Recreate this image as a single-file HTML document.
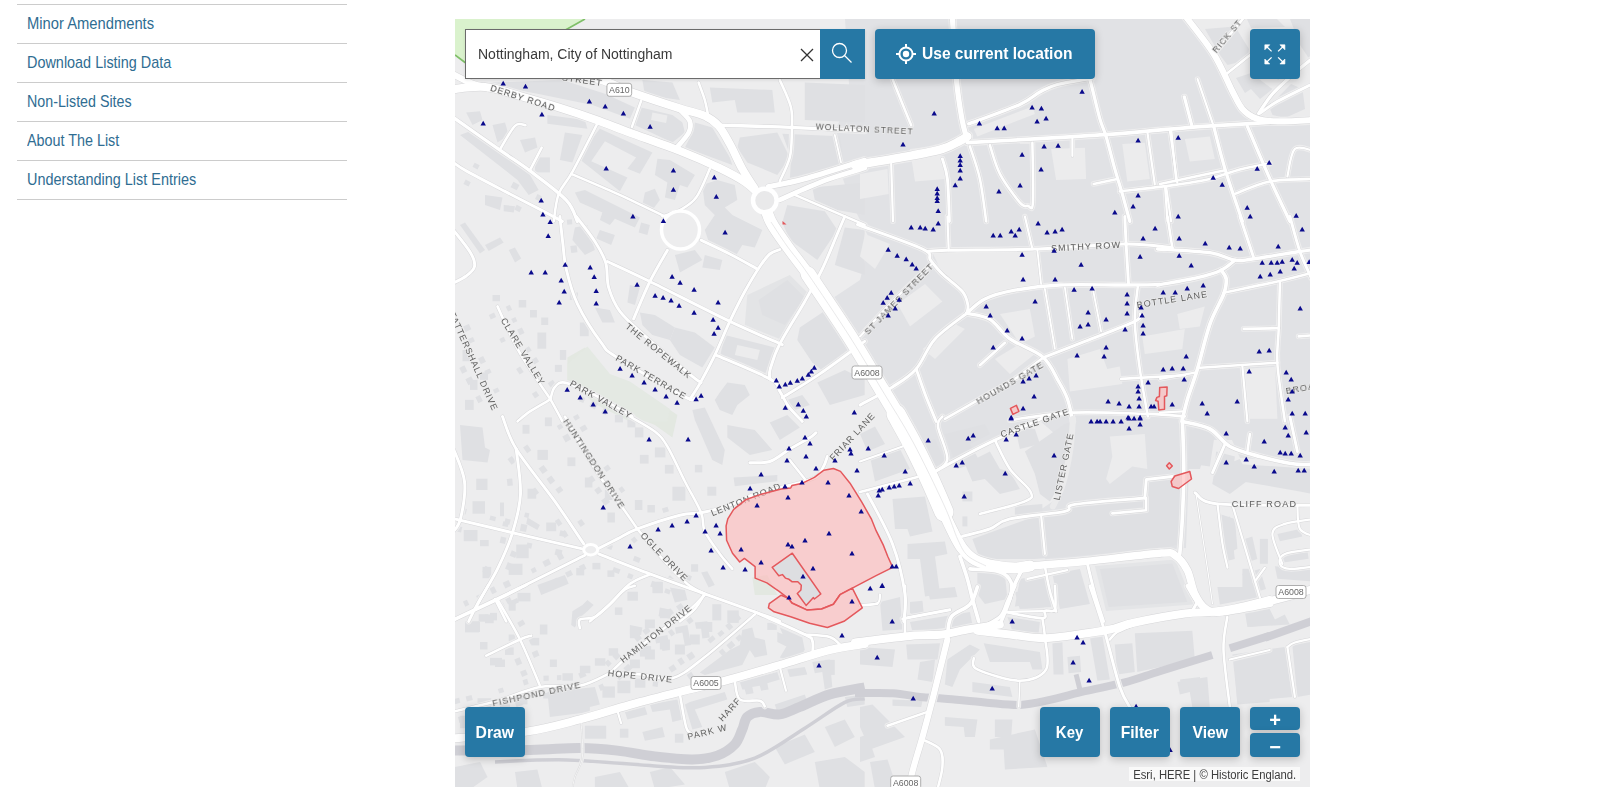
<!DOCTYPE html>
<html lang="en"><head><meta charset="utf-8"><title>Search the List - Map</title>
<style>
html,body{margin:0;padding:0;background:#fff;}
body{width:1621px;height:801px;overflow:hidden;position:relative;font-family:"Liberation Sans",sans-serif;}
.nav{position:absolute;left:17px;top:4px;width:330px;margin:0;padding:0;list-style:none;border-bottom:1px solid #ccc;}
.nav li{height:38px;border-top:1px solid #ccc;line-height:38px;padding-left:10px;font-size:16.4px;color:#2f6d92;white-space:nowrap;}
.nav li span{position:relative;top:-1px;display:inline-block;transform-origin:0 50%;transform:scaleX(.9);}
.btn b{display:inline-block;font-weight:bold;}
#map{position:absolute;left:455px;top:19px;width:855px;height:768px;overflow:hidden;background:#ededee;}
#map svg{position:absolute;left:0;top:0;}
.btn{position:absolute;background:#2678a5;color:#fff;border-radius:4px;box-shadow:0 2px 8px rgba(0,0,0,.22);font-weight:bold;font-size:17px;text-align:center;box-sizing:border-box;}
.search{position:absolute;left:10px;top:10px;width:400px;height:50px;box-sizing:border-box;background:#fff;border:1px solid #6b6b6b;box-shadow:0 1px 3px rgba(0,0,0,.10);}
.search .txt{position:absolute;left:12px;top:0;line-height:48px;font-size:14px;color:#3a3a3a;}
.search .go{position:absolute;right:-1px;top:-1px;width:45px;height:50px;background:#2678a5;}
.attr{position:absolute;left:674px;top:748px;width:171px;height:14px;background:rgba(255,255,255,.65);font-size:12px;line-height:16px;color:#3c3c3c;text-align:center;white-space:nowrap;}
</style></head><body>
<ul class="nav">
<li><span>Minor Amendments</span></li>
<li><span style="transform:scaleX(0.88)">Download Listing Data</span></li>
<li><span style="transform:scaleX(0.87)">Non-Listed Sites</span></li>
<li><span style="transform:scaleX(0.875)">About The List</span></li>
<li><span style="transform:scaleX(0.88)">Understanding List Entries</span></li>
</ul>
<div id="map">
<svg id="basemap" width="855" height="768" viewBox="455 19 855 768">
<!--MAP-->
<rect x="455" y="19" width="855" height="768" fill="#ededee"/>
<path d="M567.4 357.4 L584.9 347.5 L594.9 357.4 L604.9 372.4 L629.9 382.4 L677.4 414.9 L672.4 437.4 L654.9 424.9 L629.9 414.9 L594.9 399.9 L567.4 379.9Z" fill="#e3e8e1"/>
<path d="M752.3 577.4 L767.3 574.9 L777.3 594.9 L754.8 594.9Z" fill="#e3e8e1"/>
<path d="M455 19 L585 19 Q540 45 500 62 Q480 70 465 62.5 L455 55 Z" fill="#daf2cd"/><path d="M585 19 Q540 45 500 62 Q480 70 465 62.5 L455 55" fill="none" stroke="#7fbf68" stroke-width="1.7"/>
<path d="M567.4 363.9 L587.4 346.4 L609.9 373.9 L629.9 381.4 L669.9 408.9 L667.4 421.4 L629.9 421.4 L594.9 403.9 L567.4 378.9Z" fill="#e4e9e3"/>
<g fill="#dfe0e3">
<path d="M845 19 L1310 19 L1310 462 L1240 458 L1232 440 L1190 440 L1186 548 L1045 560 L1040 510 L1055 500 L1062 440 L1040 421 L935 471 L913 442 L882 390 L850 337 L830 300 L860 280 L870 240 L850 200 L830 140 L850 100Z" fill="#e1e2e5"/>
<path d="M492.5 82.5 L562.4 80 L604.9 93.7 L634.9 107.5 L629.9 118.7 L592.4 105 L537.4 93.7 L517.5 90 L492.5 91.2Z"/>
<path d="M636.1 106.2 L672.4 115 L682.4 122.5 L684.9 132.5 L672.4 142.5 L634.9 125Z"/>
<path d="M652.4 112.5 L667.4 115.5 L666.1 123 L651.1 120Z" fill="#ececed"/>
<path d="M694.9 122.5 L712.3 127.5 L729.8 157.4 L732.3 164.9 L684.9 147.5 L689.9 137.5Z"/>
<path d="M709.8 87.5 L772.3 90 L774.8 112.5 L737.3 112.5 L734.8 100 L712.3 102.5Z"/>
<path d="M642.4 80 L672.4 82.5 L679.9 100 L644.9 95Z"/>
<path d="M739.8 137.5 L777.3 132.5 L789.8 157.4 L777.3 174.9 L747.3 162.4 L737.3 147.5Z"/>
<path d="M782.3 133.7 L839.8 136.2 L844.8 169.9 L789.8 179.9 L791 157.4Z"/>
<path d="M804.8 82.5 L864.7 85 L864.7 122.5 L804.8 120Z"/>
<path d="M787.3 204.9 L824.8 211.2 L837.3 229.9 L817.3 259.9 L789.8 239.9 L782.3 222.4Z"/>
<path d="M812.3 187.4 L864.7 182.4 L864.7 214.9 L837.3 209.9 L814.8 199.9Z"/>
<path d="M844.8 227.4 L864.7 229.9 L864.7 274.9 L834.8 264.9Z"/>
<path d="M577.4 157.4 L599.9 128.7 L652.4 152.5 L639.9 173.7 L627.4 168.7 L636.1 157.4 L604.9 141.2 L591.2 161.2 L627.4 177.4 L619.9 191.2Z"/>
<path d="M657.4 158.7 L669.9 159.9 L694.9 174.9 L687.4 187.4 L679.9 184.9 L674.9 199.9 L664.9 197.4 L667.4 182.4 L654.9 174.9Z"/>
<path d="M702.3 184.9 L717.3 179.9 L734.8 184.9 L737.3 199.9 L724.8 207.4 L732.3 214.9 L762.3 229.9 L754.8 247.4 L742.3 244.9 L734.8 257.4 L709.8 244.9 L704.8 229.9 L714.8 214.9 L704.8 204.9Z"/>
<path d="M547.4 115 L584.9 120 L587.4 128.7 L547.4 123.7Z"/>
<path d="M564.9 132.5 L582.4 135 L572.4 162.4 L559.9 159.9Z"/>
<path d="M466.2 112.5 L480 111.2 L482.5 120 L472.5 125Z"/>
<path d="M492.5 125 L505 122.5 L508.7 135 L497.5 142.5Z"/>
<path d="M520 140 L535 137.5 L537.4 147.5 L525 152.5Z"/>
<path d="M535 157.4 L549.9 157.4 L549.9 172.4 L535 172.4Z"/>
<path d="M460 135 L470 131.2 L530 174.9 L538.7 189.9 L528.7 194.9 L517.5 179.9Z"/>
<path d="M485 194.9 L502.5 197.4 L500 209.9 L485 204.9Z"/>
<path d="M503.7 204.9 L515 206.2 L513.7 212.4 L503.7 211.2Z"/>
<path d="M574.9 192.4 L584.9 189.9 L639.9 217.4 L634.9 227.4 L614.9 218.7 L609.9 224.9 L599.9 219.9 L602.4 212.4 L579.9 202.4Z"/>
<path d="M644.9 192.4 L654.9 188.7 L659.9 199.9 L652.4 209.9 L642.4 204.9Z"/>
<path d="M574.9 227.4 L587.4 224.9 L594.9 249.9 L584.9 254.9 L572.4 239.9Z"/>
<path d="M599.9 229.9 L614.9 234.9 L611.2 244.9 L596.2 238.6Z"/>
<path d="M641.1 222.4 L649.9 224.9 L647.4 234.9 L638.6 232.4Z"/>
<path d="M674.9 254.9 L694.9 249.9 L702.3 259.9 L679.9 272.4Z"/>
<path d="M704.8 254.9 L722.3 259.9 L719.8 269.9 L702.3 267.4Z"/>
<path d="M485 244.9 L500 237.4 L503.7 242.4 L488.7 251.1Z"/>
<path d="M508.7 249.9 L515 247.4 L521.2 258.6 L515 262.4Z"/>
<path d="M460 224.9 L465 222.4 L485 249.9 L480 253.6Z"/>
<path d="M747.3 295 L789.8 275 L809.8 295 L782.3 340 L744.8 325Z" fill="#e3e4e6"/>
<path d="M758.6 300 L787.3 280 L804.8 297.5 L784.8 325 L762.3 315Z"/>
<path d="M799.8 327.5 L829.8 307.5 L844.8 325 L852.3 347.5 L824.8 372.4 L812.3 362.4 L797.3 340Z"/>
<path d="M724.8 335 L774.8 347.5 L764.8 374.9 L719.8 357.4Z"/>
<path d="M737.3 345 L759.8 350 L757.3 359.9 L734.8 355Z" fill="#ececed"/>
<path d="M674.9 327.5 L694.9 332.5 L714.8 347.5 L702.3 367.4 L679.9 355 L669.9 340Z"/>
<path d="M639.9 312.5 L654.9 315 L674.9 327.5 L669.9 340 L652.4 335 L642.4 325Z"/>
<path d="M629.9 285 L639.9 287.5 L634.9 305 L627.4 302.5Z"/>
<path d="M719.8 392.4 L727.3 382.4 L744.8 384.9 L749.8 394.9 L737.3 404.9 L732.3 414.9 L719.8 409.9 L714.8 399.9Z"/>
<path d="M727.3 424.9 L754.8 429.9 L772.3 449.9 L749.8 454.9 L727.3 437.4Z"/>
<path d="M769.8 422.4 L787.3 414.9 L799.8 427.4 L779.8 439.9Z"/>
<path d="M817.3 382.4 L844.8 369.9 L864.7 379.9 L864.7 394.9 L829.8 404.9Z"/>
<path d="M787.3 399.9 L802.3 394.9 L809.8 404.9 L794.8 409.9Z"/>
<path d="M692.4 409.9 L704.8 407.4 L724.8 449.9 L722.3 464.9 L712.3 459.9 L694.9 419.9Z"/>
<path d="M460 424.9 L482.5 427.4 L485 447.4 L490 449.9 L487.5 462.4 L462.5 459.9Z"/>
<path d="M518.7 300 L526.2 300 L526.2 307.5 L518.7 307.5Z"/>
<path d="M537.4 332.5 L546.2 332.5 L546.2 348.7 L537.4 348.7Z"/>
<path d="M544.9 417.4 L551.9 417.4 L551.9 426.2 L544.9 426.2Z"/>
<path d="M522.5 424.9 L529.5 424.9 L529.5 433.7 L522.5 433.7Z"/>
<path d="M537.4 449.9 L547.9 449.9 L547.9 459.9 L537.4 459.9Z"/>
<path d="M614.9 414.9 L622.9 414.9 L622.9 422.4 L614.9 422.4Z"/>
<path d="M627.4 419.9 L635.4 419.9 L635.4 427.4 L627.4 427.4Z"/>
<path d="M634.9 427.4 L643.4 427.4 L643.4 437.4 L634.9 437.4Z"/>
<path d="M654.9 447.4 L665.4 447.4 L665.4 457.4 L654.9 457.4Z"/>
<path d="M569.9 292.5 L577.9 292.5 L577.9 300 L569.9 300Z"/>
<path d="M579.9 322.5 L588.7 322.5 L588.7 336.2 L579.9 336.2Z"/>
<path d="M480 372.4 L488 372.4 L488 379.9 L480 379.9Z"/>
<path d="M567.4 457.4 L575.4 457.4 L575.4 466.1 L567.4 466.1Z"/>
<path d="M492.5 295 L500 295 L500 301.2 L492.5 301.2Z"/>
<path d="M530 310 L536.9 310 L536.9 317.5 L530 317.5Z"/>
<path d="M541.2 317.5 L548.2 317.5 L548.2 325 L541.2 325Z"/>
<path d="M470 379.9 L477.5 379.9 L477.5 389.9 L470 389.9Z"/>
<path d="M465 399.9 L473.7 399.9 L473.7 409.9 L465 409.9Z"/>
<path d="M554.9 364.9 L561.9 364.9 L561.9 371.9 L554.9 371.9Z"/>
<path d="M559.9 350 L566.2 350 L566.2 359.9 L559.9 359.9Z"/>
<path d="M462.5 350 L470 350 L470 361.2 L462.5 361.2Z"/>
<path d="M639.9 454.9 L648.6 454.9 L648.6 463.6 L639.9 463.6Z"/>
<path d="M664.9 464.9 L673.6 464.9 L673.6 473.6 L664.9 473.6Z"/>
<path d="M694.9 464.9 L702.3 464.9 L702.3 472.4 L694.9 472.4Z"/>
<path d="M594.9 307.5 L609.9 310 L614.9 322.5 L602.4 322.5Z"/>
<path d="M537.4 584.9 L564.9 574.9 L568.7 583.7 L541.2 594.9Z"/>
<path d="M476.2 478.7 L487.5 478.7 L487.5 490 L476.2 490Z"/>
<path d="M527.5 488.7 L536.2 488.7 L536.2 498.7 L527.5 498.7Z"/>
<path d="M472.5 501.2 L485 501.2 L485 513.7 L472.5 513.7Z"/>
<path d="M500 502.5 L504 502.5 L504 516.2 L500 516.2Z"/>
<path d="M546.2 522.5 L556.2 522.5 L556.2 531.2 L546.2 531.2Z"/>
<path d="M463.7 530 L477.5 530 L477.5 541.2 L463.7 541.2Z"/>
<path d="M480 540 L488.7 540 L488.7 546.2 L480 546.2Z"/>
<path d="M516.2 544.5 L528.7 544.5 L528.7 558.2 L516.2 558.2Z"/>
<path d="M482.5 566.9 L491.2 566.9 L491.2 578.2 L482.5 578.2Z"/>
<path d="M508.7 563.7 L522.5 563.7 L522.5 574.9 L508.7 574.9Z"/>
<path d="M576.2 567.9 L584.2 567.9 L584.2 575.4 L576.2 575.4Z"/>
<path d="M607.4 570.4 L614.4 570.4 L614.4 576.9 L607.4 576.9Z"/>
<path d="M592.4 562.9 L600.4 562.9 L600.4 569.4 L592.4 569.4Z"/>
<path d="M517.5 592.9 L530.5 592.9 L530.5 601.4 L517.5 601.4Z"/>
<path d="M508.7 601.7 L515.7 601.7 L515.7 610.7 L508.7 610.7Z"/>
<path d="M478.7 614.2 L488.2 614.2 L488.2 621.7 L478.7 621.7Z"/>
<path d="M490 612.9 L497 612.9 L497 620.4 L490 620.4Z"/>
<path d="M465 621.2 L479 621.2 L479 632.4 L465 632.4Z"/>
<path d="M531.2 637.9 L539.2 637.9 L539.2 645.4 L531.2 645.4Z"/>
<path d="M490 657.9 L502 657.9 L502 665.4 L490 665.4Z"/>
<path d="M505 647.4 L513.7 647.4 L513.7 654.9 L505 654.9Z"/>
<path d="M627.4 591.7 L637.9 591.7 L637.9 600.7 L627.4 600.7Z"/>
<path d="M652.4 581.7 L662.9 581.7 L662.9 593.2 L652.4 593.2Z"/>
<path d="M614.9 607.4 L622.4 607.4 L622.4 614.9 L614.9 614.9Z"/>
<path d="M672.4 486.7 L685.4 486.7 L685.4 500.7 L672.4 500.7Z"/>
<path d="M707.3 486.7 L716.3 486.7 L716.3 495.7 L707.3 495.7Z"/>
<path d="M691.1 564.2 L698.1 564.2 L698.1 571.7 L691.1 571.7Z"/>
<path d="M639.9 646.1 L651.1 646.1 L651.1 656.6 L639.9 656.6Z"/>
<path d="M712.3 604.2 L721.3 604.2 L721.3 620.4 L712.3 620.4Z"/>
<path d="M727.3 610.4 L738.8 610.4 L738.8 622.9 L727.3 622.9Z"/>
<path d="M767.3 622.9 L776.8 622.9 L776.8 629.9 L767.3 629.9Z"/>
<path d="M824.8 659.9 L834.8 659.9 L834.8 674.9 L824.8 674.9Z"/>
<path d="M584.9 477.5 L592.4 477.5 L592.4 487.5 L584.9 487.5Z"/>
<path d="M604.9 490 L612.4 490 L612.4 500 L604.9 500Z"/>
<path d="M634.9 500 L642.4 500 L642.4 510 L634.9 510Z"/>
<path d="M647.4 505 L654.9 505 L654.9 512.5 L647.4 512.5Z"/>
<path d="M607.4 512.5 L614.9 512.5 L614.9 522.5 L607.4 522.5Z"/>
<path d="M527.5 517.5 L539.9 525 L537.4 530 L526.2 523.7Z"/>
<path d="M572.4 611.2 L582.4 604.9 L587.4 599.9 L593.7 604.9 L587.4 611.2 L579.9 617.4 L574.9 627.4 L571.2 624.9Z"/>
<path d="M669.9 587.4 L684.9 589.9 L687.4 599.9 L674.9 602.4Z"/>
<path d="M659.9 607.4 L672.4 609.9 L669.9 618.7 L658.6 616.2Z"/>
<path d="M629.9 624.9 L642.4 627.4 L641.1 634.9 L629.9 633.7Z"/>
<path d="M701.1 572.4 L707.3 571.2 L714.8 584.9 L708.6 587.4Z"/>
<path d="M733.6 477.5 L777.3 475 L777.3 481.2 L734.8 486.2Z"/>
<path d="M654.9 637.4 L667.4 634.9 L669.9 649.9 L662.4 651.1 L661.1 642.4 L656.1 643.6Z"/>
<path d="M674.9 627.4 L687.4 624.9 L691.1 644.9 L684.9 646.1 L682.4 632.4 L676.1 633.7Z"/>
<path d="M694.9 622.4 L707.3 621.2 L709.8 637.4 L702.3 638.6 L701.1 628.7 L696.1 628.7Z"/>
<path d="M742.3 629.9 L752.3 627.4 L754.8 637.4 L764.8 639.9 L767.3 654.9 L754.8 657.4 L749.8 649.9 L742.3 664.9 L704.8 674.9 L699.8 672.4 L729.8 649.9 L739.8 644.9Z"/>
<path d="M779.8 627.4 L802.3 637.4 L804.8 649.9 L789.8 659.9 L779.8 657.4 L787.3 644.9Z"/>
<path d="M547.4 691.9 L594.9 686.9 L599.9 704.4 L589.9 706.9 L589.9 711.9 L549.9 716.9Z"/>
<path d="M602.4 686.4 L614.9 686.4 L614.9 697.7 L602.4 697.7Z"/>
<path d="M617.4 680.7 L630.4 680.7 L630.4 693.2 L617.4 693.2Z"/>
<path d="M634.9 678.7 L645.4 678.7 L645.4 687.7 L634.9 687.7Z"/>
<path d="M584.9 725.7 L606.2 725.7 L606.2 738.7 L584.9 738.7Z"/>
<path d="M619.9 728.7 L628.4 728.7 L628.4 737.7 L619.9 737.7Z"/>
<path d="M674.9 733.7 L683.4 733.7 L683.4 742.7 L674.9 742.7Z"/>
<path d="M562.4 673.2 L572.9 673.2 L572.9 680.7 L562.4 680.7Z"/>
<path d="M579.9 665.7 L590.4 665.7 L590.4 673.2 L579.9 673.2Z"/>
<path d="M594.9 658.2 L605.4 658.2 L605.4 665.7 L594.9 665.7Z"/>
<path d="M608.7 648.2 L618.1 648.2 L618.1 655.7 L608.7 655.7Z"/>
<path d="M460 715.7 L470.5 715.7 L470.5 728.2 L460 728.2Z"/>
<path d="M477.5 698.2 L491.2 698.2 L491.2 708.2 L477.5 708.2Z"/>
<path d="M500 704.4 L510 704.4 L510 711.9 L500 711.9Z"/>
<path d="M517.5 696.9 L527.5 696.9 L527.5 704.4 L517.5 704.4Z"/>
<path d="M539.9 624.5 L547.4 624.5 L547.4 634.5 L539.9 634.5Z"/>
<path d="M549.9 659.5 L556.9 659.5 L556.9 667 L549.9 667Z"/>
<path d="M480 642 L487.5 642 L487.5 649.5 L480 649.5Z"/>
<path d="M495 659.5 L505 659.5 L505 667 L495 667Z"/>
<path d="M508.7 634.5 L515.2 634.5 L515.2 641 L508.7 641Z"/>
<path d="M470 622 L480 622 L480 632 L470 632Z"/>
<path d="M485 614.5 L493.7 614.5 L493.7 623.2 L485 623.2Z"/>
<path d="M624.9 711.9 L644.9 706.9 L647.4 714.4 L627.4 719.4Z"/>
<path d="M649.9 704.4 L677.4 699.4 L682.4 719.4 L672.4 721.9 L669.9 709.4 L652.4 711.9Z"/>
<path d="M689.9 701.9 L724.8 691.9 L727.3 699.4 L694.9 709.4 L702.3 726.9 L692.4 729.4 L684.9 704.4Z"/>
<path d="M642.4 731.9 L662.4 726.9 L664.9 736.9 L644.9 740.7Z"/>
<path d="M739.8 681.9 L777.3 671.9 L779.8 679.4 L767.3 683.2 L768.6 689.4 L761.1 690.7 L759.8 685.7 L752.3 686.9 L753.6 693.2 L746.1 694.4 L744.8 689.4 L742.3 689.4Z"/>
<path d="M787.3 669.4 L804.8 667 L807.3 674.4 L789.8 676.9Z"/>
<path d="M812.3 662 L829.8 659.5 L832.3 686.9 L824.8 689.4 L822.3 671.9 L814.8 673.2Z"/>
<path d="M774.8 704.4 L804.8 694.4 L807.3 701.9 L777.3 711.9Z"/>
<path d="M777.3 632 L802.3 642 L804.8 657 L789.8 659.5 L787.3 647 L777.3 642Z"/>
<path d="M455 766.9 L480 761.9 L487.5 776.9 L470 789.4 L455 789.4Z"/>
<path d="M515 771.9 L537.4 769.4 L542.4 789.4 L517.5 789.4Z"/>
<path d="M594.9 776.9 L619.9 771.9 L629.9 789.4 L594.9 789.4Z"/>
<path d="M649.9 771.9 L669.9 766.9 L684.9 784.4 L654.9 789.4Z"/>
<path d="M724.8 771.9 L754.8 761.9 L769.8 776.9 L764.8 789.4 L729.8 789.4Z"/>
<path d="M774.8 746.9 L804.8 734.4 L814.8 751.9 L784.8 764.4Z"/>
<path d="M824.8 726.9 L844.8 719.4 L854.8 736.9 L834.8 746.9Z"/>
<path d="M814.8 761.9 L844.8 756.9 L864.7 771.9 L864.7 789.4 L819.8 789.4Z"/>
<path d="M844.8 696.9 L864.7 694.4 L864.7 704.4 L847.3 706.9Z"/>
<path d="M629.9 629.5 L639.9 629.5 L639.9 638.2 L629.9 638.2Z"/>
<path d="M644.9 619.5 L654.9 619.5 L654.9 628.2 L644.9 628.2Z"/>
<path d="M659.9 609.5 L669.9 609.5 L669.9 618.2 L659.9 618.2Z"/>
<path d="M674.9 644.5 L684.9 644.5 L684.9 654.5 L674.9 654.5Z"/>
<path d="M689.9 634.5 L699.8 634.5 L699.8 644.5 L689.9 644.5Z"/>
<path d="M702.3 622 L712.3 622 L712.3 632 L702.3 632Z"/>
<path d="M644.9 649.5 L654.9 649.5 L654.9 659.5 L644.9 659.5Z"/>
<path d="M659.9 639.5 L669.9 639.5 L669.9 649.5 L659.9 649.5Z"/>
<path d="M629.9 659.5 L639.9 659.5 L639.9 668.2 L629.9 668.2Z"/>
<path d="M892.5 499 L925 496.5 L932.5 531.4 L910 536.4 L907.5 528.9 L895 528.9Z"/>
<path d="M907.5 543.9 L944.9 541.4 L947.4 553.9 L935 556.4 L940 593.9 L925 596.4 L920 558.9 L907.5 558.9Z"/>
<path d="M860 434 L875 426.5 L885 444 L867.5 451.5Z"/>
<path d="M870 456.5 L900 449 L910 469 L875 481.5Z"/>
<path d="M910 603.9 L922.5 602.6 L923.7 612.6 L911.2 613.9Z"/>
<path d="M944.9 434 L984.9 424 L989.9 434 L969.9 444 L979.9 461.5 L957.4 469Z"/>
<path d="M925 441.5 L935 439 L944.9 461.5 L935 466.5Z"/>
<path d="M964.9 464 L989.9 451.5 L999.9 469 L1009.9 471.5 L1019.9 489 L999.9 494 L984.9 479 L972.4 481.5Z"/>
<path d="M1014.9 426.5 L1034.9 429 L1039.9 444 L1019.9 449Z"/>
<path d="M1024.9 451.5 L1064.9 424 L1072.4 421.5 L1067.4 451.5 L1059.9 484 L1049.9 501.4 L1039.9 494 L1034.9 474Z"/>
<path d="M962.4 491.5 L972.4 491.5 L972.4 501.4 L962.4 501.4Z"/>
<path d="M1014.9 506.4 L1042.4 503.9 L1042.4 513.9 L1014.9 516.4Z"/>
<path d="M962.4 516.4 L967.4 516.4 L967.4 526.4 L962.4 526.4Z"/>
<path d="M972.4 538.9 L1034.9 516.4 L1064.9 512.7 L1074.9 505.2 L1144.8 499 L1147.3 480.2 L1172.3 477.7 L1179.8 481.5 L1179.8 543.9 L1159.8 548.9 L1034.9 558.9 L979.9 558.9Z"/>
<path d="M1094.9 565.9 L1175.3 559.4 L1193.5 604.4 L1106.1 610.9Z" fill="#e4e5e7"/>
<path d="M1099.9 568.9 L1172.3 563.4 L1187.3 601.9 L1108.6 606.9Z"/>
<path d="M977.4 571.4 L1004.9 573.9 L1007.4 598.9 L984.9 603.9 L977.4 593.9Z"/>
<path d="M1019.9 578.9 L1044.9 573.9 L1052.4 603.9 L1014.9 606.4Z"/>
<path d="M1052.4 573.9 L1079.9 568.9 L1089.9 603.9 L1059.9 608.9Z"/>
<path d="M1194.8 424 L1214.8 434 L1209.8 466.5 L1192.3 464Z"/>
<path d="M1214.8 469 L1239.8 459 L1249.8 479 L1229.8 494 L1212.3 484Z"/>
<path d="M1219.8 518.9 L1229.8 516.4 L1234.8 558.9 L1224.8 561.4Z"/>
<path d="M1244.8 538.9 L1252.3 536.4 L1257.3 558.9 L1249.8 561.4Z"/>
<path d="M1242.3 573.9 L1259.8 568.9 L1266 588.9 L1249.8 593.9Z"/>
<path d="M880 602 L900 597 L902.5 629.5 L882.5 630.7Z"/>
<path d="M910 602 L922.5 600.7 L922.5 612 L910 613.2Z"/>
<path d="M910 622 L969.9 612 L972.4 624.5 L912.5 632Z"/>
<path d="M927.5 589.5 L954.9 587 L957.4 597 L930 599.5Z"/>
<path d="M860 647 L895 649.5 L892.5 667 L860 664.5Z"/>
<path d="M906.2 644.5 L940 643.2 L937.5 659.5 L907.5 659.5Z"/>
<path d="M920 662 L935 659.5 L932.5 681.9 L917.5 679.4Z"/>
<path d="M947.4 659.5 L969.9 644.5 L979.9 649.5 L959.9 669.4 L952.4 686.9 L944.9 684.4Z"/>
<path d="M983.7 643.2 L1039.9 652 L1042.4 669.4 L1032.4 669.4 L1029.9 662 L989.9 662Z"/>
<path d="M972.4 681.9 L1009.9 686.9 L1012.4 696.9 L972.4 691.9Z"/>
<path d="M1052.4 643.2 L1062.4 642 L1063.6 674.4 L1053.6 674.4Z"/>
<path d="M1089.9 637 L1102.3 635.7 L1109.8 679.4 L1097.4 680.7Z"/>
<path d="M1067.4 657 L1079.9 655.7 L1081.1 671.9 L1068.6 673.2Z"/>
<path d="M1114.8 644.5 L1132.3 643.2 L1134.8 671.9 L1117.3 674.4Z"/>
<path d="M1134.8 633.2 L1192.3 630.7 L1194.8 659.5 L1137.3 671.9Z"/>
<path d="M892.5 699.4 L922.5 700.7 L921.2 706.9 L892.5 705.7Z"/>
<path d="M860 706.9 L872.5 704.4 L905 736.9 L870 749.4 L860 726.9Z"/>
<path d="M944.9 716.9 L977.4 719.4 L974.9 736.9 L964.9 736.9 L963.7 726.9 L944.9 725.7Z"/>
<path d="M994.9 719.4 L1012.4 719.4 L1011.2 736.9 L994.9 736.9Z"/>
<path d="M989.9 739.4 L1034.9 729.4 L1047.4 766.9 L1004.9 769.4 L1003.7 749.4 L989.9 749.4Z"/>
<path d="M1177.3 681.9 L1207.3 676.9 L1209.8 706.9 L1192.3 706.9 L1189.8 691.9 L1179.8 694.4Z"/>
<path d="M1234.8 669.4 L1269.7 662 L1269.7 701.9 L1237.3 704.4Z"/>
<path d="M1247.3 609.5 L1269.7 607 L1269.7 624.5 L1249.8 627Z"/>
<path d="M1014.9 592 L1049.9 589.5 L1051.1 607 L1019.9 609.5Z"/>
<path d="M982.4 592 L999.9 589.5 L1003.7 599.5 L984.9 602Z"/>
<path d="M1007.4 617 L1039.9 622 L1038.6 633.2 L1012.4 630.7Z"/>
<path d="M870 761.9 L887.5 759.4 L897.5 789.4 L875 789.4Z"/>
<path d="M860 736.9 L867.5 734.4 L875 756.9 L860 761.9Z"/>
<path d="M1190 429 L1209.9 434 L1200 468.9 L1187.5 468.9Z"/>
<path d="M1216.2 451.5 L1234.9 456.5 L1232.4 476.4 L1213.7 472.7Z"/>
<path d="M1237.4 463.9 L1312.3 468.9 L1312.3 493.9 L1299.8 491.4 L1242.4 481.4Z"/>
<path d="M1219.9 513.9 L1234.9 518.9 L1237.4 548.8 L1227.4 553.8 L1222.4 531.4Z"/>
<path d="M1244.9 538.9 L1252.4 538.9 L1252.4 553.8 L1244.9 553.8Z"/>
<path d="M1259.9 538.9 L1267.9 538.9 L1267.9 563.8 L1259.9 563.8Z"/>
<path d="M1242.4 568.8 L1252.9 568.8 L1252.9 591.3 L1242.4 591.3Z"/>
<path d="M1277.4 533.9 L1299.8 528.9 L1302.3 536.4 L1279.9 541.3Z"/>
<path d="M1282.3 553.8 L1307.3 550.1 L1308.6 558.8 L1283.6 562.6Z"/>
<path d="M1274.9 566.3 L1312.3 568.8 L1312.3 581.3 L1277.4 578.8Z"/>
<path d="M1232.4 654.4 L1284.8 646.9 L1292.3 696.9 L1237.4 701.9Z"/>
<path d="M1180 679.4 L1200 676.9 L1202.4 696.9 L1192.5 698.1 L1191.2 686.9 L1181.2 688.1Z"/>
<path d="M1244.9 612 L1269.9 609.5 L1274.9 619.5 L1284.8 614.5 L1289.8 624.5 L1247.4 627Z"/>
<path d="M1292.3 644.4 L1312.3 639.4 L1312.3 694.4 L1297.3 696.9Z"/>
<path d="M1217.4 587 L1259.9 587 L1259.9 597 L1219.9 604.5Z"/>
<path d="M932.5 252.7 L1037.4 251 L1040.4 284.5 L1014.9 289.5 L984.9 298.5 L967.9 311.9 L962.9 292 L942.9 274.5Z" fill="#ececed"/>
<path d="M865 234 L890 244 L875 269 L860 256.5Z" fill="#ececed"/>
<path d="M897.5 303.9 L925 284 L942.4 301.4 L910 326.4Z" fill="#ececed"/>
<path d="M922.5 348.9 L954.9 323.9 L964.9 328.9 L935 358.9Z" fill="#ececed"/>
<path d="M1067.4 358.9 L1099.9 348.9 L1107.3 368.9 L1119.8 366.4 L1122.3 383.9 L1069.9 391.4Z" fill="#ececed"/>
<path d="M994.9 358.9 L1019.9 343.9 L1034.9 353.9 L1009.9 373.9Z" fill="#ececed"/>
<path d="M999.9 313.9 L1029.9 308.9 L1034.9 336.4 L1019.9 343.9Z" fill="#ececed"/>
<path d="M1177.3 313.9 L1204.8 306.4 L1199.8 326.4 L1179.8 328.9Z" fill="#ececed"/>
<path d="M1142.3 336.4 L1184.8 328.9 L1182.3 348.9 L1144.8 353.9Z" fill="#ececed"/>
<path d="M1191.2 17.8 L1312.3 17.8 L1312.3 118.9 L1259.9 117.6 L1246.1 110.1 L1234.9 91.4 L1216.2 54Z" fill="#ececed"/>
<path d="M1205 29 L1235 26.5 L1249 49 L1247.5 60 L1227.5 65 L1220 55Z"/>
<path d="M1236 78 L1251 73 L1272.5 89 L1260 99 L1251 89 L1245 93Z"/>
<path d="M1269 106.5 L1291 84 L1302.5 89 L1305 109 L1285 118 L1272.5 115Z"/>
<path d="M1247 19 L1277 19 L1285 27 L1251 28Z"/>
<path d="M1290 19 L1310 19 L1310 60 L1300 45Z"/>
<path d="M1262 60 L1285 45 L1300 62 L1278 80Z"/>
<path d="M1109.8 436.5 L1144.8 434 L1147.3 469 L1132.3 466.5 L1109.8 484 L1106.1 479 L1112.3 456.5Z" fill="#ececed"/>
<path d="M1244.9 368.8 L1274.9 366.8 L1277.4 418.8 L1247.9 418.8Z" fill="#ececed"/>
<path d="M1051.1 148.9 L1084.9 147.7 L1086.1 178.9 L1056.1 180.1Z" fill="#ececed"/>
<path d="M1019.9 136.4 L1034.9 136.4 L1034.9 143.9 L1019.9 143.9Z" fill="#ececed"/>
<path d="M973.7 128.9 L1032.4 106.4 L1034.9 113.9 L977.4 136.4Z" fill="#ececed"/>
<path d="M1122.3 143.9 L1144.8 142.7 L1149.8 178.9 L1127.3 181.4Z" fill="#ececed"/>
<path d="M910 148.9 L940 145.2 L944.9 178.9 L915 181.4Z" fill="#ececed"/>
<path d="M860 173.9 L887.5 168.9 L888.7 193.9 L860 198.9Z" fill="#ececed"/>
<path d="M1184.8 138.9 L1209.8 136.4 L1214.8 158.9 L1189.8 161.4Z" fill="#ececed"/>
<path d="M494.1 312.5 L496.1 316.9 L490.8 319.4 L488.8 315Z"/>
<path d="M509.8 304.8 L512.1 309.7 L508 311.6 L505.7 306.7Z"/>
<path d="M515.4 317 L517.3 321.2 L513.2 323.1 L511.2 319Z"/>
<path d="M503.7 336.8 L505.7 341.1 L501.3 343.1 L499.3 338.9Z"/>
<path d="M521.9 327.5 L524.5 332.9 L519.7 335.2 L517.1 329.8Z"/>
<path d="M528.9 346.2 L531.7 350.6 L527.8 353.1 L525 348.7Z"/>
<path d="M520.1 366.4 L523.7 372 L519.6 374.6 L516.1 369Z"/>
<path d="M536.2 356.9 L539.1 361.4 L534.4 364.5 L531.5 359.9Z"/>
<path d="M536.1 391 L539.2 395.6 L535 398.4 L531.9 393.8Z"/>
<path d="M552.8 379.8 L555.8 384.2 L550.7 387.6 L547.7 383.3Z"/>
<path d="M468.9 323.9 L471.3 329.2 L465.6 331.9 L463.1 326.6Z"/>
<path d="M472.9 337 L474.9 341.3 L469.9 343.6 L467.9 339.3Z"/>
<path d="M464.4 365.3 L467.3 371.2 L462.2 373.7 L459.3 367.9Z"/>
<path d="M483.1 356.1 L486 361.7 L480.9 364.3 L478 358.6Z"/>
<path d="M471.2 376.3 L474.2 382.3 L468.4 385.2 L465.4 379.2Z"/>
<path d="M489.6 368.4 L491.6 372.5 L486.3 375.1 L484.2 371Z"/>
<path d="M479.9 395 L482.9 400.9 L478.4 403.2 L475.4 397.2Z"/>
<path d="M497.7 387.4 L499.7 391.3 L494.8 393.8 L492.8 389.8Z"/>
<path d="M561 423.5 L563.4 427.6 L559.1 430 L556.7 425.9Z"/>
<path d="M577.7 414 L579.9 418.1 L575.3 420.7 L573 416.7Z"/>
<path d="M567.8 433.5 L571.1 439.2 L565.6 442.4 L562.3 436.6Z"/>
<path d="M585 424.4 L587.7 429 L582.2 432.2 L579.5 427.5Z"/>
<path d="M592 475.3 L595.5 480.2 L591.5 483.1 L588 478.2Z"/>
<path d="M607.9 464.4 L611 468.8 L606.4 472.1 L603.3 467.7Z"/>
<path d="M598.9 486.5 L602.3 491.3 L597.6 494.6 L594.2 489.9Z"/>
<path d="M606.3 496.8 L610.1 502.1 L605 505.8 L601.1 500.5Z"/>
<path d="M622 486.2 L625.2 490.6 L621.5 493.3 L618.3 488.8Z"/>
<path d="M512.2 478.4 L512.9 485.5 L507.5 486.1 L506.8 479Z"/>
<path d="M529.4 513.3 L528.4 518 L524.1 517.1 L525.1 512.4Z"/>
<path d="M508.8 522.3 L507.8 527 L502.3 525.9 L503.3 521.2Z"/>
<path d="M527.4 525 L526 531.9 L519.8 530.7 L521.2 523.7Z"/>
<path d="M517.4 552.7 L515.2 558.1 L509.6 555.8 L511.8 550.3Z"/>
<path d="M513.7 564.5 L510.9 571.1 L505.1 568.7 L507.9 562.1Z"/>
<path d="M489.7 568.2 L486.5 573.8 L482.3 571.4 L485.5 565.8Z"/>
<path d="M511.8 456 L516 461.6 L511.6 464.8 L507.5 459.2Z"/>
<path d="M527.3 444.5 L531.4 450.2 L527.2 453.3 L523.1 447.6Z"/>
<path d="M543.6 464.9 L547.7 470.4 L542.6 474.1 L538.6 468.6Z"/>
<path d="M535.2 487.4 L539.1 492.7 L535.4 495.5 L531.5 490.1Z"/>
<path d="M551.3 475.6 L555.2 480.8 L550.4 484.4 L546.5 479.1Z"/>
<path d="M560.3 485.9 L563.4 490.2 L558.5 493.8 L555.3 489.5Z"/>
<path d="M558.8 518.5 L562.4 523.8 L558.4 526.4 L554.8 521.1Z"/>
<path d="M564.8 529.9 L568.5 535.4 L564.6 538.1 L560.9 532.6Z"/>
<path d="M581.5 518.9 L585 524 L580.7 526.9 L577.2 521.8Z"/>
<path d="M565.2 537.1 L559.2 535.7 L560.4 530.3 L566.5 531.7Z"/>
<path d="M561.1 556.3 L554.5 554.8 L555.9 548.7 L562.5 550.3Z"/>
<path d="M531.2 548.8 L526.2 547.6 L527.4 542.4 L532.4 543.6Z"/>
<path d="M509.4 524.8 L504.2 523.6 L505.5 518.3 L510.7 519.6Z"/>
<path d="M505 544 L499.6 542.7 L501 536.4 L506.4 537.7Z"/>
<path d="M495.1 521.2 L489.4 519.8 L490.5 515.5 L496.1 516.9Z"/>
<path d="M475.5 536.9 L470.7 535.8 L472 530.5 L476.7 531.6Z"/>
<path d="M465.6 514.5 L460.4 513.3 L461.7 507.9 L466.9 509.1Z"/>
<path d="M461 532.6 L456.4 531.5 L457.7 526 L462.3 527.1Z"/>
<path d="M586.5 568.7 L581.3 571.3 L578.8 566.3 L584 563.7Z"/>
<path d="M564.3 558.1 L559.3 560.6 L556.7 555.4 L561.7 552.9Z"/>
<path d="M573.1 574.8 L567.4 577.6 L565 572.8 L570.7 570Z"/>
<path d="M551.2 563.9 L545 567 L542.3 561.7 L548.6 558.6Z"/>
<path d="M559.6 582.6 L555 584.9 L552.5 579.9 L557 577.6Z"/>
<path d="M536.9 571.3 L532.7 573.4 L530.6 569.3 L534.8 567.1Z"/>
<path d="M511.3 585.7 L505.4 588.5 L502.6 582.7 L508.5 579.9Z"/>
<path d="M519 602.2 L513.4 604.9 L511.4 600.6 L517 597.9Z"/>
<path d="M496.9 592.1 L492.3 594.3 L489.5 588.4 L494 586.2Z"/>
<path d="M505.6 607.9 L499.2 610.9 L496.5 605.3 L502.9 602.2Z"/>
<path d="M483.6 598.2 L478.3 600.7 L476.1 596.1 L481.4 593.5Z"/>
<path d="M469.3 604.7 L465.3 606.7 L462.9 601.6 L466.9 599.7Z"/>
<path d="M607.6 543.7 L613 545.8 L611.4 550 L606 547.9Z"/>
<path d="M613.9 567.1 L620.5 569.6 L618.8 573.9 L612.2 571.4Z"/>
<path d="M628.7 573.1 L633.5 575 L631.8 579.4 L627 577.5Z"/>
<path d="M634.6 555.8 L640.8 558.2 L639 562.9 L632.8 560.5Z"/>
<path d="M652.2 580.8 L657.8 582.9 L655.8 588.4 L650.2 586.4Z"/>
<path d="M665.7 588.3 L670.9 590.2 L669.3 594.4 L664.1 592.5Z"/>
<path d="M672.2 568.7 L678.4 571 L676.9 575.3 L670.6 573Z"/>
<path d="M686.7 574.3 L692 576.3 L690.2 581.1 L684.9 579.2Z"/>
<path d="M634.4 536.5 L637.7 540.5 L634.1 543.5 L630.8 539.5Z"/>
<path d="M670 575.2 L673.7 578.8 L669.8 582.7 L666.1 579.1Z"/>
<path d="M661.9 508.6 L667.5 506.7 L669 511.3 L663.4 513.1Z"/>
<path d="M458 717 L462.6 715.8 L464.1 721.9 L459.5 723Z"/>
<path d="M452.6 699.4 L459.1 697.7 L460.4 702.8 L453.9 704.5Z"/>
<path d="M469.8 715.4 L476.7 713.7 L477.9 718.7 L471.1 720.4Z"/>
<path d="M465.6 696.4 L471.5 695 L472.8 700.1 L466.9 701.6Z"/>
<path d="M497.8 689 L502.7 687.4 L504.2 691.9 L499.3 693.5Z"/>
<path d="M514.7 701.5 L521.2 699.4 L523 705 L516.5 707.1Z"/>
<path d="M522.5 680.2 L527.1 678.8 L528.7 683.9 L524.1 685.4Z"/>
<path d="M543 693 L550.1 692.8 L550.3 698.4 L543.2 698.6Z"/>
<path d="M543.4 675.7 L548.7 675.5 L548.8 680.7 L543.6 680.9Z"/>
<path d="M556.7 692.5 L562.4 692.4 L562.6 697.9 L556.9 698.1Z"/>
<path d="M556.9 675.2 L561.3 675.1 L561.4 680.1 L557 680.2Z"/>
<path d="M570.3 692.9 L574.8 692.7 L575 697.2 L570.5 697.3Z"/>
<path d="M585.8 690.6 L591.2 688.3 L593.5 693.9 L588.1 696.2Z"/>
<path d="M578.2 673.6 L584.5 671 L586.5 675.9 L580.2 678.5Z"/>
<path d="M598.3 685.4 L602.7 683.5 L605 689.1 L600.6 690.9Z"/>
<path d="M615.6 676.2 L620.6 671.5 L624.5 675.8 L619.5 680.4Z"/>
<path d="M604.5 662.8 L608 659.6 L611.7 663.6 L608.3 666.9Z"/>
<path d="M623.3 668.2 L628.2 663.7 L632.4 668.3 L627.6 672.8Z"/>
<path d="M612.2 656.1 L616.8 651.8 L620.8 656.1 L616.2 660.4Z"/>
<path d="M644.5 650.2 L648.2 647.4 L652 652.3 L648.3 655.2Z"/>
<path d="M633.6 637.2 L638.4 633.5 L642 638.2 L637.2 641.9Z"/>
<path d="M642.2 630.7 L647.4 626.8 L650.7 631.2 L645.6 635.1Z"/>
<path d="M667.9 631.7 L671.6 629 L675.2 633.8 L671.5 636.5Z"/>
<path d="M666.4 611.2 L670.4 608.3 L674 613.1 L670 616Z"/>
<path d="M686 619.9 L690.5 616.7 L693.7 621.1 L689.3 624.3Z"/>
<path d="M676 606.6 L680.9 603 L684.3 607.7 L679.4 611.3Z"/>
<path d="M653.1 680.7 L658.3 681.3 L657.7 686.9 L652.5 686.3Z"/>
<path d="M668.3 667.7 L673.6 664.2 L676.8 669.2 L671.6 672.6Z"/>
<path d="M686.6 674.9 L691.3 671.8 L694.3 676.4 L689.6 679.5Z"/>
<path d="M677.2 659.9 L681.4 657.2 L684.9 662.7 L680.8 665.4Z"/>
<path d="M686.2 655.2 L691.8 651.6 L695.4 657 L689.8 660.7Z"/>
<path d="M718.7 651.7 L722.5 648.5 L726.1 652.8 L722.4 656Z"/>
<path d="M707.3 639.8 L712.6 635.3 L715.6 638.9 L710.3 643.4Z"/>
<path d="M726.4 645.2 L731.6 640.8 L735.4 645.3 L730.2 649.7Z"/>
<path d="M717.3 633.6 L721.6 629.9 L724.5 633.3 L720.1 637Z"/>
<path d="M735.4 637.9 L739.7 634.2 L743 638.1 L738.7 641.8Z"/>
<path d="M725.2 625.7 L729.3 622.3 L733.3 627 L729.3 630.4Z"/>
<path d="M744.5 632.5 L749.6 628.1 L752.6 631.7 L747.5 636Z"/>
<path d="M732.9 619 L738.2 614.5 L741.4 618.4 L736.2 622.8Z"/>
<path d="M509.6 596.7 L512.6 601.9 L508.1 604.5 L505.1 599.2Z"/>
<path d="M522.8 619.6 L525.4 624.1 L519.7 627.3 L517.2 622.7Z"/>
<path d="M533.6 638.1 L535.5 642.6 L530.7 644.6 L528.8 640.1Z"/>
<path d="M519.6 657.3 L522.2 663.4 L516.9 665.7 L514.3 659.6Z"/>
<path d="M537.2 650.1 L539.5 655.5 L534 657.9 L531.7 652.5Z"/>
<path d="M525.5 669.4 L527.8 674.6 L522.2 677 L520 671.8Z"/>
<path d="M580.9 396.3 L585.3 398 L583.3 403.1 L578.9 401.3Z"/>
<path d="M592.4 400.5 L598.1 403.7 L594.8 409.4 L589.2 406.2Z"/>
<path d="M603.9 407.8 L608.5 410.4 L605.7 415.3 L601.2 412.7Z"/>
<path d="M465.7 179.5 L470.8 182.2 L468.5 186.6 L463.4 183.9Z"/>
<path d="M474.7 162.7 L479.7 165.3 L477.5 169.5 L472.5 166.8Z"/>
<path d="M513.4 181.8 L519.5 185 L516.7 190.3 L510.6 187.2Z"/>
<path d="M516.7 204.8 L521.9 207.5 L519.5 212.2 L514.3 209.5Z"/>
<path d="M537.5 194.1 L541.7 196.3 L539.2 201.2 L535 199Z"/>
<path d="M571.8 219.2 L572.3 224.2 L567.3 224.7 L566.8 219.8Z"/>
<path d="M576.6 245.2 L577.5 252.2 L571.3 253 L570.3 246Z"/>
</g>
<g fill="none" stroke="#cfcfd5" stroke-linejoin="round">
<path d="M450 750.6 C463.3 750.5 508.4 750.3 530 749.9 C551.6 749.5 565.3 748.0 579.9 748.1 C594.5 748.2 604.9 749.2 617.4 750.6 C629.9 752.0 642.4 754.9 654.9 756.4 C667.4 757.9 682.0 759.5 692.4 759.4 C702.8 759.3 710.2 758.1 717.3 755.6 C724.4 753.1 730.6 748.8 734.8 744.4 C739.0 740.0 740.2 734.0 742.3 729.4 C744.4 724.8 744.4 719.8 747.3 716.9 C750.2 714.0 754.4 712.3 759.8 711.9 C765.2 711.5 773.1 715.2 779.8 714.4 C786.5 713.6 791.5 710.2 799.8 706.9 C808.1 703.6 819.0 697.6 829.8 694.4 C840.6 691.1 858.9 688.6 864.7 687.4" stroke-width="10"/>
<path d="M495 761.9 C507.1 761.6 540.8 759.2 567.4 759.9 C594.0 760.6 632.0 764.6 654.9 765.9 C677.8 767.1 688.1 768.7 704.8 767.4 C721.4 766.1 738.1 764.6 754.8 758.1 C771.5 751.6 789.8 737.5 804.8 728.2 C819.8 718.9 834.8 707.3 844.8 702.4 C854.8 697.5 861.4 699.5 864.7 698.9" stroke-width="3.5"/>
<path d="M855 693.2 C861.2 693.2 881.7 692.6 892.5 693.2 C903.3 693.8 911.3 696.0 920 696.9 C928.7 697.8 934.1 697.8 944.9 698.7 C955.7 699.6 972.4 701.4 984.9 702.4 C997.4 703.4 1009.1 705.3 1019.9 704.9 C1030.7 704.5 1039.1 702.2 1049.9 699.9 C1060.7 697.6 1072.4 694.1 1084.9 691.2 C1097.4 688.3 1112.3 685.7 1124.8 682.4 C1137.3 679.1 1145.2 675.8 1159.8 671.2 C1174.4 666.6 1203.5 657.7 1212.3 655" stroke-width="8"/>
<path d="M1229.8 648.2 L1269.7 635.7" stroke-width="8"/>
<path d="M1076.1 674.4 L1079.9 689.4" stroke-width="5"/>
<path d="M1264.9 637.7 L1322.4 617.5" stroke-width="8"/>
</g>
<g fill="none" stroke="#ededee" stroke-linecap="round" stroke-linejoin="round">
<path d="M450 89.5 C455.8 89.1 473.3 85.9 485 87 C496.7 88.1 507.5 92.5 520 96 C532.5 99.5 547.4 103.8 559.9 107.7 C572.4 111.6 583.2 115.2 594.9 119.4 C606.6 123.6 615.7 127.4 629.9 132.7 C644.1 137.9 664.9 145.0 679.9 150.9 C694.9 156.8 709.0 163.0 719.8 168.2 C730.6 173.4 738.3 177.6 744.8 181.9 C751.3 186.2 756.3 191.9 758.6 193.9" stroke-width="11.2"/>
<path d="M450 72.7 C453.3 74.4 463.8 80.2 470 82.7 C476.2 85.2 484.6 87.1 487.5 88" stroke-width="9.36"/>
<path d="M492.5 72.7 C502.9 73.0 537.8 73.6 554.9 74.5 C572.0 75.4 581.6 74.8 594.9 78 C608.2 81.2 620.7 88.4 634.9 93.5 C649.1 98.6 668.2 104.7 679.9 108.4 C691.5 112.1 698.3 113.0 704.8 115.9 C711.2 118.8 714.4 121.2 718.6 125.9 C722.8 130.6 725.8 136.7 729.8 143.9 C733.8 151.1 738.1 161.4 742.3 168.9 C746.5 176.4 752.7 185.6 754.8 188.9" stroke-width="11.2"/>
<path d="M719.8 125.2 C729.8 125.5 755.6 126.0 779.8 126.9 C803.9 127.9 850.6 130.2 864.7 130.9" stroke-width="6.53"/>
<path d="M641.1 100.9 L631.9 126.9" stroke-width="5.79"/>
<path d="M681.1 110.9 C682.6 112.7 688.6 117.8 689.9 121.4 C691.1 125.0 690.7 128.4 688.6 132.7 C686.5 136.9 679.3 144.5 677.4 146.9" stroke-width="8.04"/>
<path d="M598.7 120.9 C594.3 129.4 579.1 159.7 572.4 171.9 C565.7 184.1 561.8 185.7 558.7 193.9 C555.6 202.2 554.5 216.8 553.7 221.4" stroke-width="5.79"/>
<path d="M571.2 173.9 C578.9 177.2 601.8 186.8 617.4 193.9 C633.0 201.0 657.0 212.7 664.9 216.4" stroke-width="5.79"/>
<path d="M709.8 168.9 C707.5 173.7 701.1 190.7 696.1 197.6 C691.1 204.5 685.5 207.0 679.9 210.1 C674.3 213.2 665.3 215.3 662.4 216.4" stroke-width="5.79"/>
<path d="M452.5 116.9 C460.4 122.5 487.1 141.2 500 150.2 C512.9 159.2 519.0 162.6 530 170.9 C541.0 179.2 558.3 191.7 566.2 200.1 C574.1 208.5 575.5 217.8 577.4 221.4" stroke-width="6.53"/>
<path d="M500 149.4 C502.5 145.5 510.8 129.9 515 125.9 C519.2 121.9 523.8 125.3 525.5 125.2" stroke-width="5.79"/>
<path d="M530 170.2 L541.7 147.7" stroke-width="5.79"/>
<path d="M452.5 161.9 C454.8 163.4 457.4 166.0 466.2 170.9 C474.9 175.8 492.7 185.0 505 191.4 C517.3 197.8 530.3 204.4 539.9 209.4 C549.5 214.4 558.6 219.4 562.4 221.4" stroke-width="6.16"/>
<path d="M855 165.2 C864.2 163.6 895.4 158.6 910 155.9 C924.6 153.2 934.1 151.4 942.4 148.9 C950.7 146.4 955.7 143.0 959.9 140.9 C964.1 138.8 966.1 137.2 967.4 136.4" stroke-width="11.7"/>
<path d="M967.4 142.7 C978.6 142.1 1012.0 140.2 1034.9 138.9 C1057.8 137.6 1082.3 136.3 1104.8 134.7 C1127.3 133.1 1151.5 130.7 1169.8 129.2 C1188.1 127.7 1198.1 126.8 1214.8 125.7 C1231.5 124.6 1260.5 123.0 1269.7 122.4" stroke-width="6.9"/>
<path d="M952.4 16.5 C953.0 26.7 954.6 60.6 956.2 77.7 C957.8 94.8 960.1 108.7 961.9 118.9 C963.7 129.1 966.1 135.6 966.9 138.9" stroke-width="8.48"/>
<path d="M968.7 123.9 C977.2 120.7 1008.0 109.7 1019.9 104.4 C1031.8 99.1 1033.7 95.3 1039.9 92 C1046.2 88.7 1048.7 86.8 1057.4 84.5 C1066.2 82.2 1086.6 79.1 1092.4 78" stroke-width="6.53"/>
<path d="M1084.9 64 C1085.9 67.3 1088.6 74.8 1091.1 84 C1093.6 93.2 1097.4 110.2 1099.9 118.9 C1102.4 127.6 1103.6 128.1 1106.1 136.4 C1108.6 144.7 1112.1 159.3 1114.8 168.9 C1117.5 178.5 1119.8 185.2 1122.3 193.9 C1124.8 202.7 1128.5 216.8 1129.8 221.4" stroke-width="6.53"/>
<path d="M1184.8 96.5 L1192.3 125.2" stroke-width="5.42"/>
<path d="M1093.6 183.9 L1117.3 178.9" stroke-width="5.79"/>
<path d="M1119.8 191.4 C1128.1 190.4 1154.8 187.7 1169.8 185.6 C1184.8 183.5 1198.1 181.6 1209.8 178.9 C1221.5 176.2 1229.8 172.0 1239.8 169.4 C1249.8 166.8 1264.7 164.4 1269.7 163.4" stroke-width="5.79"/>
<path d="M1147.3 131.4 L1154.8 184.4" stroke-width="5.42"/>
<path d="M1169.8 130.2 L1177.3 182.6" stroke-width="5.42"/>
<path d="M1166.1 186.4 L1171.1 221.4" stroke-width="5.42"/>
<path d="M942.4 158.9 C943.2 162.2 946.2 168.5 947.4 178.9 C948.6 189.3 949.1 214.3 949.4 221.4" stroke-width="6.16"/>
<path d="M969.9 146.4 C971.6 151.8 977.2 166.4 979.9 178.9 C982.6 191.4 985.2 214.3 986.2 221.4" stroke-width="5.79"/>
<path d="M989.9 145.2 C991.6 150.0 994.9 164.3 999.9 173.9 C1004.9 183.5 1015.2 197.3 1019.9 202.6 C1024.6 207.9 1025.7 205.9 1027.9 205.9 C1030.1 205.9 1032.2 213.1 1032.9 202.6 C1033.7 192.1 1032.5 152.7 1032.4 142.7" stroke-width="5.79"/>
<path d="M1072.4 138.9 L1072.4 155.9" stroke-width="5.42"/>
<path d="M891.2 163.9 L893 221.4" stroke-width="5.42"/>
<path d="M892.5 79 C894.2 83.2 899.4 96.2 902.5 103.9 C905.6 111.6 909.8 121.7 911.2 125.2" stroke-width="5.79"/>
<path d="M1183.7 14 C1188.7 20.7 1205.6 41.1 1213.7 54 C1221.8 66.9 1227.7 82.3 1232.5 91.5 C1237.3 100.7 1238.5 104.4 1242.4 108.9 C1246.4 113.4 1250.4 116.3 1256.2 118.4 C1262.0 120.5 1267.6 121.2 1277.4 121.4 C1287.2 121.7 1308.7 120.2 1314.9 119.9" stroke-width="9.36"/>
<path d="M1215 52.7 L1244.9 16.5" stroke-width="5.79"/>
<path d="M1227 73.5 L1252.9 52.7" stroke-width="5.79"/>
<path d="M1258.7 113.4 C1261.0 110.2 1266.4 100.8 1272.4 94 C1278.4 87.2 1287.8 79.0 1294.9 72.7 C1302.0 66.5 1311.6 59.2 1314.9 56.5" stroke-width="6.53"/>
<path d="M1314.9 82.7 C1308.7 85.8 1286.6 96.3 1277.4 101.4 C1268.2 106.5 1262.8 111.4 1259.9 113.4" stroke-width="6.16"/>
<path d="M1197.5 79 L1213.7 126.4" stroke-width="5.42"/>
<path d="M1183.7 96.5 L1191.2 125.2" stroke-width="5.42"/>
<path d="M1213.7 126.4 C1215.6 133.5 1220.2 153.1 1225 168.9 C1229.8 184.7 1239.5 212.7 1242.4 221.4" stroke-width="6.53"/>
<path d="M1247.4 126.4 C1251.2 135.2 1262.8 163.1 1269.9 178.9 C1277.0 194.7 1286.6 214.3 1289.9 221.4" stroke-width="6.53"/>
<path d="M1160 183.9 L1225 170.2" stroke-width="5.79"/>
<path d="M1235 193.9 C1240.8 191.8 1256.6 183.9 1269.9 181.4 C1283.2 178.9 1307.4 179.3 1314.9 178.9" stroke-width="5.79"/>
<path d="M1171.2 128.9 L1176.2 181.4" stroke-width="5.42"/>
<path d="M1165 186.4 L1167.5 221.4" stroke-width="5.42"/>
<path d="M1287.4 176.4 C1288.7 171.8 1290.3 153.1 1294.9 148.9 C1299.5 144.7 1311.6 151.0 1314.9 151.4" stroke-width="5.42"/>
<path d="M576.2 216.5 C579.3 220.7 590.0 233.8 594.9 241.5 C599.8 249.2 603.4 255.0 605.7 262.7 C608.0 270.4 606.3 279.6 608.7 287.7 C611.1 295.8 613.9 303.4 619.9 311.4 C625.9 319.4 633.2 325.4 644.9 335.9 C656.6 346.4 680.5 366.6 689.9 374.4 C699.3 382.2 699.2 381.2 701.1 382.6" stroke-width="6.16"/>
<path d="M559.9 216.5 C560.4 221.1 561.8 235.2 562.9 244 C564.0 252.8 563.8 259.0 566.2 269 C568.6 279.0 571.6 291.6 577.4 303.9 C583.2 316.2 594.5 333.7 601.2 342.7 C607.9 351.7 603.5 348.7 617.4 357.7 C631.3 366.7 672.0 390.2 684.9 396.9 C697.8 403.6 693.2 397.7 694.9 397.9" stroke-width="6.16"/>
<path d="M689.9 399.4 C691.8 396.4 697.0 388.8 701.1 381.4 C705.2 374.0 710.0 365.2 714.8 355.2 C719.6 345.2 724.8 332.0 729.8 321.4 C734.8 310.8 739.8 300.6 744.8 291.5 C749.8 282.4 755.6 272.8 759.8 266.5 C764.0 260.2 766.5 256.8 769.8 254 C773.1 251.2 778.1 250.2 779.8 249.5" stroke-width="6.16"/>
<path d="M607.4 261.5 C614.5 264.8 629.5 271.5 649.9 281.5 C670.3 291.5 707.7 310.9 729.8 321.4 C751.9 331.9 773.5 340.8 782.3 344.7" stroke-width="6.16"/>
<path d="M667.4 250.2 C664.5 255.4 655.5 270.1 649.9 281.5 C644.3 292.9 636.3 312.7 633.6 318.9" stroke-width="6.16"/>
<path d="M701.1 240.2 C705.9 242.5 720.4 249.2 729.8 254 C739.2 258.8 752.7 266.5 757.3 269" stroke-width="6.16"/>
<path d="M716.1 355.2 C725.0 359.1 759.2 372.9 769.8 378.9 C780.4 384.9 776.7 386.8 779.8 391.4 C782.9 396.0 784.8 401.4 788.5 406.4 C792.2 411.4 800.0 418.9 802.3 421.4" stroke-width="6.16"/>
<path d="M769.8 378.9 C769.9 377.2 768.6 374.7 770.3 368.9 C772.0 363.1 774.0 355.1 779.8 343.9 C785.5 332.6 797.7 313.9 804.8 301.4 C811.9 288.9 816.9 280.2 822.3 269 C827.7 257.8 833.5 242.8 837.3 234 C841.0 225.2 843.5 219.4 844.8 216.5" stroke-width="6.16"/>
<path d="M782.3 397.6 C788.5 393.7 806.1 383.3 819.8 373.9 C833.5 364.5 857.2 346.8 864.7 341.4" stroke-width="6.16"/>
<path d="M452.5 229 C455.5 232.9 466.8 246.4 470.5 252.7 C474.2 258.9 475.2 262.6 474.5 266.5 C473.8 270.4 469.9 273.2 466.2 276 C462.5 278.8 454.8 282.2 452.5 283.5" stroke-width="6.16"/>
<path d="M497.5 306.4 C500.8 313.5 510.4 336.0 517.5 348.9 C524.6 361.8 534.4 375.5 539.9 383.9 C545.4 392.3 546.6 393.1 550.4 399.4 C554.1 405.6 560.4 417.7 562.4 421.4" stroke-width="5.79"/>
<path d="M550.4 399.4 C551.1 397.4 552.0 390.4 554.4 387.6 C556.8 384.8 558.6 381.6 564.9 382.6 C571.2 383.7 581.1 388.3 592.4 393.9 C603.6 399.5 625.7 412.6 632.4 416.4" stroke-width="5.79"/>
<path d="M550.4 399.4 C547.0 401.4 535.5 407.7 530 411.4 C524.5 415.1 519.6 419.7 517.5 421.4" stroke-width="5.79"/>
<path d="M857.5 224.5 C868.3 228.6 910.3 243.1 922.5 249 C934.7 254.9 927.2 256.0 930.5 260.2 C933.8 264.4 937.1 268.8 942.4 274 C947.7 279.2 958.1 286.3 962.4 291.5 C966.6 296.7 967.2 301.6 967.9 305.2 C968.6 308.8 966.9 312.0 966.7 313.4" stroke-width="6.16"/>
<path d="M927.5 251.5 C930.8 251.3 929.5 250.6 947.4 250.2 C965.3 249.8 1005.3 250.0 1034.9 249 C1064.5 248.0 1101.9 244.2 1124.8 244 C1147.7 243.8 1164.4 247.1 1172.3 247.7" stroke-width="6.16"/>
<path d="M966.7 313.4 C969.7 311.0 976.9 302.9 984.9 299 C992.9 295.1 1002.4 292.5 1014.9 290.2 C1027.4 287.9 1041.6 285.9 1059.9 285 C1078.2 284.1 1108.2 285.1 1124.8 285 C1141.4 284.9 1154.0 284.6 1159.8 284.5" stroke-width="6.53"/>
<path d="M860 336.4 C865.4 330.6 880.6 313.4 892.5 301.4 C904.4 289.4 924.8 270.6 931.2 264.5" stroke-width="5.42"/>
<path d="M966.7 313.4 C961.4 317.6 943.4 329.6 935 338.9 C926.6 348.1 923.3 360.9 916.2 368.9 C909.1 376.9 901.9 380.9 892.5 386.9 C883.1 392.9 865.4 402.1 860 405.1" stroke-width="6.16"/>
<path d="M916.2 368.9 C917.7 373.1 921.7 385.1 925 393.9 C928.3 402.6 934.3 416.8 936.2 421.4" stroke-width="6.16"/>
<path d="M944.9 418.9 C950.7 415.6 968.2 405.6 979.9 398.9 C991.6 392.2 1004.4 385.8 1014.9 378.9 C1025.4 372.0 1038.4 361.2 1043.1 357.7" stroke-width="5.79"/>
<path d="M966.7 313.4 C970.6 314.4 982.7 315.1 989.9 319.4 C997.1 323.6 1001.0 332.6 1009.9 338.9 C1018.8 345.2 1035.0 350.1 1043.1 357.2 C1051.2 364.3 1054.5 374.4 1058.6 381.4 C1062.6 388.3 1065.0 392.2 1067.4 398.9 C1069.8 405.6 1072.0 417.6 1072.9 421.4" stroke-width="6.53"/>
<path d="M1043.1 357.7 C1050.1 355.0 1069.6 347.4 1084.9 341.4 C1100.2 335.3 1125.6 326.0 1134.8 321.4 C1144.0 316.8 1139.4 315.1 1140.3 313.9" stroke-width="6.16"/>
<path d="M979.9 365.2 L1004.9 342.7" stroke-width="5.79"/>
<path d="M1124.8 216.5 C1125.0 221.1 1125.5 232.7 1126.1 244 C1126.7 255.3 1128.2 277.8 1128.6 284.5" stroke-width="6.16"/>
<path d="M1137.8 286.5 C1137.3 292.3 1134.5 307.7 1134.8 321.4 C1135.1 335.1 1137.6 353.1 1139.8 368.9 C1142.0 384.7 1146.5 408.5 1147.8 416.4" stroke-width="5.79"/>
<path d="M1121.1 378.9 L1184.8 375.2" stroke-width="5.79"/>
<path d="M1044.9 289 L1054.9 348.9" stroke-width="5.05"/>
<path d="M1064.9 287.7 L1072.4 338.9" stroke-width="5.05"/>
<path d="M1092.4 286.5 L1101.1 331.4" stroke-width="5.05"/>
<path d="M1037.4 250.2 L1041.1 284" stroke-width="5.05"/>
<path d="M947.4 216.5 L948.7 250.2" stroke-width="5.42"/>
<path d="M1024.9 216.5 L1032.4 249" stroke-width="5.42"/>
<path d="M1009.9 420.1 C1020.3 418.9 1049.5 413.6 1072.4 412.6 C1095.3 411.6 1128.6 413.3 1147.3 413.9 C1166.0 414.5 1178.5 416.0 1184.8 416.4" stroke-width="5.79"/>
<path d="M1157.5 249 C1166.2 249.6 1197.1 250.8 1210 252.7 C1222.9 254.6 1227.9 259.1 1235 260.2 C1242.1 261.2 1241.6 260.4 1252.4 259 C1263.2 257.6 1289.5 253.1 1299.9 251.5 C1310.3 249.9 1312.4 249.8 1314.9 249.5" stroke-width="6.53"/>
<path d="M1157.5 285.2 C1164.2 283.9 1186.9 280.2 1197.5 277.7 C1208.1 275.2 1215.0 273.1 1221.2 270.2 C1227.5 267.3 1232.7 261.9 1235 260.2" stroke-width="6.53"/>
<path d="M1221.2 270.2 C1222.0 271.7 1225.8 275.0 1226.2 279 C1226.6 283.0 1226.4 286.5 1223.7 294 C1221.0 301.5 1214.4 311.4 1210 323.9 C1205.6 336.4 1201.2 356.4 1197.5 368.9 C1193.8 381.4 1190.1 390.1 1187.5 398.9 C1184.9 407.6 1182.9 417.6 1182 421.4" stroke-width="6.9"/>
<path d="M1223.7 292.7 C1232.7 290.8 1262.2 284.9 1277.4 281.5 C1292.6 278.1 1308.7 273.6 1314.9 272" stroke-width="5.79"/>
<path d="M1240 216.5 L1253.7 257.7" stroke-width="6.16"/>
<path d="M1167.5 216.5 L1172.5 249" stroke-width="5.79"/>
<path d="M1289.9 216.5 C1291.6 222.3 1296.4 241.3 1299.9 251.5 C1303.5 261.7 1309.3 273.3 1311.2 277.7" stroke-width="6.16"/>
<path d="M1279.9 282.7 C1279.7 290.4 1279.1 315.4 1278.7 328.9 C1278.3 342.4 1276.4 348.5 1277.4 363.9 C1278.4 379.3 1283.7 411.8 1284.9 421.4" stroke-width="5.79"/>
<path d="M1200 367.7 L1277.4 362.7" stroke-width="5.79"/>
<path d="M1243.7 328.9 L1278.7 328.2" stroke-width="5.79"/>
<path d="M1242.4 366.4 L1247.4 421.4" stroke-width="5.42"/>
<path d="M1160 378.9 L1195 372.7" stroke-width="5.42"/>
<path d="M1298.7 336.4 L1314.9 335.2" stroke-width="5.79"/>
<path d="M1160 412.6 L1182.5 411.4" stroke-width="5.42"/>
<path d="M598.7 548.4 C601.8 546.8 611.0 542.1 617.4 538.9 C623.8 535.6 627.0 532.8 637.4 528.9 C647.8 525.0 669.3 517.9 679.9 515.2 C690.5 512.5 692.8 514.4 701.1 512.7 C709.4 511.0 720.8 508.3 729.8 505.2 C738.8 502.1 745.6 497.1 754.8 494 C764.0 490.9 774.8 489.2 784.8 486.5 C794.8 483.8 808.3 481.0 814.8 477.7 C821.2 474.4 821.4 470.0 823.5 466.5 C825.6 463.0 826.7 458.2 827.3 456.5" stroke-width="6.16"/>
<path d="M582.4 548.9 C570.8 546.2 534.1 537.8 512.5 532.7 C490.9 527.6 462.5 520.8 452.5 518.4" stroke-width="6.16"/>
<path d="M584.9 555.2 C573.7 560.8 539.6 578.1 517.5 588.9 C495.4 599.7 463.3 614.9 452.5 620.1" stroke-width="6.16"/>
<path d="M598.7 553.9 C607.2 557.2 632.2 567.2 649.9 573.9 C667.6 580.6 685.2 586.8 704.8 593.9 C724.4 601.0 754.8 611.8 767.3 616.4 C779.8 621.0 777.7 620.6 779.8 621.4" stroke-width="6.16"/>
<path d="M502.5 416.5 C504.8 421.9 507.5 434.9 516.2 449 C524.9 463.1 543.6 485.6 554.9 501.4 C566.1 517.2 578.9 536.8 583.7 543.9" stroke-width="6.16"/>
<path d="M516.2 449 C516.9 456.5 521.1 480.1 520.5 494 C519.9 507.9 516.3 520.2 512.5 532.7 C508.7 545.2 503.3 557.0 497.5 568.9 C491.7 580.8 482.3 595.1 477.5 603.9 C472.7 612.6 470.2 618.5 468.7 621.4" stroke-width="6.16"/>
<path d="M452.5 446.5 C454.5 452.3 463.2 469.4 464.5 481.5 C465.8 493.6 462.5 510.4 460.5 518.9 C458.5 527.4 453.8 530.4 452.5 532.7" stroke-width="6.16"/>
<path d="M564.9 416.5 C569.9 425.2 585.7 454.4 594.9 469 C604.1 483.6 612.8 493.9 619.9 503.9 C627.0 513.9 634.5 524.7 637.4 528.9" stroke-width="5.79"/>
<path d="M637.4 528.9 C641.6 533.9 654.1 549.7 662.4 558.9 C670.7 568.1 680.3 578.1 687.4 583.9 C694.5 589.7 701.9 592.2 704.8 593.9" stroke-width="5.79"/>
<path d="M629.9 416.5 C634.1 419.0 648.6 426.5 654.9 431.5 C661.1 436.5 662.4 438.2 667.4 446.5 C672.4 454.8 679.3 470.5 684.9 481.5 C690.5 492.5 697.8 504.4 701.1 512.7 C704.4 521.0 701.7 524.5 704.8 531.4 C707.9 538.3 715.2 547.6 719.8 553.9 C724.4 560.1 730.2 566.4 732.3 568.9" stroke-width="5.79"/>
<path d="M749.8 462.7 C753.1 462.5 763.1 463.8 769.8 461.5 C776.5 459.2 783.1 453.0 789.8 449 C796.5 445.0 805.4 440.4 809.8 437.7 C814.2 435.0 815.0 433.5 816 432.7" stroke-width="6.16"/>
<path d="M789.8 460.2 L804.8 479" stroke-width="5.79"/>
<path d="M495 598.9 L506.2 621.4" stroke-width="5.79"/>
<path d="M649.9 574.4 C646.6 576.0 636.6 579.0 629.9 583.9 C623.2 588.8 616.6 597.6 609.9 603.9 C603.2 610.1 593.2 618.5 589.9 621.4" stroke-width="5.79"/>
<path d="M704.8 593.9 C703.1 596.4 699.0 604.3 694.9 608.9 C690.8 613.5 682.4 619.3 679.9 621.4" stroke-width="5.79"/>
<path d="M1022.4 566.4 C1032.8 565.6 1062.0 563.6 1084.9 561.4 C1107.8 559.2 1144.8 554.2 1159.8 553.2 C1174.8 552.2 1170.2 552.4 1174.8 555.2 C1179.4 558.0 1184.0 563.8 1187.3 570.2 C1190.6 576.7 1191.7 587.5 1194.8 593.9 C1197.9 600.3 1201.4 605.9 1206 608.9 C1210.6 611.9 1211.7 612.8 1222.3 611.9 C1232.9 611.0 1261.8 604.8 1269.7 603.4" stroke-width="10.7"/>
<path d="M959.9 556.4 C961.1 560.1 965.3 571.8 967.4 578.9 C969.5 586.0 970.5 591.8 972.4 598.9 C974.3 606.0 977.7 617.6 978.7 621.4" stroke-width="6.9"/>
<path d="M969.9 568.9 C974.9 569.4 993.0 569.6 999.9 571.9 C1006.8 574.2 1009.5 578.1 1011.2 582.6 C1012.9 587.1 1011.6 592.4 1009.9 598.9 C1008.2 605.4 1002.7 617.6 1001.2 621.4" stroke-width="6.9"/>
<path d="M1023.6 566.9 C1022.1 569.7 1017.2 578.6 1014.9 583.9 C1012.6 589.2 1010.7 596.4 1009.9 598.9" stroke-width="6.9"/>
<path d="M935 471.5 C940.4 468.6 957.4 459.2 967.4 454 C977.4 448.8 983.6 445.6 994.9 440.2 C1006.1 434.8 1026.6 425.4 1034.9 421.5 C1043.2 417.6 1043.2 417.3 1044.9 416.5" stroke-width="6.16"/>
<path d="M994.9 440.2 C997.4 445.0 1004.0 460.4 1009.9 469 C1015.8 477.6 1027.9 486.1 1030.4 491.5 C1032.9 496.9 1033.3 497.7 1024.9 501.4 C1016.5 505.1 987.4 511.8 979.9 513.9" stroke-width="5.79"/>
<path d="M962.4 536.4 C967.0 535.1 982.0 531.8 989.9 528.9 C997.8 526.0 997.4 521.8 1009.9 518.9 C1022.4 516.0 1054.1 513.8 1064.9 511.4 C1075.7 509.0 1061.6 506.6 1074.9 504.4 C1088.2 502.2 1133.2 499.1 1144.8 498" stroke-width="6.16"/>
<path d="M1144.8 498 L1146.3 479.5 L1172.3 476.5" stroke-width="6.16"/>
<path d="M1112.3 513.4 L1146.1 510.2 L1146.1 498" stroke-width="5.79"/>
<path d="M1041.1 515.2 L1044.9 553.9" stroke-width="5.42"/>
<path d="M1182.3 416.5 C1182.5 425.2 1183.8 451.9 1183.8 469 C1183.8 486.1 1183.0 504.8 1182.3 518.9 C1181.6 533.0 1180.2 548.1 1179.8 553.9" stroke-width="6.9"/>
<path d="M860 461.5 L902.5 446.5" stroke-width="5.42"/>
<path d="M860 492 L917.5 477" stroke-width="5.79"/>
<path d="M867.5 494 C871.7 502.3 886.2 527.2 892.5 543.9 C898.8 560.5 903.1 581.0 905 593.9 C906.9 606.8 903.9 616.8 903.7 621.4" stroke-width="6.16"/>
<path d="M935 471.5 C937.1 469.4 946.9 466.5 947.4 459 C947.9 451.5 938.8 433.6 938 426.5 C937.2 419.4 941.7 418.2 942.4 416.5" stroke-width="5.79"/>
<path d="M902.5 618.9 L949.9 610.1" stroke-width="5.79"/>
<path d="M860 605.1 L877.5 603.9" stroke-width="5.42"/>
<path d="M1044.9 566.4 C1045.7 570.6 1048.0 583.9 1049.9 591.4 C1051.8 598.9 1055.1 608.1 1056.1 611.4" stroke-width="5.79"/>
<path d="M1027.4 578.9 L1067.4 570.2" stroke-width="5.42"/>
<path d="M1087.4 563.9 C1088.7 568.9 1092.2 584.3 1094.9 593.9 C1097.6 603.5 1102.1 616.8 1103.6 621.4" stroke-width="6.16"/>
<path d="M1056.1 610.9 L1007.4 611.9" stroke-width="5.42"/>
<path d="M1182.5 421.5 C1187.1 422.8 1202.1 424.8 1210 429 C1217.9 433.2 1221.7 441.9 1230 446.5 C1238.3 451.1 1249.1 453.6 1259.9 456.5 C1270.7 459.4 1285.7 462.8 1294.9 464 C1304.1 465.2 1311.6 464.0 1314.9 464" stroke-width="6.9"/>
<path d="M1225 444 L1212.5 472.7" stroke-width="6.16"/>
<path d="M1249.9 434 L1247.4 451.5" stroke-width="5.79"/>
<path d="M1289.9 416.5 L1297.4 451.5" stroke-width="6.16"/>
<path d="M1195 492.7 C1198.8 494.6 1197.5 501.8 1217.5 503.9 C1237.5 506.0 1298.7 505.0 1314.9 505.2" stroke-width="6.16"/>
<path d="M1217.5 503.9 C1218.3 510.6 1220.8 533.3 1222.5 543.9 C1224.2 554.5 1226.7 563.7 1227.5 567.7" stroke-width="5.42"/>
<path d="M1232.5 505.2 L1259.9 597.6" stroke-width="5.42"/>
<path d="M1254.9 581.4 L1264.9 567.7" stroke-width="5.42"/>
<path d="M1196.2 495.2 C1198.1 507.5 1204.8 550.8 1207.5 568.9 C1210.2 587.0 1211.7 598.1 1212.5 603.9" stroke-width="4.31"/>
<path d="M1314.9 518.9 C1309.9 519.7 1292.0 521.4 1284.9 523.9 C1277.8 526.4 1272.8 527.2 1272.4 533.9 C1272.0 540.6 1280.7 558.9 1282.4 563.9" stroke-width="5.42"/>
<path d="M1314.9 548.9 C1309.9 549.7 1290.7 551.4 1284.9 553.9 C1279.1 556.4 1279.1 561.4 1279.9 563.9 C1280.7 566.4 1284.1 568.5 1289.9 568.9 C1295.7 569.3 1310.7 566.8 1314.9 566.4" stroke-width="5.42"/>
<path d="M1297.4 505.2 C1297.8 509.1 1297.0 523.7 1299.9 528.9 C1302.8 534.1 1312.4 535.1 1314.9 536.4" stroke-width="5.42"/>
<path d="M450 738.7 C462.5 737.6 503.4 735.1 525 731.9 C546.6 728.7 562.4 723.9 579.9 719.4 C597.4 714.9 613.2 709.5 629.9 704.9 C646.6 700.3 663.2 696.1 679.9 691.9 C696.5 687.6 713.1 683.9 729.8 679.4 C746.4 674.9 763.1 669.9 779.8 665 C796.5 660.1 815.6 653.5 829.8 650 C843.9 646.5 858.9 645.0 864.7 644" stroke-width="11.2"/>
<path d="M452.5 711.9 C460.0 710.0 482.9 704.9 497.5 700.7 C512.1 696.5 526.2 689.4 539.9 686.9 C553.6 684.4 568.2 688.0 579.9 685.7 C591.6 683.4 604.9 675.3 609.9 673.2" stroke-width="5.79"/>
<path d="M609.9 673.2 C613.2 670.1 621.1 661.8 629.9 654.5 C638.6 647.2 652.4 637.0 662.4 629.5 C672.4 622.0 682.8 615.3 689.9 609.5 C697.0 603.7 702.3 597.0 704.8 594.5" stroke-width="5.79"/>
<path d="M609.9 673.2 C614.9 673.4 629.5 673.6 639.9 674.4 C650.3 675.2 661.6 681.1 672.4 678.2 C683.2 675.3 691.1 667.6 704.8 657 C718.5 646.4 746.5 621.6 754.8 614.5" stroke-width="5.79"/>
<path d="M754.8 612 C763.1 615.8 795.2 629.7 804.8 634.5 C814.4 639.3 811.0 638.0 812.3 640.7 C813.6 643.4 812.7 649.0 812.8 650.7" stroke-width="6.16"/>
<path d="M804.8 634.5 C809.0 634.9 823.8 635.1 829.8 637 C835.8 638.9 839.1 644.2 841 645.7" stroke-width="5.79"/>
<path d="M497.5 599.5 C501.2 606.2 512.9 625.1 520 639.5 C527.1 653.9 536.6 678.0 539.9 685.7" stroke-width="5.79"/>
<path d="M486.2 655.7 C491.8 653.0 512.5 642.8 520 639.5 C527.5 636.2 529.3 636.3 531.2 635.7" stroke-width="5.79"/>
<path d="M452.5 620.7 C460.0 617.2 485.2 605.5 497.5 599.5 C509.8 593.5 521.4 587.4 526.2 585" stroke-width="6.16"/>
<path d="M475 609.5 L488.7 584.5" stroke-width="5.79"/>
<path d="M579.9 628.2 C579.9 626.8 577.4 621.4 579.9 619.5 C582.4 617.6 589.9 619.5 594.9 617 C599.9 614.5 604.9 609.1 609.9 604.5 C614.9 599.9 620.7 592.6 624.9 589.5 C629.1 586.4 633.2 586.4 634.9 585.8" stroke-width="5.79"/>
<path d="M617.4 710.7 L621.1 723.2" stroke-width="5.42"/>
<path d="M679.9 694.4 C680.9 699.8 684.2 720.4 686.1 726.9 C688.0 733.4 690.3 732.2 691.1 733.2" stroke-width="5.79"/>
<path d="M734.8 680.7 C735.6 683.8 735.6 696.1 739.8 699.4 C744.0 702.7 755.6 699.5 759.8 700.7 C764.0 701.9 764.0 705.5 764.8 706.4" stroke-width="5.79"/>
<path d="M779.8 667 L786 690.7" stroke-width="5.42"/>
<path d="M581.2 723.2 C581.4 728.8 583.5 748.0 582.4 756.9 C581.3 765.8 576.6 771.5 574.9 776.9 C573.2 782.3 572.8 787.3 572.4 789.4" stroke-width="3.94"/>
<path d="M855 642.5 C864.2 641.4 895.4 637.3 910 636 C924.6 634.7 933.2 635.5 942.4 634.5 C951.5 633.5 955.3 631.7 964.9 630 C974.5 628.3 994.1 625.4 999.9 624.5" stroke-width="11.2"/>
<path d="M977.4 630.7 C982.8 631.3 998.6 633.2 1009.9 634.5 C1021.1 635.8 1032.4 638.4 1044.9 638.2 C1057.4 638.0 1074.1 635.0 1084.9 633.5 C1095.7 632.0 1101.5 631.3 1109.8 629.5 C1118.1 627.7 1122.3 625.2 1134.8 622.5 C1147.3 619.8 1172.3 615.2 1184.8 613.5 C1197.3 611.8 1201.5 612.8 1209.8 612 C1218.1 611.2 1224.8 610.5 1234.8 608.5 C1244.8 606.5 1263.9 601.4 1269.7 600" stroke-width="11.2"/>
<path d="M947.4 639.5 C946.2 644.5 942.5 659.4 940 669.4 C937.5 679.4 935.4 688.1 932.5 699.4 C929.6 710.6 925.6 725.6 922.5 736.9 C919.4 748.1 916.2 757.7 913.7 766.9 C911.2 776.1 908.5 787.7 907.5 791.9" stroke-width="9.36"/>
<path d="M977.4 629.5 C981.1 627.4 994.9 621.6 999.9 617 C1004.9 612.4 1004.9 607.2 1007.4 602 C1009.9 596.8 1013.6 588.5 1014.9 585.8" stroke-width="6.9"/>
<path d="M947.4 638.2 C948.0 634.7 947.5 622.6 951.2 617 C955.0 611.4 965.5 609.5 969.9 604.5 C974.3 599.5 976.1 589.9 977.4 587" stroke-width="6.9"/>
<path d="M905 585.8 L905 635" stroke-width="5.79"/>
<path d="M907.5 617.5 L949.9 609.5" stroke-width="5.79"/>
<path d="M860 605.7 C862.9 605.3 874.2 605.1 877.5 603.2 C880.8 601.3 879.6 596.0 880 594.5" stroke-width="5.42"/>
<path d="M1004.9 612 C1011.1 613.0 1035.7 618.4 1042.4 618.2 C1049.1 618.0 1042.8 612.2 1044.9 610.7 C1047.0 609.2 1053.2 613.6 1054.9 609.5 C1056.6 605.4 1054.9 589.8 1054.9 585.8" stroke-width="5.79"/>
<path d="M1042.4 618.2 C1042.8 621.3 1044.3 628.5 1044.9 637 C1045.5 645.5 1050.3 662.1 1046.1 669.4 C1041.9 676.7 1031.3 680.7 1019.9 680.7 C1008.5 680.7 985.1 673.1 977.4 669.4 C969.7 665.6 974.3 660.1 973.7 658.2" stroke-width="5.79"/>
<path d="M1019.9 680.7 L1018.7 706.9" stroke-width="4.68"/>
<path d="M1089.9 585.8 C1092.4 593.5 1099.8 615.1 1104.8 632 C1109.8 648.9 1115.4 674.0 1119.8 686.9 C1124.2 699.8 1129.2 705.6 1131.1 709.4" stroke-width="6.16"/>
<path d="M1109.8 639.5 C1111.0 638.2 1113.1 634.5 1117.3 632 C1121.5 629.5 1131.9 625.8 1134.8 624.5" stroke-width="5.79"/>
<path d="M1187.3 585.8 C1189.0 588.5 1193.5 597.6 1197.3 602 C1201.0 606.4 1207.7 610.3 1209.8 612" stroke-width="6.9"/>
<path d="M1197.3 602 L1191 613.2" stroke-width="6.16"/>
<path d="M1227.3 617 C1226.7 622.4 1223.1 634.5 1223.5 649.5 C1223.9 664.5 1228.8 697.3 1229.8 706.9" stroke-width="5.79"/>
<path d="M1229.8 659.5 L1269.7 650" stroke-width="5.42"/>
<path d="M887.5 725.7 L927.5 711.9" stroke-width="5.79"/>
<path d="M922.5 739.4 C925.4 741.1 936.7 744.8 940 749.4 C943.3 754.0 942.8 760.2 942.4 766.9 C942.0 773.6 938.3 785.6 937.5 789.4" stroke-width="5.79"/>
<path d="M1259.9 603.5 C1264.9 602.2 1279.5 598.9 1289.9 596 C1300.3 593.1 1317.0 587.7 1322.4 586" stroke-width="11.2"/>
<path d="M1287.4 647 C1288.7 646.2 1290.3 644.0 1294.9 642.5 C1299.5 641.0 1311.6 638.9 1314.9 638.2" stroke-width="5.42"/>
<path d="M1287.4 647 L1294.9 696.9" stroke-width="5.42"/>
<path d="M764 203 C765.2 206.2 767.2 214.8 771 222 C774.8 229.2 780.8 237.3 787 246 C793.2 254.7 802.5 266.3 808 274 C813.5 281.7 818.0 289.0 820 292" stroke-width="14.7"/>
<path d="M808 274 C815.0 284.5 837.7 317.7 850 337 C862.3 356.3 872.8 374.8 882 390 C891.2 405.2 901.2 421.7 905 428" stroke-width="18.2"/>
<path d="M896 414 C898.8 419.2 907.3 434.0 913 445 C918.7 456.0 924.8 468.8 930 480 C935.2 491.2 941.7 506.7 944 512" stroke-width="22.2"/>
<path d="M938 500 C940.3 505.0 948.0 522.0 952 530 C956.0 538.0 958.2 543.0 962 548 C965.8 553.0 969.5 557.0 975 560 C980.5 563.0 988.3 564.7 995 566 C1001.7 567.3 1009.2 568.0 1015 568 C1020.8 568.0 1027.5 566.3 1030 566" stroke-width="14.2"/>
<path d="M768.6 186.7 C774.6 185.4 788.8 183.1 804.8 178.7 C820.8 174.3 854.7 163.4 864.7 160.4" stroke-width="8.48"/>
<path d="M779.8 199.9 C784.0 198.0 796.5 192.2 804.8 188.7 C813.1 185.2 819.8 182.2 829.8 178.7 C839.8 175.2 858.9 169.7 864.7 167.9" stroke-width="8.04"/>
<path d="M794.8 194.9 L864.7 224.9" stroke-width="5.79"/>
<path d="M779.8 80 C781.7 84.6 789.0 98.8 791 107.5 C793.0 116.2 792.0 124.2 791.8 132.5 C791.6 140.8 791.8 149.3 789.8 157.4 C787.8 165.5 781.5 177.2 779.8 181.2" stroke-width="5.79"/>
<path d="M698.6 82.5 C699.6 85.4 703.3 94.8 704.8 100 C706.3 105.2 707.3 111.4 707.8 113.7" stroke-width="5.79"/>
<path d="M834.8 135 L841 162.4" stroke-width="5.05"/>
</g>
<g fill="none" stroke="#d6d6d8" stroke-linecap="round" stroke-linejoin="round">
<path d="M450 89.5 C455.8 89.1 473.3 85.9 485 87 C496.7 88.1 507.5 92.5 520 96 C532.5 99.5 547.4 103.8 559.9 107.7 C572.4 111.6 583.2 115.2 594.9 119.4 C606.6 123.6 615.7 127.4 629.9 132.7 C644.1 137.9 664.9 145.0 679.9 150.9 C694.9 156.8 709.0 163.0 719.8 168.2 C730.6 173.4 738.3 177.6 744.8 181.9 C751.3 186.2 756.3 191.9 758.6 193.9" stroke-width="8.9"/>
<path d="M450 72.7 C453.3 74.4 463.8 80.2 470 82.7 C476.2 85.2 484.6 87.1 487.5 88" stroke-width="7.06"/>
<path d="M492.5 72.7 C502.9 73.0 537.8 73.6 554.9 74.5 C572.0 75.4 581.6 74.8 594.9 78 C608.2 81.2 620.7 88.4 634.9 93.5 C649.1 98.6 668.2 104.7 679.9 108.4 C691.5 112.1 698.3 113.0 704.8 115.9 C711.2 118.8 714.4 121.2 718.6 125.9 C722.8 130.6 725.8 136.7 729.8 143.9 C733.8 151.1 738.1 161.4 742.3 168.9 C746.5 176.4 752.7 185.6 754.8 188.9" stroke-width="8.9"/>
<path d="M719.8 125.2 C729.8 125.5 755.6 126.0 779.8 126.9 C803.9 127.9 850.6 130.2 864.7 130.9" stroke-width="4.23"/>
<path d="M641.1 100.9 L631.9 126.9" stroke-width="3.49"/>
<path d="M681.1 110.9 C682.6 112.7 688.6 117.8 689.9 121.4 C691.1 125.0 690.7 128.4 688.6 132.7 C686.5 136.9 679.3 144.5 677.4 146.9" stroke-width="5.74"/>
<path d="M598.7 120.9 C594.3 129.4 579.1 159.7 572.4 171.9 C565.7 184.1 561.8 185.7 558.7 193.9 C555.6 202.2 554.5 216.8 553.7 221.4" stroke-width="3.49"/>
<path d="M571.2 173.9 C578.9 177.2 601.8 186.8 617.4 193.9 C633.0 201.0 657.0 212.7 664.9 216.4" stroke-width="3.49"/>
<path d="M709.8 168.9 C707.5 173.7 701.1 190.7 696.1 197.6 C691.1 204.5 685.5 207.0 679.9 210.1 C674.3 213.2 665.3 215.3 662.4 216.4" stroke-width="3.49"/>
<path d="M452.5 116.9 C460.4 122.5 487.1 141.2 500 150.2 C512.9 159.2 519.0 162.6 530 170.9 C541.0 179.2 558.3 191.7 566.2 200.1 C574.1 208.5 575.5 217.8 577.4 221.4" stroke-width="4.23"/>
<path d="M500 149.4 C502.5 145.5 510.8 129.9 515 125.9 C519.2 121.9 523.8 125.3 525.5 125.2" stroke-width="3.49"/>
<path d="M530 170.2 L541.7 147.7" stroke-width="3.49"/>
<path d="M452.5 161.9 C454.8 163.4 457.4 166.0 466.2 170.9 C474.9 175.8 492.7 185.0 505 191.4 C517.3 197.8 530.3 204.4 539.9 209.4 C549.5 214.4 558.6 219.4 562.4 221.4" stroke-width="3.86"/>
<path d="M855 165.2 C864.2 163.6 895.4 158.6 910 155.9 C924.6 153.2 934.1 151.4 942.4 148.9 C950.7 146.4 955.7 143.0 959.9 140.9 C964.1 138.8 966.1 137.2 967.4 136.4" stroke-width="9.4"/>
<path d="M967.4 142.7 C978.6 142.1 1012.0 140.2 1034.9 138.9 C1057.8 137.6 1082.3 136.3 1104.8 134.7 C1127.3 133.1 1151.5 130.7 1169.8 129.2 C1188.1 127.7 1198.1 126.8 1214.8 125.7 C1231.5 124.6 1260.5 123.0 1269.7 122.4" stroke-width="4.6"/>
<path d="M952.4 16.5 C953.0 26.7 954.6 60.6 956.2 77.7 C957.8 94.8 960.1 108.7 961.9 118.9 C963.7 129.1 966.1 135.6 966.9 138.9" stroke-width="6.18"/>
<path d="M968.7 123.9 C977.2 120.7 1008.0 109.7 1019.9 104.4 C1031.8 99.1 1033.7 95.3 1039.9 92 C1046.2 88.7 1048.7 86.8 1057.4 84.5 C1066.2 82.2 1086.6 79.1 1092.4 78" stroke-width="4.23"/>
<path d="M1084.9 64 C1085.9 67.3 1088.6 74.8 1091.1 84 C1093.6 93.2 1097.4 110.2 1099.9 118.9 C1102.4 127.6 1103.6 128.1 1106.1 136.4 C1108.6 144.7 1112.1 159.3 1114.8 168.9 C1117.5 178.5 1119.8 185.2 1122.3 193.9 C1124.8 202.7 1128.5 216.8 1129.8 221.4" stroke-width="4.23"/>
<path d="M1184.8 96.5 L1192.3 125.2" stroke-width="3.12"/>
<path d="M1093.6 183.9 L1117.3 178.9" stroke-width="3.49"/>
<path d="M1119.8 191.4 C1128.1 190.4 1154.8 187.7 1169.8 185.6 C1184.8 183.5 1198.1 181.6 1209.8 178.9 C1221.5 176.2 1229.8 172.0 1239.8 169.4 C1249.8 166.8 1264.7 164.4 1269.7 163.4" stroke-width="3.49"/>
<path d="M1147.3 131.4 L1154.8 184.4" stroke-width="3.12"/>
<path d="M1169.8 130.2 L1177.3 182.6" stroke-width="3.12"/>
<path d="M1166.1 186.4 L1171.1 221.4" stroke-width="3.12"/>
<path d="M942.4 158.9 C943.2 162.2 946.2 168.5 947.4 178.9 C948.6 189.3 949.1 214.3 949.4 221.4" stroke-width="3.86"/>
<path d="M969.9 146.4 C971.6 151.8 977.2 166.4 979.9 178.9 C982.6 191.4 985.2 214.3 986.2 221.4" stroke-width="3.49"/>
<path d="M989.9 145.2 C991.6 150.0 994.9 164.3 999.9 173.9 C1004.9 183.5 1015.2 197.3 1019.9 202.6 C1024.6 207.9 1025.7 205.9 1027.9 205.9 C1030.1 205.9 1032.2 213.1 1032.9 202.6 C1033.7 192.1 1032.5 152.7 1032.4 142.7" stroke-width="3.49"/>
<path d="M1072.4 138.9 L1072.4 155.9" stroke-width="3.12"/>
<path d="M891.2 163.9 L893 221.4" stroke-width="3.12"/>
<path d="M892.5 79 C894.2 83.2 899.4 96.2 902.5 103.9 C905.6 111.6 909.8 121.7 911.2 125.2" stroke-width="3.49"/>
<path d="M1183.7 14 C1188.7 20.7 1205.6 41.1 1213.7 54 C1221.8 66.9 1227.7 82.3 1232.5 91.5 C1237.3 100.7 1238.5 104.4 1242.4 108.9 C1246.4 113.4 1250.4 116.3 1256.2 118.4 C1262.0 120.5 1267.6 121.2 1277.4 121.4 C1287.2 121.7 1308.7 120.2 1314.9 119.9" stroke-width="7.06"/>
<path d="M1215 52.7 L1244.9 16.5" stroke-width="3.49"/>
<path d="M1227 73.5 L1252.9 52.7" stroke-width="3.49"/>
<path d="M1258.7 113.4 C1261.0 110.2 1266.4 100.8 1272.4 94 C1278.4 87.2 1287.8 79.0 1294.9 72.7 C1302.0 66.5 1311.6 59.2 1314.9 56.5" stroke-width="4.23"/>
<path d="M1314.9 82.7 C1308.7 85.8 1286.6 96.3 1277.4 101.4 C1268.2 106.5 1262.8 111.4 1259.9 113.4" stroke-width="3.86"/>
<path d="M1197.5 79 L1213.7 126.4" stroke-width="3.12"/>
<path d="M1183.7 96.5 L1191.2 125.2" stroke-width="3.12"/>
<path d="M1213.7 126.4 C1215.6 133.5 1220.2 153.1 1225 168.9 C1229.8 184.7 1239.5 212.7 1242.4 221.4" stroke-width="4.23"/>
<path d="M1247.4 126.4 C1251.2 135.2 1262.8 163.1 1269.9 178.9 C1277.0 194.7 1286.6 214.3 1289.9 221.4" stroke-width="4.23"/>
<path d="M1160 183.9 L1225 170.2" stroke-width="3.49"/>
<path d="M1235 193.9 C1240.8 191.8 1256.6 183.9 1269.9 181.4 C1283.2 178.9 1307.4 179.3 1314.9 178.9" stroke-width="3.49"/>
<path d="M1171.2 128.9 L1176.2 181.4" stroke-width="3.12"/>
<path d="M1165 186.4 L1167.5 221.4" stroke-width="3.12"/>
<path d="M1287.4 176.4 C1288.7 171.8 1290.3 153.1 1294.9 148.9 C1299.5 144.7 1311.6 151.0 1314.9 151.4" stroke-width="3.12"/>
<path d="M576.2 216.5 C579.3 220.7 590.0 233.8 594.9 241.5 C599.8 249.2 603.4 255.0 605.7 262.7 C608.0 270.4 606.3 279.6 608.7 287.7 C611.1 295.8 613.9 303.4 619.9 311.4 C625.9 319.4 633.2 325.4 644.9 335.9 C656.6 346.4 680.5 366.6 689.9 374.4 C699.3 382.2 699.2 381.2 701.1 382.6" stroke-width="3.86"/>
<path d="M559.9 216.5 C560.4 221.1 561.8 235.2 562.9 244 C564.0 252.8 563.8 259.0 566.2 269 C568.6 279.0 571.6 291.6 577.4 303.9 C583.2 316.2 594.5 333.7 601.2 342.7 C607.9 351.7 603.5 348.7 617.4 357.7 C631.3 366.7 672.0 390.2 684.9 396.9 C697.8 403.6 693.2 397.7 694.9 397.9" stroke-width="3.86"/>
<path d="M689.9 399.4 C691.8 396.4 697.0 388.8 701.1 381.4 C705.2 374.0 710.0 365.2 714.8 355.2 C719.6 345.2 724.8 332.0 729.8 321.4 C734.8 310.8 739.8 300.6 744.8 291.5 C749.8 282.4 755.6 272.8 759.8 266.5 C764.0 260.2 766.5 256.8 769.8 254 C773.1 251.2 778.1 250.2 779.8 249.5" stroke-width="3.86"/>
<path d="M607.4 261.5 C614.5 264.8 629.5 271.5 649.9 281.5 C670.3 291.5 707.7 310.9 729.8 321.4 C751.9 331.9 773.5 340.8 782.3 344.7" stroke-width="3.86"/>
<path d="M667.4 250.2 C664.5 255.4 655.5 270.1 649.9 281.5 C644.3 292.9 636.3 312.7 633.6 318.9" stroke-width="3.86"/>
<path d="M701.1 240.2 C705.9 242.5 720.4 249.2 729.8 254 C739.2 258.8 752.7 266.5 757.3 269" stroke-width="3.86"/>
<path d="M716.1 355.2 C725.0 359.1 759.2 372.9 769.8 378.9 C780.4 384.9 776.7 386.8 779.8 391.4 C782.9 396.0 784.8 401.4 788.5 406.4 C792.2 411.4 800.0 418.9 802.3 421.4" stroke-width="3.86"/>
<path d="M769.8 378.9 C769.9 377.2 768.6 374.7 770.3 368.9 C772.0 363.1 774.0 355.1 779.8 343.9 C785.5 332.6 797.7 313.9 804.8 301.4 C811.9 288.9 816.9 280.2 822.3 269 C827.7 257.8 833.5 242.8 837.3 234 C841.0 225.2 843.5 219.4 844.8 216.5" stroke-width="3.86"/>
<path d="M782.3 397.6 C788.5 393.7 806.1 383.3 819.8 373.9 C833.5 364.5 857.2 346.8 864.7 341.4" stroke-width="3.86"/>
<path d="M452.5 229 C455.5 232.9 466.8 246.4 470.5 252.7 C474.2 258.9 475.2 262.6 474.5 266.5 C473.8 270.4 469.9 273.2 466.2 276 C462.5 278.8 454.8 282.2 452.5 283.5" stroke-width="3.86"/>
<path d="M497.5 306.4 C500.8 313.5 510.4 336.0 517.5 348.9 C524.6 361.8 534.4 375.5 539.9 383.9 C545.4 392.3 546.6 393.1 550.4 399.4 C554.1 405.6 560.4 417.7 562.4 421.4" stroke-width="3.49"/>
<path d="M550.4 399.4 C551.1 397.4 552.0 390.4 554.4 387.6 C556.8 384.8 558.6 381.6 564.9 382.6 C571.2 383.7 581.1 388.3 592.4 393.9 C603.6 399.5 625.7 412.6 632.4 416.4" stroke-width="3.49"/>
<path d="M550.4 399.4 C547.0 401.4 535.5 407.7 530 411.4 C524.5 415.1 519.6 419.7 517.5 421.4" stroke-width="3.49"/>
<path d="M857.5 224.5 C868.3 228.6 910.3 243.1 922.5 249 C934.7 254.9 927.2 256.0 930.5 260.2 C933.8 264.4 937.1 268.8 942.4 274 C947.7 279.2 958.1 286.3 962.4 291.5 C966.6 296.7 967.2 301.6 967.9 305.2 C968.6 308.8 966.9 312.0 966.7 313.4" stroke-width="3.86"/>
<path d="M927.5 251.5 C930.8 251.3 929.5 250.6 947.4 250.2 C965.3 249.8 1005.3 250.0 1034.9 249 C1064.5 248.0 1101.9 244.2 1124.8 244 C1147.7 243.8 1164.4 247.1 1172.3 247.7" stroke-width="3.86"/>
<path d="M966.7 313.4 C969.7 311.0 976.9 302.9 984.9 299 C992.9 295.1 1002.4 292.5 1014.9 290.2 C1027.4 287.9 1041.6 285.9 1059.9 285 C1078.2 284.1 1108.2 285.1 1124.8 285 C1141.4 284.9 1154.0 284.6 1159.8 284.5" stroke-width="4.23"/>
<path d="M860 336.4 C865.4 330.6 880.6 313.4 892.5 301.4 C904.4 289.4 924.8 270.6 931.2 264.5" stroke-width="3.12"/>
<path d="M966.7 313.4 C961.4 317.6 943.4 329.6 935 338.9 C926.6 348.1 923.3 360.9 916.2 368.9 C909.1 376.9 901.9 380.9 892.5 386.9 C883.1 392.9 865.4 402.1 860 405.1" stroke-width="3.86"/>
<path d="M916.2 368.9 C917.7 373.1 921.7 385.1 925 393.9 C928.3 402.6 934.3 416.8 936.2 421.4" stroke-width="3.86"/>
<path d="M944.9 418.9 C950.7 415.6 968.2 405.6 979.9 398.9 C991.6 392.2 1004.4 385.8 1014.9 378.9 C1025.4 372.0 1038.4 361.2 1043.1 357.7" stroke-width="3.49"/>
<path d="M966.7 313.4 C970.6 314.4 982.7 315.1 989.9 319.4 C997.1 323.6 1001.0 332.6 1009.9 338.9 C1018.8 345.2 1035.0 350.1 1043.1 357.2 C1051.2 364.3 1054.5 374.4 1058.6 381.4 C1062.6 388.3 1065.0 392.2 1067.4 398.9 C1069.8 405.6 1072.0 417.6 1072.9 421.4" stroke-width="4.23"/>
<path d="M1043.1 357.7 C1050.1 355.0 1069.6 347.4 1084.9 341.4 C1100.2 335.3 1125.6 326.0 1134.8 321.4 C1144.0 316.8 1139.4 315.1 1140.3 313.9" stroke-width="3.86"/>
<path d="M979.9 365.2 L1004.9 342.7" stroke-width="3.49"/>
<path d="M1124.8 216.5 C1125.0 221.1 1125.5 232.7 1126.1 244 C1126.7 255.3 1128.2 277.8 1128.6 284.5" stroke-width="3.86"/>
<path d="M1137.8 286.5 C1137.3 292.3 1134.5 307.7 1134.8 321.4 C1135.1 335.1 1137.6 353.1 1139.8 368.9 C1142.0 384.7 1146.5 408.5 1147.8 416.4" stroke-width="3.49"/>
<path d="M1121.1 378.9 L1184.8 375.2" stroke-width="3.49"/>
<path d="M1044.9 289 L1054.9 348.9" stroke-width="2.75"/>
<path d="M1064.9 287.7 L1072.4 338.9" stroke-width="2.75"/>
<path d="M1092.4 286.5 L1101.1 331.4" stroke-width="2.75"/>
<path d="M1037.4 250.2 L1041.1 284" stroke-width="2.75"/>
<path d="M947.4 216.5 L948.7 250.2" stroke-width="3.12"/>
<path d="M1024.9 216.5 L1032.4 249" stroke-width="3.12"/>
<path d="M1009.9 420.1 C1020.3 418.9 1049.5 413.6 1072.4 412.6 C1095.3 411.6 1128.6 413.3 1147.3 413.9 C1166.0 414.5 1178.5 416.0 1184.8 416.4" stroke-width="3.49"/>
<path d="M1157.5 249 C1166.2 249.6 1197.1 250.8 1210 252.7 C1222.9 254.6 1227.9 259.1 1235 260.2 C1242.1 261.2 1241.6 260.4 1252.4 259 C1263.2 257.6 1289.5 253.1 1299.9 251.5 C1310.3 249.9 1312.4 249.8 1314.9 249.5" stroke-width="4.23"/>
<path d="M1157.5 285.2 C1164.2 283.9 1186.9 280.2 1197.5 277.7 C1208.1 275.2 1215.0 273.1 1221.2 270.2 C1227.5 267.3 1232.7 261.9 1235 260.2" stroke-width="4.23"/>
<path d="M1221.2 270.2 C1222.0 271.7 1225.8 275.0 1226.2 279 C1226.6 283.0 1226.4 286.5 1223.7 294 C1221.0 301.5 1214.4 311.4 1210 323.9 C1205.6 336.4 1201.2 356.4 1197.5 368.9 C1193.8 381.4 1190.1 390.1 1187.5 398.9 C1184.9 407.6 1182.9 417.6 1182 421.4" stroke-width="4.6"/>
<path d="M1223.7 292.7 C1232.7 290.8 1262.2 284.9 1277.4 281.5 C1292.6 278.1 1308.7 273.6 1314.9 272" stroke-width="3.49"/>
<path d="M1240 216.5 L1253.7 257.7" stroke-width="3.86"/>
<path d="M1167.5 216.5 L1172.5 249" stroke-width="3.49"/>
<path d="M1289.9 216.5 C1291.6 222.3 1296.4 241.3 1299.9 251.5 C1303.5 261.7 1309.3 273.3 1311.2 277.7" stroke-width="3.86"/>
<path d="M1279.9 282.7 C1279.7 290.4 1279.1 315.4 1278.7 328.9 C1278.3 342.4 1276.4 348.5 1277.4 363.9 C1278.4 379.3 1283.7 411.8 1284.9 421.4" stroke-width="3.49"/>
<path d="M1200 367.7 L1277.4 362.7" stroke-width="3.49"/>
<path d="M1243.7 328.9 L1278.7 328.2" stroke-width="3.49"/>
<path d="M1242.4 366.4 L1247.4 421.4" stroke-width="3.12"/>
<path d="M1160 378.9 L1195 372.7" stroke-width="3.12"/>
<path d="M1298.7 336.4 L1314.9 335.2" stroke-width="3.49"/>
<path d="M1160 412.6 L1182.5 411.4" stroke-width="3.12"/>
<path d="M598.7 548.4 C601.8 546.8 611.0 542.1 617.4 538.9 C623.8 535.6 627.0 532.8 637.4 528.9 C647.8 525.0 669.3 517.9 679.9 515.2 C690.5 512.5 692.8 514.4 701.1 512.7 C709.4 511.0 720.8 508.3 729.8 505.2 C738.8 502.1 745.6 497.1 754.8 494 C764.0 490.9 774.8 489.2 784.8 486.5 C794.8 483.8 808.3 481.0 814.8 477.7 C821.2 474.4 821.4 470.0 823.5 466.5 C825.6 463.0 826.7 458.2 827.3 456.5" stroke-width="3.86"/>
<path d="M582.4 548.9 C570.8 546.2 534.1 537.8 512.5 532.7 C490.9 527.6 462.5 520.8 452.5 518.4" stroke-width="3.86"/>
<path d="M584.9 555.2 C573.7 560.8 539.6 578.1 517.5 588.9 C495.4 599.7 463.3 614.9 452.5 620.1" stroke-width="3.86"/>
<path d="M598.7 553.9 C607.2 557.2 632.2 567.2 649.9 573.9 C667.6 580.6 685.2 586.8 704.8 593.9 C724.4 601.0 754.8 611.8 767.3 616.4 C779.8 621.0 777.7 620.6 779.8 621.4" stroke-width="3.86"/>
<path d="M502.5 416.5 C504.8 421.9 507.5 434.9 516.2 449 C524.9 463.1 543.6 485.6 554.9 501.4 C566.1 517.2 578.9 536.8 583.7 543.9" stroke-width="3.86"/>
<path d="M516.2 449 C516.9 456.5 521.1 480.1 520.5 494 C519.9 507.9 516.3 520.2 512.5 532.7 C508.7 545.2 503.3 557.0 497.5 568.9 C491.7 580.8 482.3 595.1 477.5 603.9 C472.7 612.6 470.2 618.5 468.7 621.4" stroke-width="3.86"/>
<path d="M452.5 446.5 C454.5 452.3 463.2 469.4 464.5 481.5 C465.8 493.6 462.5 510.4 460.5 518.9 C458.5 527.4 453.8 530.4 452.5 532.7" stroke-width="3.86"/>
<path d="M564.9 416.5 C569.9 425.2 585.7 454.4 594.9 469 C604.1 483.6 612.8 493.9 619.9 503.9 C627.0 513.9 634.5 524.7 637.4 528.9" stroke-width="3.49"/>
<path d="M637.4 528.9 C641.6 533.9 654.1 549.7 662.4 558.9 C670.7 568.1 680.3 578.1 687.4 583.9 C694.5 589.7 701.9 592.2 704.8 593.9" stroke-width="3.49"/>
<path d="M629.9 416.5 C634.1 419.0 648.6 426.5 654.9 431.5 C661.1 436.5 662.4 438.2 667.4 446.5 C672.4 454.8 679.3 470.5 684.9 481.5 C690.5 492.5 697.8 504.4 701.1 512.7 C704.4 521.0 701.7 524.5 704.8 531.4 C707.9 538.3 715.2 547.6 719.8 553.9 C724.4 560.1 730.2 566.4 732.3 568.9" stroke-width="3.49"/>
<path d="M749.8 462.7 C753.1 462.5 763.1 463.8 769.8 461.5 C776.5 459.2 783.1 453.0 789.8 449 C796.5 445.0 805.4 440.4 809.8 437.7 C814.2 435.0 815.0 433.5 816 432.7" stroke-width="3.86"/>
<path d="M789.8 460.2 L804.8 479" stroke-width="3.49"/>
<path d="M495 598.9 L506.2 621.4" stroke-width="3.49"/>
<path d="M649.9 574.4 C646.6 576.0 636.6 579.0 629.9 583.9 C623.2 588.8 616.6 597.6 609.9 603.9 C603.2 610.1 593.2 618.5 589.9 621.4" stroke-width="3.49"/>
<path d="M704.8 593.9 C703.1 596.4 699.0 604.3 694.9 608.9 C690.8 613.5 682.4 619.3 679.9 621.4" stroke-width="3.49"/>
<path d="M1022.4 566.4 C1032.8 565.6 1062.0 563.6 1084.9 561.4 C1107.8 559.2 1144.8 554.2 1159.8 553.2 C1174.8 552.2 1170.2 552.4 1174.8 555.2 C1179.4 558.0 1184.0 563.8 1187.3 570.2 C1190.6 576.7 1191.7 587.5 1194.8 593.9 C1197.9 600.3 1201.4 605.9 1206 608.9 C1210.6 611.9 1211.7 612.8 1222.3 611.9 C1232.9 611.0 1261.8 604.8 1269.7 603.4" stroke-width="8.4"/>
<path d="M959.9 556.4 C961.1 560.1 965.3 571.8 967.4 578.9 C969.5 586.0 970.5 591.8 972.4 598.9 C974.3 606.0 977.7 617.6 978.7 621.4" stroke-width="4.6"/>
<path d="M969.9 568.9 C974.9 569.4 993.0 569.6 999.9 571.9 C1006.8 574.2 1009.5 578.1 1011.2 582.6 C1012.9 587.1 1011.6 592.4 1009.9 598.9 C1008.2 605.4 1002.7 617.6 1001.2 621.4" stroke-width="4.6"/>
<path d="M1023.6 566.9 C1022.1 569.7 1017.2 578.6 1014.9 583.9 C1012.6 589.2 1010.7 596.4 1009.9 598.9" stroke-width="4.6"/>
<path d="M935 471.5 C940.4 468.6 957.4 459.2 967.4 454 C977.4 448.8 983.6 445.6 994.9 440.2 C1006.1 434.8 1026.6 425.4 1034.9 421.5 C1043.2 417.6 1043.2 417.3 1044.9 416.5" stroke-width="3.86"/>
<path d="M994.9 440.2 C997.4 445.0 1004.0 460.4 1009.9 469 C1015.8 477.6 1027.9 486.1 1030.4 491.5 C1032.9 496.9 1033.3 497.7 1024.9 501.4 C1016.5 505.1 987.4 511.8 979.9 513.9" stroke-width="3.49"/>
<path d="M962.4 536.4 C967.0 535.1 982.0 531.8 989.9 528.9 C997.8 526.0 997.4 521.8 1009.9 518.9 C1022.4 516.0 1054.1 513.8 1064.9 511.4 C1075.7 509.0 1061.6 506.6 1074.9 504.4 C1088.2 502.2 1133.2 499.1 1144.8 498" stroke-width="3.86"/>
<path d="M1144.8 498 L1146.3 479.5 L1172.3 476.5" stroke-width="3.86"/>
<path d="M1112.3 513.4 L1146.1 510.2 L1146.1 498" stroke-width="3.49"/>
<path d="M1041.1 515.2 L1044.9 553.9" stroke-width="3.12"/>
<path d="M1182.3 416.5 C1182.5 425.2 1183.8 451.9 1183.8 469 C1183.8 486.1 1183.0 504.8 1182.3 518.9 C1181.6 533.0 1180.2 548.1 1179.8 553.9" stroke-width="4.6"/>
<path d="M860 461.5 L902.5 446.5" stroke-width="3.12"/>
<path d="M860 492 L917.5 477" stroke-width="3.49"/>
<path d="M867.5 494 C871.7 502.3 886.2 527.2 892.5 543.9 C898.8 560.5 903.1 581.0 905 593.9 C906.9 606.8 903.9 616.8 903.7 621.4" stroke-width="3.86"/>
<path d="M935 471.5 C937.1 469.4 946.9 466.5 947.4 459 C947.9 451.5 938.8 433.6 938 426.5 C937.2 419.4 941.7 418.2 942.4 416.5" stroke-width="3.49"/>
<path d="M902.5 618.9 L949.9 610.1" stroke-width="3.49"/>
<path d="M860 605.1 L877.5 603.9" stroke-width="3.12"/>
<path d="M1044.9 566.4 C1045.7 570.6 1048.0 583.9 1049.9 591.4 C1051.8 598.9 1055.1 608.1 1056.1 611.4" stroke-width="3.49"/>
<path d="M1027.4 578.9 L1067.4 570.2" stroke-width="3.12"/>
<path d="M1087.4 563.9 C1088.7 568.9 1092.2 584.3 1094.9 593.9 C1097.6 603.5 1102.1 616.8 1103.6 621.4" stroke-width="3.86"/>
<path d="M1056.1 610.9 L1007.4 611.9" stroke-width="3.12"/>
<path d="M1182.5 421.5 C1187.1 422.8 1202.1 424.8 1210 429 C1217.9 433.2 1221.7 441.9 1230 446.5 C1238.3 451.1 1249.1 453.6 1259.9 456.5 C1270.7 459.4 1285.7 462.8 1294.9 464 C1304.1 465.2 1311.6 464.0 1314.9 464" stroke-width="4.6"/>
<path d="M1225 444 L1212.5 472.7" stroke-width="3.86"/>
<path d="M1249.9 434 L1247.4 451.5" stroke-width="3.49"/>
<path d="M1289.9 416.5 L1297.4 451.5" stroke-width="3.86"/>
<path d="M1195 492.7 C1198.8 494.6 1197.5 501.8 1217.5 503.9 C1237.5 506.0 1298.7 505.0 1314.9 505.2" stroke-width="3.86"/>
<path d="M1217.5 503.9 C1218.3 510.6 1220.8 533.3 1222.5 543.9 C1224.2 554.5 1226.7 563.7 1227.5 567.7" stroke-width="3.12"/>
<path d="M1232.5 505.2 L1259.9 597.6" stroke-width="3.12"/>
<path d="M1254.9 581.4 L1264.9 567.7" stroke-width="3.12"/>
<path d="M1196.2 495.2 C1198.1 507.5 1204.8 550.8 1207.5 568.9 C1210.2 587.0 1211.7 598.1 1212.5 603.9" stroke-width="2.01"/>
<path d="M1314.9 518.9 C1309.9 519.7 1292.0 521.4 1284.9 523.9 C1277.8 526.4 1272.8 527.2 1272.4 533.9 C1272.0 540.6 1280.7 558.9 1282.4 563.9" stroke-width="3.12"/>
<path d="M1314.9 548.9 C1309.9 549.7 1290.7 551.4 1284.9 553.9 C1279.1 556.4 1279.1 561.4 1279.9 563.9 C1280.7 566.4 1284.1 568.5 1289.9 568.9 C1295.7 569.3 1310.7 566.8 1314.9 566.4" stroke-width="3.12"/>
<path d="M1297.4 505.2 C1297.8 509.1 1297.0 523.7 1299.9 528.9 C1302.8 534.1 1312.4 535.1 1314.9 536.4" stroke-width="3.12"/>
<path d="M450 738.7 C462.5 737.6 503.4 735.1 525 731.9 C546.6 728.7 562.4 723.9 579.9 719.4 C597.4 714.9 613.2 709.5 629.9 704.9 C646.6 700.3 663.2 696.1 679.9 691.9 C696.5 687.6 713.1 683.9 729.8 679.4 C746.4 674.9 763.1 669.9 779.8 665 C796.5 660.1 815.6 653.5 829.8 650 C843.9 646.5 858.9 645.0 864.7 644" stroke-width="8.9"/>
<path d="M452.5 711.9 C460.0 710.0 482.9 704.9 497.5 700.7 C512.1 696.5 526.2 689.4 539.9 686.9 C553.6 684.4 568.2 688.0 579.9 685.7 C591.6 683.4 604.9 675.3 609.9 673.2" stroke-width="3.49"/>
<path d="M609.9 673.2 C613.2 670.1 621.1 661.8 629.9 654.5 C638.6 647.2 652.4 637.0 662.4 629.5 C672.4 622.0 682.8 615.3 689.9 609.5 C697.0 603.7 702.3 597.0 704.8 594.5" stroke-width="3.49"/>
<path d="M609.9 673.2 C614.9 673.4 629.5 673.6 639.9 674.4 C650.3 675.2 661.6 681.1 672.4 678.2 C683.2 675.3 691.1 667.6 704.8 657 C718.5 646.4 746.5 621.6 754.8 614.5" stroke-width="3.49"/>
<path d="M754.8 612 C763.1 615.8 795.2 629.7 804.8 634.5 C814.4 639.3 811.0 638.0 812.3 640.7 C813.6 643.4 812.7 649.0 812.8 650.7" stroke-width="3.86"/>
<path d="M804.8 634.5 C809.0 634.9 823.8 635.1 829.8 637 C835.8 638.9 839.1 644.2 841 645.7" stroke-width="3.49"/>
<path d="M497.5 599.5 C501.2 606.2 512.9 625.1 520 639.5 C527.1 653.9 536.6 678.0 539.9 685.7" stroke-width="3.49"/>
<path d="M486.2 655.7 C491.8 653.0 512.5 642.8 520 639.5 C527.5 636.2 529.3 636.3 531.2 635.7" stroke-width="3.49"/>
<path d="M452.5 620.7 C460.0 617.2 485.2 605.5 497.5 599.5 C509.8 593.5 521.4 587.4 526.2 585" stroke-width="3.86"/>
<path d="M475 609.5 L488.7 584.5" stroke-width="3.49"/>
<path d="M579.9 628.2 C579.9 626.8 577.4 621.4 579.9 619.5 C582.4 617.6 589.9 619.5 594.9 617 C599.9 614.5 604.9 609.1 609.9 604.5 C614.9 599.9 620.7 592.6 624.9 589.5 C629.1 586.4 633.2 586.4 634.9 585.8" stroke-width="3.49"/>
<path d="M617.4 710.7 L621.1 723.2" stroke-width="3.12"/>
<path d="M679.9 694.4 C680.9 699.8 684.2 720.4 686.1 726.9 C688.0 733.4 690.3 732.2 691.1 733.2" stroke-width="3.49"/>
<path d="M734.8 680.7 C735.6 683.8 735.6 696.1 739.8 699.4 C744.0 702.7 755.6 699.5 759.8 700.7 C764.0 701.9 764.0 705.5 764.8 706.4" stroke-width="3.49"/>
<path d="M779.8 667 L786 690.7" stroke-width="3.12"/>
<path d="M581.2 723.2 C581.4 728.8 583.5 748.0 582.4 756.9 C581.3 765.8 576.6 771.5 574.9 776.9 C573.2 782.3 572.8 787.3 572.4 789.4" stroke-width="1.64"/>
<path d="M855 642.5 C864.2 641.4 895.4 637.3 910 636 C924.6 634.7 933.2 635.5 942.4 634.5 C951.5 633.5 955.3 631.7 964.9 630 C974.5 628.3 994.1 625.4 999.9 624.5" stroke-width="8.9"/>
<path d="M977.4 630.7 C982.8 631.3 998.6 633.2 1009.9 634.5 C1021.1 635.8 1032.4 638.4 1044.9 638.2 C1057.4 638.0 1074.1 635.0 1084.9 633.5 C1095.7 632.0 1101.5 631.3 1109.8 629.5 C1118.1 627.7 1122.3 625.2 1134.8 622.5 C1147.3 619.8 1172.3 615.2 1184.8 613.5 C1197.3 611.8 1201.5 612.8 1209.8 612 C1218.1 611.2 1224.8 610.5 1234.8 608.5 C1244.8 606.5 1263.9 601.4 1269.7 600" stroke-width="8.9"/>
<path d="M947.4 639.5 C946.2 644.5 942.5 659.4 940 669.4 C937.5 679.4 935.4 688.1 932.5 699.4 C929.6 710.6 925.6 725.6 922.5 736.9 C919.4 748.1 916.2 757.7 913.7 766.9 C911.2 776.1 908.5 787.7 907.5 791.9" stroke-width="7.06"/>
<path d="M977.4 629.5 C981.1 627.4 994.9 621.6 999.9 617 C1004.9 612.4 1004.9 607.2 1007.4 602 C1009.9 596.8 1013.6 588.5 1014.9 585.8" stroke-width="4.6"/>
<path d="M947.4 638.2 C948.0 634.7 947.5 622.6 951.2 617 C955.0 611.4 965.5 609.5 969.9 604.5 C974.3 599.5 976.1 589.9 977.4 587" stroke-width="4.6"/>
<path d="M905 585.8 L905 635" stroke-width="3.49"/>
<path d="M907.5 617.5 L949.9 609.5" stroke-width="3.49"/>
<path d="M860 605.7 C862.9 605.3 874.2 605.1 877.5 603.2 C880.8 601.3 879.6 596.0 880 594.5" stroke-width="3.12"/>
<path d="M1004.9 612 C1011.1 613.0 1035.7 618.4 1042.4 618.2 C1049.1 618.0 1042.8 612.2 1044.9 610.7 C1047.0 609.2 1053.2 613.6 1054.9 609.5 C1056.6 605.4 1054.9 589.8 1054.9 585.8" stroke-width="3.49"/>
<path d="M1042.4 618.2 C1042.8 621.3 1044.3 628.5 1044.9 637 C1045.5 645.5 1050.3 662.1 1046.1 669.4 C1041.9 676.7 1031.3 680.7 1019.9 680.7 C1008.5 680.7 985.1 673.1 977.4 669.4 C969.7 665.6 974.3 660.1 973.7 658.2" stroke-width="3.49"/>
<path d="M1019.9 680.7 L1018.7 706.9" stroke-width="2.38"/>
<path d="M1089.9 585.8 C1092.4 593.5 1099.8 615.1 1104.8 632 C1109.8 648.9 1115.4 674.0 1119.8 686.9 C1124.2 699.8 1129.2 705.6 1131.1 709.4" stroke-width="3.86"/>
<path d="M1109.8 639.5 C1111.0 638.2 1113.1 634.5 1117.3 632 C1121.5 629.5 1131.9 625.8 1134.8 624.5" stroke-width="3.49"/>
<path d="M1187.3 585.8 C1189.0 588.5 1193.5 597.6 1197.3 602 C1201.0 606.4 1207.7 610.3 1209.8 612" stroke-width="4.6"/>
<path d="M1197.3 602 L1191 613.2" stroke-width="3.86"/>
<path d="M1227.3 617 C1226.7 622.4 1223.1 634.5 1223.5 649.5 C1223.9 664.5 1228.8 697.3 1229.8 706.9" stroke-width="3.49"/>
<path d="M1229.8 659.5 L1269.7 650" stroke-width="3.12"/>
<path d="M887.5 725.7 L927.5 711.9" stroke-width="3.49"/>
<path d="M922.5 739.4 C925.4 741.1 936.7 744.8 940 749.4 C943.3 754.0 942.8 760.2 942.4 766.9 C942.0 773.6 938.3 785.6 937.5 789.4" stroke-width="3.49"/>
<path d="M1259.9 603.5 C1264.9 602.2 1279.5 598.9 1289.9 596 C1300.3 593.1 1317.0 587.7 1322.4 586" stroke-width="8.9"/>
<path d="M1287.4 647 C1288.7 646.2 1290.3 644.0 1294.9 642.5 C1299.5 641.0 1311.6 638.9 1314.9 638.2" stroke-width="3.12"/>
<path d="M1287.4 647 L1294.9 696.9" stroke-width="3.12"/>
<path d="M764 203 C765.2 206.2 767.2 214.8 771 222 C774.8 229.2 780.8 237.3 787 246 C793.2 254.7 802.5 266.3 808 274 C813.5 281.7 818.0 289.0 820 292" stroke-width="12.4"/>
<path d="M808 274 C815.0 284.5 837.7 317.7 850 337 C862.3 356.3 872.8 374.8 882 390 C891.2 405.2 901.2 421.7 905 428" stroke-width="15.9"/>
<path d="M896 414 C898.8 419.2 907.3 434.0 913 445 C918.7 456.0 924.8 468.8 930 480 C935.2 491.2 941.7 506.7 944 512" stroke-width="19.9"/>
<path d="M938 500 C940.3 505.0 948.0 522.0 952 530 C956.0 538.0 958.2 543.0 962 548 C965.8 553.0 969.5 557.0 975 560 C980.5 563.0 988.3 564.7 995 566 C1001.7 567.3 1009.2 568.0 1015 568 C1020.8 568.0 1027.5 566.3 1030 566" stroke-width="11.9"/>
<path d="M768.6 186.7 C774.6 185.4 788.8 183.1 804.8 178.7 C820.8 174.3 854.7 163.4 864.7 160.4" stroke-width="6.18"/>
<path d="M779.8 199.9 C784.0 198.0 796.5 192.2 804.8 188.7 C813.1 185.2 819.8 182.2 829.8 178.7 C839.8 175.2 858.9 169.7 864.7 167.9" stroke-width="5.74"/>
<path d="M794.8 194.9 L864.7 224.9" stroke-width="3.49"/>
<path d="M779.8 80 C781.7 84.6 789.0 98.8 791 107.5 C793.0 116.2 792.0 124.2 791.8 132.5 C791.6 140.8 791.8 149.3 789.8 157.4 C787.8 165.5 781.5 177.2 779.8 181.2" stroke-width="3.49"/>
<path d="M698.6 82.5 C699.6 85.4 703.3 94.8 704.8 100 C706.3 105.2 707.3 111.4 707.8 113.7" stroke-width="3.49"/>
<path d="M834.8 135 L841 162.4" stroke-width="2.75"/>
</g>
<g fill="none" stroke="#ffffff" stroke-linecap="round" stroke-linejoin="round">
<path d="M581.2 723.2 C581.4 728.8 583.5 748.0 582.4 756.9 C581.3 765.8 576.6 771.5 574.9 776.9 C573.2 782.3 572.8 787.3 572.4 789.4" stroke-width="0.74"/>
<path d="M1196.2 495.2 C1198.1 507.5 1204.8 550.8 1207.5 568.9 C1210.2 587.0 1211.7 598.1 1212.5 603.9" stroke-width="1.11"/>
<path d="M1019.9 680.7 L1018.7 706.9" stroke-width="1.48"/>
<path d="M1044.9 289 L1054.9 348.9" stroke-width="1.85"/>
<path d="M1064.9 287.7 L1072.4 338.9" stroke-width="1.85"/>
<path d="M1092.4 286.5 L1101.1 331.4" stroke-width="1.85"/>
<path d="M1037.4 250.2 L1041.1 284" stroke-width="1.85"/>
<path d="M834.8 135 L841 162.4" stroke-width="1.85"/>
<path d="M1184.8 96.5 L1192.3 125.2" stroke-width="2.22"/>
<path d="M1147.3 131.4 L1154.8 184.4" stroke-width="2.22"/>
<path d="M1169.8 130.2 L1177.3 182.6" stroke-width="2.22"/>
<path d="M1166.1 186.4 L1171.1 221.4" stroke-width="2.22"/>
<path d="M1072.4 138.9 L1072.4 155.9" stroke-width="2.22"/>
<path d="M891.2 163.9 L893 221.4" stroke-width="2.22"/>
<path d="M1197.5 79 L1213.7 126.4" stroke-width="2.22"/>
<path d="M1183.7 96.5 L1191.2 125.2" stroke-width="2.22"/>
<path d="M1171.2 128.9 L1176.2 181.4" stroke-width="2.22"/>
<path d="M1165 186.4 L1167.5 221.4" stroke-width="2.22"/>
<path d="M1287.4 176.4 C1288.7 171.8 1290.3 153.1 1294.9 148.9 C1299.5 144.7 1311.6 151.0 1314.9 151.4" stroke-width="2.22"/>
<path d="M860 336.4 C865.4 330.6 880.6 313.4 892.5 301.4 C904.4 289.4 924.8 270.6 931.2 264.5" stroke-width="2.22"/>
<path d="M947.4 216.5 L948.7 250.2" stroke-width="2.22"/>
<path d="M1024.9 216.5 L1032.4 249" stroke-width="2.22"/>
<path d="M1242.4 366.4 L1247.4 421.4" stroke-width="2.22"/>
<path d="M1160 378.9 L1195 372.7" stroke-width="2.22"/>
<path d="M1160 412.6 L1182.5 411.4" stroke-width="2.22"/>
<path d="M1041.1 515.2 L1044.9 553.9" stroke-width="2.22"/>
<path d="M860 461.5 L902.5 446.5" stroke-width="2.22"/>
<path d="M860 605.1 L877.5 603.9" stroke-width="2.22"/>
<path d="M1027.4 578.9 L1067.4 570.2" stroke-width="2.22"/>
<path d="M1056.1 610.9 L1007.4 611.9" stroke-width="2.22"/>
<path d="M1217.5 503.9 C1218.3 510.6 1220.8 533.3 1222.5 543.9 C1224.2 554.5 1226.7 563.7 1227.5 567.7" stroke-width="2.22"/>
<path d="M1232.5 505.2 L1259.9 597.6" stroke-width="2.22"/>
<path d="M1254.9 581.4 L1264.9 567.7" stroke-width="2.22"/>
<path d="M1314.9 518.9 C1309.9 519.7 1292.0 521.4 1284.9 523.9 C1277.8 526.4 1272.8 527.2 1272.4 533.9 C1272.0 540.6 1280.7 558.9 1282.4 563.9" stroke-width="2.22"/>
<path d="M1314.9 548.9 C1309.9 549.7 1290.7 551.4 1284.9 553.9 C1279.1 556.4 1279.1 561.4 1279.9 563.9 C1280.7 566.4 1284.1 568.5 1289.9 568.9 C1295.7 569.3 1310.7 566.8 1314.9 566.4" stroke-width="2.22"/>
<path d="M1297.4 505.2 C1297.8 509.1 1297.0 523.7 1299.9 528.9 C1302.8 534.1 1312.4 535.1 1314.9 536.4" stroke-width="2.22"/>
<path d="M617.4 710.7 L621.1 723.2" stroke-width="2.22"/>
<path d="M779.8 667 L786 690.7" stroke-width="2.22"/>
<path d="M860 605.7 C862.9 605.3 874.2 605.1 877.5 603.2 C880.8 601.3 879.6 596.0 880 594.5" stroke-width="2.22"/>
<path d="M1229.8 659.5 L1269.7 650" stroke-width="2.22"/>
<path d="M1287.4 647 C1288.7 646.2 1290.3 644.0 1294.9 642.5 C1299.5 641.0 1311.6 638.9 1314.9 638.2" stroke-width="2.22"/>
<path d="M1287.4 647 L1294.9 696.9" stroke-width="2.22"/>
<path d="M641.1 100.9 L631.9 126.9" stroke-width="2.59"/>
<path d="M598.7 120.9 C594.3 129.4 579.1 159.7 572.4 171.9 C565.7 184.1 561.8 185.7 558.7 193.9 C555.6 202.2 554.5 216.8 553.7 221.4" stroke-width="2.59"/>
<path d="M571.2 173.9 C578.9 177.2 601.8 186.8 617.4 193.9 C633.0 201.0 657.0 212.7 664.9 216.4" stroke-width="2.59"/>
<path d="M709.8 168.9 C707.5 173.7 701.1 190.7 696.1 197.6 C691.1 204.5 685.5 207.0 679.9 210.1 C674.3 213.2 665.3 215.3 662.4 216.4" stroke-width="2.59"/>
<path d="M500 149.4 C502.5 145.5 510.8 129.9 515 125.9 C519.2 121.9 523.8 125.3 525.5 125.2" stroke-width="2.59"/>
<path d="M530 170.2 L541.7 147.7" stroke-width="2.59"/>
<path d="M1093.6 183.9 L1117.3 178.9" stroke-width="2.59"/>
<path d="M1119.8 191.4 C1128.1 190.4 1154.8 187.7 1169.8 185.6 C1184.8 183.5 1198.1 181.6 1209.8 178.9 C1221.5 176.2 1229.8 172.0 1239.8 169.4 C1249.8 166.8 1264.7 164.4 1269.7 163.4" stroke-width="2.59"/>
<path d="M969.9 146.4 C971.6 151.8 977.2 166.4 979.9 178.9 C982.6 191.4 985.2 214.3 986.2 221.4" stroke-width="2.59"/>
<path d="M989.9 145.2 C991.6 150.0 994.9 164.3 999.9 173.9 C1004.9 183.5 1015.2 197.3 1019.9 202.6 C1024.6 207.9 1025.7 205.9 1027.9 205.9 C1030.1 205.9 1032.2 213.1 1032.9 202.6 C1033.7 192.1 1032.5 152.7 1032.4 142.7" stroke-width="2.59"/>
<path d="M892.5 79 C894.2 83.2 899.4 96.2 902.5 103.9 C905.6 111.6 909.8 121.7 911.2 125.2" stroke-width="2.59"/>
<path d="M1215 52.7 L1244.9 16.5" stroke-width="2.59"/>
<path d="M1227 73.5 L1252.9 52.7" stroke-width="2.59"/>
<path d="M1160 183.9 L1225 170.2" stroke-width="2.59"/>
<path d="M1235 193.9 C1240.8 191.8 1256.6 183.9 1269.9 181.4 C1283.2 178.9 1307.4 179.3 1314.9 178.9" stroke-width="2.59"/>
<path d="M497.5 306.4 C500.8 313.5 510.4 336.0 517.5 348.9 C524.6 361.8 534.4 375.5 539.9 383.9 C545.4 392.3 546.6 393.1 550.4 399.4 C554.1 405.6 560.4 417.7 562.4 421.4" stroke-width="2.59"/>
<path d="M550.4 399.4 C551.1 397.4 552.0 390.4 554.4 387.6 C556.8 384.8 558.6 381.6 564.9 382.6 C571.2 383.7 581.1 388.3 592.4 393.9 C603.6 399.5 625.7 412.6 632.4 416.4" stroke-width="2.59"/>
<path d="M550.4 399.4 C547.0 401.4 535.5 407.7 530 411.4 C524.5 415.1 519.6 419.7 517.5 421.4" stroke-width="2.59"/>
<path d="M944.9 418.9 C950.7 415.6 968.2 405.6 979.9 398.9 C991.6 392.2 1004.4 385.8 1014.9 378.9 C1025.4 372.0 1038.4 361.2 1043.1 357.7" stroke-width="2.59"/>
<path d="M979.9 365.2 L1004.9 342.7" stroke-width="2.59"/>
<path d="M1137.8 286.5 C1137.3 292.3 1134.5 307.7 1134.8 321.4 C1135.1 335.1 1137.6 353.1 1139.8 368.9 C1142.0 384.7 1146.5 408.5 1147.8 416.4" stroke-width="2.59"/>
<path d="M1121.1 378.9 L1184.8 375.2" stroke-width="2.59"/>
<path d="M1009.9 420.1 C1020.3 418.9 1049.5 413.6 1072.4 412.6 C1095.3 411.6 1128.6 413.3 1147.3 413.9 C1166.0 414.5 1178.5 416.0 1184.8 416.4" stroke-width="2.59"/>
<path d="M1223.7 292.7 C1232.7 290.8 1262.2 284.9 1277.4 281.5 C1292.6 278.1 1308.7 273.6 1314.9 272" stroke-width="2.59"/>
<path d="M1167.5 216.5 L1172.5 249" stroke-width="2.59"/>
<path d="M1279.9 282.7 C1279.7 290.4 1279.1 315.4 1278.7 328.9 C1278.3 342.4 1276.4 348.5 1277.4 363.9 C1278.4 379.3 1283.7 411.8 1284.9 421.4" stroke-width="2.59"/>
<path d="M1200 367.7 L1277.4 362.7" stroke-width="2.59"/>
<path d="M1243.7 328.9 L1278.7 328.2" stroke-width="2.59"/>
<path d="M1298.7 336.4 L1314.9 335.2" stroke-width="2.59"/>
<path d="M564.9 416.5 C569.9 425.2 585.7 454.4 594.9 469 C604.1 483.6 612.8 493.9 619.9 503.9 C627.0 513.9 634.5 524.7 637.4 528.9" stroke-width="2.59"/>
<path d="M637.4 528.9 C641.6 533.9 654.1 549.7 662.4 558.9 C670.7 568.1 680.3 578.1 687.4 583.9 C694.5 589.7 701.9 592.2 704.8 593.9" stroke-width="2.59"/>
<path d="M629.9 416.5 C634.1 419.0 648.6 426.5 654.9 431.5 C661.1 436.5 662.4 438.2 667.4 446.5 C672.4 454.8 679.3 470.5 684.9 481.5 C690.5 492.5 697.8 504.4 701.1 512.7 C704.4 521.0 701.7 524.5 704.8 531.4 C707.9 538.3 715.2 547.6 719.8 553.9 C724.4 560.1 730.2 566.4 732.3 568.9" stroke-width="2.59"/>
<path d="M789.8 460.2 L804.8 479" stroke-width="2.59"/>
<path d="M495 598.9 L506.2 621.4" stroke-width="2.59"/>
<path d="M649.9 574.4 C646.6 576.0 636.6 579.0 629.9 583.9 C623.2 588.8 616.6 597.6 609.9 603.9 C603.2 610.1 593.2 618.5 589.9 621.4" stroke-width="2.59"/>
<path d="M704.8 593.9 C703.1 596.4 699.0 604.3 694.9 608.9 C690.8 613.5 682.4 619.3 679.9 621.4" stroke-width="2.59"/>
<path d="M994.9 440.2 C997.4 445.0 1004.0 460.4 1009.9 469 C1015.8 477.6 1027.9 486.1 1030.4 491.5 C1032.9 496.9 1033.3 497.7 1024.9 501.4 C1016.5 505.1 987.4 511.8 979.9 513.9" stroke-width="2.59"/>
<path d="M1112.3 513.4 L1146.1 510.2 L1146.1 498" stroke-width="2.59"/>
<path d="M860 492 L917.5 477" stroke-width="2.59"/>
<path d="M935 471.5 C937.1 469.4 946.9 466.5 947.4 459 C947.9 451.5 938.8 433.6 938 426.5 C937.2 419.4 941.7 418.2 942.4 416.5" stroke-width="2.59"/>
<path d="M902.5 618.9 L949.9 610.1" stroke-width="2.59"/>
<path d="M1044.9 566.4 C1045.7 570.6 1048.0 583.9 1049.9 591.4 C1051.8 598.9 1055.1 608.1 1056.1 611.4" stroke-width="2.59"/>
<path d="M1249.9 434 L1247.4 451.5" stroke-width="2.59"/>
<path d="M452.5 711.9 C460.0 710.0 482.9 704.9 497.5 700.7 C512.1 696.5 526.2 689.4 539.9 686.9 C553.6 684.4 568.2 688.0 579.9 685.7 C591.6 683.4 604.9 675.3 609.9 673.2" stroke-width="2.59"/>
<path d="M609.9 673.2 C613.2 670.1 621.1 661.8 629.9 654.5 C638.6 647.2 652.4 637.0 662.4 629.5 C672.4 622.0 682.8 615.3 689.9 609.5 C697.0 603.7 702.3 597.0 704.8 594.5" stroke-width="2.59"/>
<path d="M609.9 673.2 C614.9 673.4 629.5 673.6 639.9 674.4 C650.3 675.2 661.6 681.1 672.4 678.2 C683.2 675.3 691.1 667.6 704.8 657 C718.5 646.4 746.5 621.6 754.8 614.5" stroke-width="2.59"/>
<path d="M804.8 634.5 C809.0 634.9 823.8 635.1 829.8 637 C835.8 638.9 839.1 644.2 841 645.7" stroke-width="2.59"/>
<path d="M497.5 599.5 C501.2 606.2 512.9 625.1 520 639.5 C527.1 653.9 536.6 678.0 539.9 685.7" stroke-width="2.59"/>
<path d="M486.2 655.7 C491.8 653.0 512.5 642.8 520 639.5 C527.5 636.2 529.3 636.3 531.2 635.7" stroke-width="2.59"/>
<path d="M475 609.5 L488.7 584.5" stroke-width="2.59"/>
<path d="M579.9 628.2 C579.9 626.8 577.4 621.4 579.9 619.5 C582.4 617.6 589.9 619.5 594.9 617 C599.9 614.5 604.9 609.1 609.9 604.5 C614.9 599.9 620.7 592.6 624.9 589.5 C629.1 586.4 633.2 586.4 634.9 585.8" stroke-width="2.59"/>
<path d="M679.9 694.4 C680.9 699.8 684.2 720.4 686.1 726.9 C688.0 733.4 690.3 732.2 691.1 733.2" stroke-width="2.59"/>
<path d="M734.8 680.7 C735.6 683.8 735.6 696.1 739.8 699.4 C744.0 702.7 755.6 699.5 759.8 700.7 C764.0 701.9 764.0 705.5 764.8 706.4" stroke-width="2.59"/>
<path d="M905 585.8 L905 635" stroke-width="2.59"/>
<path d="M907.5 617.5 L949.9 609.5" stroke-width="2.59"/>
<path d="M1004.9 612 C1011.1 613.0 1035.7 618.4 1042.4 618.2 C1049.1 618.0 1042.8 612.2 1044.9 610.7 C1047.0 609.2 1053.2 613.6 1054.9 609.5 C1056.6 605.4 1054.9 589.8 1054.9 585.8" stroke-width="2.59"/>
<path d="M1042.4 618.2 C1042.8 621.3 1044.3 628.5 1044.9 637 C1045.5 645.5 1050.3 662.1 1046.1 669.4 C1041.9 676.7 1031.3 680.7 1019.9 680.7 C1008.5 680.7 985.1 673.1 977.4 669.4 C969.7 665.6 974.3 660.1 973.7 658.2" stroke-width="2.59"/>
<path d="M1109.8 639.5 C1111.0 638.2 1113.1 634.5 1117.3 632 C1121.5 629.5 1131.9 625.8 1134.8 624.5" stroke-width="2.59"/>
<path d="M1227.3 617 C1226.7 622.4 1223.1 634.5 1223.5 649.5 C1223.9 664.5 1228.8 697.3 1229.8 706.9" stroke-width="2.59"/>
<path d="M887.5 725.7 L927.5 711.9" stroke-width="2.59"/>
<path d="M922.5 739.4 C925.4 741.1 936.7 744.8 940 749.4 C943.3 754.0 942.8 760.2 942.4 766.9 C942.0 773.6 938.3 785.6 937.5 789.4" stroke-width="2.59"/>
<path d="M794.8 194.9 L864.7 224.9" stroke-width="2.59"/>
<path d="M779.8 80 C781.7 84.6 789.0 98.8 791 107.5 C793.0 116.2 792.0 124.2 791.8 132.5 C791.6 140.8 791.8 149.3 789.8 157.4 C787.8 165.5 781.5 177.2 779.8 181.2" stroke-width="2.59"/>
<path d="M698.6 82.5 C699.6 85.4 703.3 94.8 704.8 100 C706.3 105.2 707.3 111.4 707.8 113.7" stroke-width="2.59"/>
<path d="M452.5 161.9 C454.8 163.4 457.4 166.0 466.2 170.9 C474.9 175.8 492.7 185.0 505 191.4 C517.3 197.8 530.3 204.4 539.9 209.4 C549.5 214.4 558.6 219.4 562.4 221.4" stroke-width="2.96"/>
<path d="M942.4 158.9 C943.2 162.2 946.2 168.5 947.4 178.9 C948.6 189.3 949.1 214.3 949.4 221.4" stroke-width="2.96"/>
<path d="M1314.9 82.7 C1308.7 85.8 1286.6 96.3 1277.4 101.4 C1268.2 106.5 1262.8 111.4 1259.9 113.4" stroke-width="2.96"/>
<path d="M576.2 216.5 C579.3 220.7 590.0 233.8 594.9 241.5 C599.8 249.2 603.4 255.0 605.7 262.7 C608.0 270.4 606.3 279.6 608.7 287.7 C611.1 295.8 613.9 303.4 619.9 311.4 C625.9 319.4 633.2 325.4 644.9 335.9 C656.6 346.4 680.5 366.6 689.9 374.4 C699.3 382.2 699.2 381.2 701.1 382.6" stroke-width="2.96"/>
<path d="M559.9 216.5 C560.4 221.1 561.8 235.2 562.9 244 C564.0 252.8 563.8 259.0 566.2 269 C568.6 279.0 571.6 291.6 577.4 303.9 C583.2 316.2 594.5 333.7 601.2 342.7 C607.9 351.7 603.5 348.7 617.4 357.7 C631.3 366.7 672.0 390.2 684.9 396.9 C697.8 403.6 693.2 397.7 694.9 397.9" stroke-width="2.96"/>
<path d="M689.9 399.4 C691.8 396.4 697.0 388.8 701.1 381.4 C705.2 374.0 710.0 365.2 714.8 355.2 C719.6 345.2 724.8 332.0 729.8 321.4 C734.8 310.8 739.8 300.6 744.8 291.5 C749.8 282.4 755.6 272.8 759.8 266.5 C764.0 260.2 766.5 256.8 769.8 254 C773.1 251.2 778.1 250.2 779.8 249.5" stroke-width="2.96"/>
<path d="M607.4 261.5 C614.5 264.8 629.5 271.5 649.9 281.5 C670.3 291.5 707.7 310.9 729.8 321.4 C751.9 331.9 773.5 340.8 782.3 344.7" stroke-width="2.96"/>
<path d="M667.4 250.2 C664.5 255.4 655.5 270.1 649.9 281.5 C644.3 292.9 636.3 312.7 633.6 318.9" stroke-width="2.96"/>
<path d="M701.1 240.2 C705.9 242.5 720.4 249.2 729.8 254 C739.2 258.8 752.7 266.5 757.3 269" stroke-width="2.96"/>
<path d="M716.1 355.2 C725.0 359.1 759.2 372.9 769.8 378.9 C780.4 384.9 776.7 386.8 779.8 391.4 C782.9 396.0 784.8 401.4 788.5 406.4 C792.2 411.4 800.0 418.9 802.3 421.4" stroke-width="2.96"/>
<path d="M769.8 378.9 C769.9 377.2 768.6 374.7 770.3 368.9 C772.0 363.1 774.0 355.1 779.8 343.9 C785.5 332.6 797.7 313.9 804.8 301.4 C811.9 288.9 816.9 280.2 822.3 269 C827.7 257.8 833.5 242.8 837.3 234 C841.0 225.2 843.5 219.4 844.8 216.5" stroke-width="2.96"/>
<path d="M782.3 397.6 C788.5 393.7 806.1 383.3 819.8 373.9 C833.5 364.5 857.2 346.8 864.7 341.4" stroke-width="2.96"/>
<path d="M452.5 229 C455.5 232.9 466.8 246.4 470.5 252.7 C474.2 258.9 475.2 262.6 474.5 266.5 C473.8 270.4 469.9 273.2 466.2 276 C462.5 278.8 454.8 282.2 452.5 283.5" stroke-width="2.96"/>
<path d="M857.5 224.5 C868.3 228.6 910.3 243.1 922.5 249 C934.7 254.9 927.2 256.0 930.5 260.2 C933.8 264.4 937.1 268.8 942.4 274 C947.7 279.2 958.1 286.3 962.4 291.5 C966.6 296.7 967.2 301.6 967.9 305.2 C968.6 308.8 966.9 312.0 966.7 313.4" stroke-width="2.96"/>
<path d="M927.5 251.5 C930.8 251.3 929.5 250.6 947.4 250.2 C965.3 249.8 1005.3 250.0 1034.9 249 C1064.5 248.0 1101.9 244.2 1124.8 244 C1147.7 243.8 1164.4 247.1 1172.3 247.7" stroke-width="2.96"/>
<path d="M966.7 313.4 C961.4 317.6 943.4 329.6 935 338.9 C926.6 348.1 923.3 360.9 916.2 368.9 C909.1 376.9 901.9 380.9 892.5 386.9 C883.1 392.9 865.4 402.1 860 405.1" stroke-width="2.96"/>
<path d="M916.2 368.9 C917.7 373.1 921.7 385.1 925 393.9 C928.3 402.6 934.3 416.8 936.2 421.4" stroke-width="2.96"/>
<path d="M1043.1 357.7 C1050.1 355.0 1069.6 347.4 1084.9 341.4 C1100.2 335.3 1125.6 326.0 1134.8 321.4 C1144.0 316.8 1139.4 315.1 1140.3 313.9" stroke-width="2.96"/>
<path d="M1124.8 216.5 C1125.0 221.1 1125.5 232.7 1126.1 244 C1126.7 255.3 1128.2 277.8 1128.6 284.5" stroke-width="2.96"/>
<path d="M1240 216.5 L1253.7 257.7" stroke-width="2.96"/>
<path d="M1289.9 216.5 C1291.6 222.3 1296.4 241.3 1299.9 251.5 C1303.5 261.7 1309.3 273.3 1311.2 277.7" stroke-width="2.96"/>
<path d="M598.7 548.4 C601.8 546.8 611.0 542.1 617.4 538.9 C623.8 535.6 627.0 532.8 637.4 528.9 C647.8 525.0 669.3 517.9 679.9 515.2 C690.5 512.5 692.8 514.4 701.1 512.7 C709.4 511.0 720.8 508.3 729.8 505.2 C738.8 502.1 745.6 497.1 754.8 494 C764.0 490.9 774.8 489.2 784.8 486.5 C794.8 483.8 808.3 481.0 814.8 477.7 C821.2 474.4 821.4 470.0 823.5 466.5 C825.6 463.0 826.7 458.2 827.3 456.5" stroke-width="2.96"/>
<path d="M582.4 548.9 C570.8 546.2 534.1 537.8 512.5 532.7 C490.9 527.6 462.5 520.8 452.5 518.4" stroke-width="2.96"/>
<path d="M584.9 555.2 C573.7 560.8 539.6 578.1 517.5 588.9 C495.4 599.7 463.3 614.9 452.5 620.1" stroke-width="2.96"/>
<path d="M598.7 553.9 C607.2 557.2 632.2 567.2 649.9 573.9 C667.6 580.6 685.2 586.8 704.8 593.9 C724.4 601.0 754.8 611.8 767.3 616.4 C779.8 621.0 777.7 620.6 779.8 621.4" stroke-width="2.96"/>
<path d="M502.5 416.5 C504.8 421.9 507.5 434.9 516.2 449 C524.9 463.1 543.6 485.6 554.9 501.4 C566.1 517.2 578.9 536.8 583.7 543.9" stroke-width="2.96"/>
<path d="M516.2 449 C516.9 456.5 521.1 480.1 520.5 494 C519.9 507.9 516.3 520.2 512.5 532.7 C508.7 545.2 503.3 557.0 497.5 568.9 C491.7 580.8 482.3 595.1 477.5 603.9 C472.7 612.6 470.2 618.5 468.7 621.4" stroke-width="2.96"/>
<path d="M452.5 446.5 C454.5 452.3 463.2 469.4 464.5 481.5 C465.8 493.6 462.5 510.4 460.5 518.9 C458.5 527.4 453.8 530.4 452.5 532.7" stroke-width="2.96"/>
<path d="M749.8 462.7 C753.1 462.5 763.1 463.8 769.8 461.5 C776.5 459.2 783.1 453.0 789.8 449 C796.5 445.0 805.4 440.4 809.8 437.7 C814.2 435.0 815.0 433.5 816 432.7" stroke-width="2.96"/>
<path d="M935 471.5 C940.4 468.6 957.4 459.2 967.4 454 C977.4 448.8 983.6 445.6 994.9 440.2 C1006.1 434.8 1026.6 425.4 1034.9 421.5 C1043.2 417.6 1043.2 417.3 1044.9 416.5" stroke-width="2.96"/>
<path d="M962.4 536.4 C967.0 535.1 982.0 531.8 989.9 528.9 C997.8 526.0 997.4 521.8 1009.9 518.9 C1022.4 516.0 1054.1 513.8 1064.9 511.4 C1075.7 509.0 1061.6 506.6 1074.9 504.4 C1088.2 502.2 1133.2 499.1 1144.8 498" stroke-width="2.96"/>
<path d="M1144.8 498 L1146.3 479.5 L1172.3 476.5" stroke-width="2.96"/>
<path d="M867.5 494 C871.7 502.3 886.2 527.2 892.5 543.9 C898.8 560.5 903.1 581.0 905 593.9 C906.9 606.8 903.9 616.8 903.7 621.4" stroke-width="2.96"/>
<path d="M1087.4 563.9 C1088.7 568.9 1092.2 584.3 1094.9 593.9 C1097.6 603.5 1102.1 616.8 1103.6 621.4" stroke-width="2.96"/>
<path d="M1225 444 L1212.5 472.7" stroke-width="2.96"/>
<path d="M1289.9 416.5 L1297.4 451.5" stroke-width="2.96"/>
<path d="M1195 492.7 C1198.8 494.6 1197.5 501.8 1217.5 503.9 C1237.5 506.0 1298.7 505.0 1314.9 505.2" stroke-width="2.96"/>
<path d="M754.8 612 C763.1 615.8 795.2 629.7 804.8 634.5 C814.4 639.3 811.0 638.0 812.3 640.7 C813.6 643.4 812.7 649.0 812.8 650.7" stroke-width="2.96"/>
<path d="M452.5 620.7 C460.0 617.2 485.2 605.5 497.5 599.5 C509.8 593.5 521.4 587.4 526.2 585" stroke-width="2.96"/>
<path d="M1089.9 585.8 C1092.4 593.5 1099.8 615.1 1104.8 632 C1109.8 648.9 1115.4 674.0 1119.8 686.9 C1124.2 699.8 1129.2 705.6 1131.1 709.4" stroke-width="2.96"/>
<path d="M1197.3 602 L1191 613.2" stroke-width="2.96"/>
<path d="M719.8 125.2 C729.8 125.5 755.6 126.0 779.8 126.9 C803.9 127.9 850.6 130.2 864.7 130.9" stroke-width="3.33"/>
<path d="M452.5 116.9 C460.4 122.5 487.1 141.2 500 150.2 C512.9 159.2 519.0 162.6 530 170.9 C541.0 179.2 558.3 191.7 566.2 200.1 C574.1 208.5 575.5 217.8 577.4 221.4" stroke-width="3.33"/>
<path d="M968.7 123.9 C977.2 120.7 1008.0 109.7 1019.9 104.4 C1031.8 99.1 1033.7 95.3 1039.9 92 C1046.2 88.7 1048.7 86.8 1057.4 84.5 C1066.2 82.2 1086.6 79.1 1092.4 78" stroke-width="3.33"/>
<path d="M1084.9 64 C1085.9 67.3 1088.6 74.8 1091.1 84 C1093.6 93.2 1097.4 110.2 1099.9 118.9 C1102.4 127.6 1103.6 128.1 1106.1 136.4 C1108.6 144.7 1112.1 159.3 1114.8 168.9 C1117.5 178.5 1119.8 185.2 1122.3 193.9 C1124.8 202.7 1128.5 216.8 1129.8 221.4" stroke-width="3.33"/>
<path d="M1258.7 113.4 C1261.0 110.2 1266.4 100.8 1272.4 94 C1278.4 87.2 1287.8 79.0 1294.9 72.7 C1302.0 66.5 1311.6 59.2 1314.9 56.5" stroke-width="3.33"/>
<path d="M1213.7 126.4 C1215.6 133.5 1220.2 153.1 1225 168.9 C1229.8 184.7 1239.5 212.7 1242.4 221.4" stroke-width="3.33"/>
<path d="M1247.4 126.4 C1251.2 135.2 1262.8 163.1 1269.9 178.9 C1277.0 194.7 1286.6 214.3 1289.9 221.4" stroke-width="3.33"/>
<path d="M966.7 313.4 C969.7 311.0 976.9 302.9 984.9 299 C992.9 295.1 1002.4 292.5 1014.9 290.2 C1027.4 287.9 1041.6 285.9 1059.9 285 C1078.2 284.1 1108.2 285.1 1124.8 285 C1141.4 284.9 1154.0 284.6 1159.8 284.5" stroke-width="3.33"/>
<path d="M966.7 313.4 C970.6 314.4 982.7 315.1 989.9 319.4 C997.1 323.6 1001.0 332.6 1009.9 338.9 C1018.8 345.2 1035.0 350.1 1043.1 357.2 C1051.2 364.3 1054.5 374.4 1058.6 381.4 C1062.6 388.3 1065.0 392.2 1067.4 398.9 C1069.8 405.6 1072.0 417.6 1072.9 421.4" stroke-width="3.33"/>
<path d="M1157.5 249 C1166.2 249.6 1197.1 250.8 1210 252.7 C1222.9 254.6 1227.9 259.1 1235 260.2 C1242.1 261.2 1241.6 260.4 1252.4 259 C1263.2 257.6 1289.5 253.1 1299.9 251.5 C1310.3 249.9 1312.4 249.8 1314.9 249.5" stroke-width="3.33"/>
<path d="M1157.5 285.2 C1164.2 283.9 1186.9 280.2 1197.5 277.7 C1208.1 275.2 1215.0 273.1 1221.2 270.2 C1227.5 267.3 1232.7 261.9 1235 260.2" stroke-width="3.33"/>
<path d="M967.4 142.7 C978.6 142.1 1012.0 140.2 1034.9 138.9 C1057.8 137.6 1082.3 136.3 1104.8 134.7 C1127.3 133.1 1151.5 130.7 1169.8 129.2 C1188.1 127.7 1198.1 126.8 1214.8 125.7 C1231.5 124.6 1260.5 123.0 1269.7 122.4" stroke-width="3.7"/>
<path d="M1221.2 270.2 C1222.0 271.7 1225.8 275.0 1226.2 279 C1226.6 283.0 1226.4 286.5 1223.7 294 C1221.0 301.5 1214.4 311.4 1210 323.9 C1205.6 336.4 1201.2 356.4 1197.5 368.9 C1193.8 381.4 1190.1 390.1 1187.5 398.9 C1184.9 407.6 1182.9 417.6 1182 421.4" stroke-width="3.7"/>
<path d="M959.9 556.4 C961.1 560.1 965.3 571.8 967.4 578.9 C969.5 586.0 970.5 591.8 972.4 598.9 C974.3 606.0 977.7 617.6 978.7 621.4" stroke-width="3.7"/>
<path d="M969.9 568.9 C974.9 569.4 993.0 569.6 999.9 571.9 C1006.8 574.2 1009.5 578.1 1011.2 582.6 C1012.9 587.1 1011.6 592.4 1009.9 598.9 C1008.2 605.4 1002.7 617.6 1001.2 621.4" stroke-width="3.7"/>
<path d="M1023.6 566.9 C1022.1 569.7 1017.2 578.6 1014.9 583.9 C1012.6 589.2 1010.7 596.4 1009.9 598.9" stroke-width="3.7"/>
<path d="M1182.3 416.5 C1182.5 425.2 1183.8 451.9 1183.8 469 C1183.8 486.1 1183.0 504.8 1182.3 518.9 C1181.6 533.0 1180.2 548.1 1179.8 553.9" stroke-width="3.7"/>
<path d="M1182.5 421.5 C1187.1 422.8 1202.1 424.8 1210 429 C1217.9 433.2 1221.7 441.9 1230 446.5 C1238.3 451.1 1249.1 453.6 1259.9 456.5 C1270.7 459.4 1285.7 462.8 1294.9 464 C1304.1 465.2 1311.6 464.0 1314.9 464" stroke-width="3.7"/>
<path d="M977.4 629.5 C981.1 627.4 994.9 621.6 999.9 617 C1004.9 612.4 1004.9 607.2 1007.4 602 C1009.9 596.8 1013.6 588.5 1014.9 585.8" stroke-width="3.7"/>
<path d="M947.4 638.2 C948.0 634.7 947.5 622.6 951.2 617 C955.0 611.4 965.5 609.5 969.9 604.5 C974.3 599.5 976.1 589.9 977.4 587" stroke-width="3.7"/>
<path d="M1187.3 585.8 C1189.0 588.5 1193.5 597.6 1197.3 602 C1201.0 606.4 1207.7 610.3 1209.8 612" stroke-width="3.7"/>
<path d="M681.1 110.9 C682.6 112.7 688.6 117.8 689.9 121.4 C691.1 125.0 690.7 128.4 688.6 132.7 C686.5 136.9 679.3 144.5 677.4 146.9" stroke-width="4.84"/>
<path d="M779.8 199.9 C784.0 198.0 796.5 192.2 804.8 188.7 C813.1 185.2 819.8 182.2 829.8 178.7 C839.8 175.2 858.9 169.7 864.7 167.9" stroke-width="4.84"/>
<path d="M952.4 16.5 C953.0 26.7 954.6 60.6 956.2 77.7 C957.8 94.8 960.1 108.7 961.9 118.9 C963.7 129.1 966.1 135.6 966.9 138.9" stroke-width="5.28"/>
<path d="M768.6 186.7 C774.6 185.4 788.8 183.1 804.8 178.7 C820.8 174.3 854.7 163.4 864.7 160.4" stroke-width="5.28"/>
<path d="M450 72.7 C453.3 74.4 463.8 80.2 470 82.7 C476.2 85.2 484.6 87.1 487.5 88" stroke-width="6.16"/>
<path d="M1183.7 14 C1188.7 20.7 1205.6 41.1 1213.7 54 C1221.8 66.9 1227.7 82.3 1232.5 91.5 C1237.3 100.7 1238.5 104.4 1242.4 108.9 C1246.4 113.4 1250.4 116.3 1256.2 118.4 C1262.0 120.5 1267.6 121.2 1277.4 121.4 C1287.2 121.7 1308.7 120.2 1314.9 119.9" stroke-width="6.16"/>
<path d="M947.4 639.5 C946.2 644.5 942.5 659.4 940 669.4 C937.5 679.4 935.4 688.1 932.5 699.4 C929.6 710.6 925.6 725.6 922.5 736.9 C919.4 748.1 916.2 757.7 913.7 766.9 C911.2 776.1 908.5 787.7 907.5 791.9" stroke-width="6.16"/>
<path d="M1022.4 566.4 C1032.8 565.6 1062.0 563.6 1084.9 561.4 C1107.8 559.2 1144.8 554.2 1159.8 553.2 C1174.8 552.2 1170.2 552.4 1174.8 555.2 C1179.4 558.0 1184.0 563.8 1187.3 570.2 C1190.6 576.7 1191.7 587.5 1194.8 593.9 C1197.9 600.3 1201.4 605.9 1206 608.9 C1210.6 611.9 1211.7 612.8 1222.3 611.9 C1232.9 611.0 1261.8 604.8 1269.7 603.4" stroke-width="7.5"/>
<path d="M492.5 72.7 C502.9 73.0 537.8 73.6 554.9 74.5 C572.0 75.4 581.6 74.8 594.9 78 C608.2 81.2 620.7 88.4 634.9 93.5 C649.1 98.6 668.2 104.7 679.9 108.4 C691.5 112.1 698.3 113.0 704.8 115.9 C711.2 118.8 714.4 121.2 718.6 125.9 C722.8 130.6 725.8 136.7 729.8 143.9 C733.8 151.1 738.1 161.4 742.3 168.9 C746.5 176.4 752.7 185.6 754.8 188.9" stroke-width="8"/>
<path d="M450 738.7 C462.5 737.6 503.4 735.1 525 731.9 C546.6 728.7 562.4 723.9 579.9 719.4 C597.4 714.9 613.2 709.5 629.9 704.9 C646.6 700.3 663.2 696.1 679.9 691.9 C696.5 687.6 713.1 683.9 729.8 679.4 C746.4 674.9 763.1 669.9 779.8 665 C796.5 660.1 815.6 653.5 829.8 650 C843.9 646.5 858.9 645.0 864.7 644" stroke-width="8"/>
<path d="M855 642.5 C864.2 641.4 895.4 637.3 910 636 C924.6 634.7 933.2 635.5 942.4 634.5 C951.5 633.5 955.3 631.7 964.9 630 C974.5 628.3 994.1 625.4 999.9 624.5" stroke-width="8"/>
<path d="M977.4 630.7 C982.8 631.3 998.6 633.2 1009.9 634.5 C1021.1 635.8 1032.4 638.4 1044.9 638.2 C1057.4 638.0 1074.1 635.0 1084.9 633.5 C1095.7 632.0 1101.5 631.3 1109.8 629.5 C1118.1 627.7 1122.3 625.2 1134.8 622.5 C1147.3 619.8 1172.3 615.2 1184.8 613.5 C1197.3 611.8 1201.5 612.8 1209.8 612 C1218.1 611.2 1224.8 610.5 1234.8 608.5 C1244.8 606.5 1263.9 601.4 1269.7 600" stroke-width="8"/>
<path d="M1259.9 603.5 C1264.9 602.2 1279.5 598.9 1289.9 596 C1300.3 593.1 1317.0 587.7 1322.4 586" stroke-width="8"/>
<path d="M450 89.5 C455.8 89.1 473.3 85.9 485 87 C496.7 88.1 507.5 92.5 520 96 C532.5 99.5 547.4 103.8 559.9 107.7 C572.4 111.6 583.2 115.2 594.9 119.4 C606.6 123.6 615.7 127.4 629.9 132.7 C644.1 137.9 664.9 145.0 679.9 150.9 C694.9 156.8 709.0 163.0 719.8 168.2 C730.6 173.4 738.3 177.6 744.8 181.9 C751.3 186.2 756.3 191.9 758.6 193.9" stroke-width="8"/>
<path d="M855 165.2 C864.2 163.6 895.4 158.6 910 155.9 C924.6 153.2 934.1 151.4 942.4 148.9 C950.7 146.4 955.7 143.0 959.9 140.9 C964.1 138.8 966.1 137.2 967.4 136.4" stroke-width="8.5"/>
<path d="M938 500 C940.3 505.0 948.0 522.0 952 530 C956.0 538.0 958.2 543.0 962 548 C965.8 553.0 969.5 557.0 975 560 C980.5 563.0 988.3 564.7 995 566 C1001.7 567.3 1009.2 568.0 1015 568 C1020.8 568.0 1027.5 566.3 1030 566" stroke-width="11"/>
<path d="M764 203 C765.2 206.2 767.2 214.8 771 222 C774.8 229.2 780.8 237.3 787 246 C793.2 254.7 802.5 266.3 808 274 C813.5 281.7 818.0 289.0 820 292" stroke-width="11.5"/>
<path d="M808 274 C815.0 284.5 837.7 317.7 850 337 C862.3 356.3 872.8 374.8 882 390 C891.2 405.2 901.2 421.7 905 428" stroke-width="15"/>
<path d="M896 414 C898.8 419.2 907.3 434.0 913 445 C918.7 456.0 924.8 468.8 930 480 C935.2 491.2 941.7 506.7 944 512" stroke-width="19"/>
</g>
<circle cx="764.8" cy="200.5" r="11.8" fill="#e9e9ea" stroke="#fff" stroke-width="4.5"/>
<circle cx="680.5" cy="230" r="19" fill="#ededee" stroke="#fff" stroke-width="3.5"/>
<ellipse cx="590.7" cy="549.7" rx="7" ry="5.2" fill="#ededee" stroke="#fff" stroke-width="3"/>
<path d="M1072.9 419 C1072.5 424.0 1072.1 438.2 1070.4 449 C1068.7 459.8 1065.8 474.4 1062.9 484 C1060.0 493.6 1054.6 502.7 1052.9 506.4" fill="none" stroke="#ebebec" stroke-width="6" stroke-linecap="round"/>
<path d="M771 222 C773.7 226.0 780.8 237.3 787 246 C793.2 254.7 797.5 258.8 808 274 C818.5 289.2 837.7 317.7 850 337 C862.3 356.3 871.5 372.5 882 390 C892.5 407.5 902.7 422.8 913 442 C923.3 461.2 936.5 488.7 944 505 C951.5 521.3 954.0 531.5 958 540 C962.0 548.5 963.3 551.7 968 556 C972.7 560.3 983.0 564.3 986 566" fill="none" stroke="#e3e3e5" stroke-width="0.8"/>
<g style="opacity:.999" font-family="Liberation Sans, sans-serif" fill="#5f5f5f" stroke="#ececec" stroke-width="1.4" paint-order="stroke" text-anchor="middle">
<text x="523" y="101.08" font-size="8.8" letter-spacing="1" transform="rotate(18 523 98)">DERBY ROAD</text>
<text x="864.7" y="131.875" font-size="8.5" letter-spacing="1" transform="rotate(3 864.7 128.9)">WOLLATON STREET</text>
<text x="1227.5" y="39.475" font-size="8.5" letter-spacing="1" transform="rotate(-50 1227.5 36.5)">RICK ST</text>
<text x="658.6" y="354.05" font-size="9" letter-spacing="0.9" transform="rotate(39 658.6 350.9)">THE ROPEWALK</text>
<text x="651.1" y="380.35" font-size="9" letter-spacing="0.9" transform="rotate(30 651.1 377.2)">PARK TERRACE</text>
<text x="601.2" y="402.55" font-size="9" letter-spacing="0.9" transform="rotate(29 601.2 399.4)">PARK VALLEY</text>
<text x="523" y="354.55" font-size="9" letter-spacing="0.9" transform="rotate(59 523 351.4)">CLARE VALLEY</text>
<text x="473.7" y="364.55" font-size="9" letter-spacing="0.9" transform="rotate(66 473.7 361.4)">TATTERSHALL DRIVE</text>
<text x="1086.1" y="249.65" font-size="9" letter-spacing="1.2" transform="rotate(-3 1086.1 246.5)">SMITHY ROW</text>
<text x="898.7" y="301.65" font-size="9" letter-spacing="0.9" transform="rotate(-46 898.7 298.5)">ST JAMES STREET</text>
<text x="1009.9" y="385.75" font-size="9" letter-spacing="1" transform="rotate(-30 1009.9 382.6)">HOUNDS GATE</text>
<text x="1172.3" y="302.55" font-size="9" letter-spacing="1" transform="rotate(-9 1172.3 299.4)">BOTTLE LANE</text>
<text x="1314.9" y="389.05" font-size="9" letter-spacing="1" transform="rotate(-10 1314.9 385.9)">BROADWAY</text>
<text x="594.2" y="467.15" font-size="9" letter-spacing="0.9" transform="rotate(57 594.2 464)">HUNTINGDON DRIVE</text>
<text x="664.4" y="560.05" font-size="9" letter-spacing="0.9" transform="rotate(46 664.4 556.9)">OGLE DRIVE</text>
<text x="746.1" y="502.55" font-size="9" letter-spacing="0.9" transform="rotate(-22 746.1 499.4)">LENTON ROAD</text>
<text x="852.3" y="439.65" font-size="9" letter-spacing="0.9" transform="rotate(-47 852.3 436.5)">FRIAR LANE</text>
<text x="1034.9" y="425.85" font-size="9" letter-spacing="1" transform="rotate(-19 1034.9 422.7)">CASTLE GATE</text>
<text x="1063.6" y="469.65" font-size="9" letter-spacing="1" transform="rotate(-78 1063.6 466.5)">LISTER GATE</text>
<text x="1264.4" y="506.55" font-size="9" letter-spacing="1.2" transform="rotate(0 1264.4 503.4)">CLIFF ROAD</text>
<text x="536.7" y="697.05" font-size="9" letter-spacing="1" transform="rotate(-12 536.7 693.9)">FISHPOND DRIVE</text>
<text x="656.1" y="636.85" font-size="9" letter-spacing="0.9" transform="rotate(-38 656.1 633.7)">HAMILTON DRIVE</text>
<text x="640.4" y="679.35" font-size="9" letter-spacing="1" transform="rotate(6 640.4 676.2)">HOPE DRIVE</text>
<text x="707.3" y="735.05" font-size="9" letter-spacing="1" transform="rotate(-14 707.3 731.9)">PARK W</text>
<text x="729.8" y="712.55" font-size="9" letter-spacing="1" transform="rotate(-48 729.8 709.4)">HARF</text>
<text x="582.4" y="83.28" font-size="8.8" letter-spacing="1" transform="rotate(8 582.4 80.2)">STREET</text>
</g>
<g style="opacity:.999" font-family="Liberation Sans, sans-serif" font-size="8.8" text-anchor="middle" fill="#666">
<rect x="606.95" y="83.3" width="24.7" height="13" rx="2.5" fill="#fff" stroke="#9a9a9a" stroke-width=".8"/><text x="619.3" y="93">A610</text>
<rect x="852" y="366" width="30" height="13" rx="2.5" fill="#fff" stroke="#9a9a9a" stroke-width=".8"/><text x="867" y="375.7">A6008</text>
<rect x="1276" y="585.5" width="30" height="13" rx="2.5" fill="#fff" stroke="#9a9a9a" stroke-width=".8"/><text x="1291" y="595.2">A6008</text>
<rect x="890.7" y="776" width="30" height="13" rx="2.5" fill="#fff" stroke="#9a9a9a" stroke-width=".8"/><text x="905.7" y="785.7">A6008</text>
<rect x="691" y="676.5" width="30" height="13" rx="2.5" fill="#fff" stroke="#9a9a9a" stroke-width=".8"/><text x="706" y="686.2">A6005</text>
</g>
<g fill="rgba(255,186,186,0.62)" stroke="#e4585c" stroke-width="1.5" stroke-linejoin="round">
<path d="M726.1 525.9 L727.8 518.8 L733.7 509.3 L745.6 499.8 L762.2 493.9 L781.2 489.1 L790.7 488 L791.9 485.6 L802.5 483.2 L814.4 477.3 L823.9 470.2 L833.4 468.5 L840.5 471.4 L850 483.2 L861.8 502.2 L871.3 518.8 L876.1 530.7 L883.2 544.9 L887.9 556.8 L892.7 567.4 L876.1 575.7 L852.3 588.1 L840 594.7 L833.4 604.2 L821.5 609 L807.3 610.1 L791.9 603 L788.3 598.3 L778.8 591.2 L766.9 582.9 L755.1 578.1 L755.1 566.7 L744.4 558.4 L739.7 562 L732.5 553.2 L726.6 540.2Z"/>
<path d="M781.2 595.2 L769.3 603.7 L768.4 607.8 L774.1 611.8 L790.7 616.8 L809.6 623.2 L827.4 627.5 L844 621.3 L862.3 607.8 L852.3 588.1 L840 594.7 L833.4 604.2 L821.5 609 L807.3 610.1 L791.9 603 L788.3 598.3Z"/>
<path d="M772.2 567.4 L792.3 553.2 L820.8 594 L814.4 599 L813.4 597.6 L806.1 605.4 L797.3 593.5 L800.9 590 L801.3 585.2 L797.8 581.7 L791.9 581.7 L789 579.3 L785.4 578.1 L782.4 574.6 L778.8 575.7Z" fill="#dddee1"/>
<path d="M1010.4 408.4 L1016.4 405.4 L1018.9 411.4 L1012.9 414.4Z"/>
<path d="M1159.7 387.5 L1167.1 386.9 L1166.8 395.8 L1164.5 396.5 L1164.5 409.3 L1158.8 409.9 L1158.1 401.3 L1155.6 400.6 L1156.9 397.4 L1159.4 396.5Z"/>
<path d="M1169.3 462.7 L1172.3 466 L1169.3 469 L1166.6 465.7Z"/>
<path d="M1171.1 481.5 L1174.8 476 L1189.8 471.5 L1191.5 479 L1178.6 488.5 L1172.3 486.5Z"/>
<path d="M782.5 221 L786.5 224.5 L782.5 224.5Z" fill="#e4585c" stroke="none"/>
</g>
<g fill="#0a0a8c">
<path d="M503.2 80.8l2.7 4.8h-5.4zM525.5 83.8l2.7 4.8h-5.4zM589.4 98.7l2.7 4.8h-5.4zM605.2 103.7l2.7 4.8h-5.4zM623.4 110.7l2.7 4.8h-5.4zM650.1 124l2.7 4.8h-5.4zM541.9 111.7l2.7 4.8h-5.4zM483.2 120.7l2.7 4.8h-5.4zM606.2 165.7l2.7 4.8h-5.4zM673.4 167.7l2.7 4.8h-5.4zM673.4 186.9l2.7 4.8h-5.4zM714.3 174.7l2.7 4.8h-5.4zM716.3 193.9l2.7 4.8h-5.4zM541.2 197.7l2.7 4.8h-5.4zM542.9 211.7l2.7 4.8h-5.4zM632.9 213.7l2.7 4.8h-5.4zM934.2 110.7l2.7 4.8h-5.4zM903 141.7l2.7 4.8h-5.4zM979.4 120.7l2.7 4.8h-5.4zM997.2 125.5l2.7 4.8h-5.4zM1004.2 125.5l2.7 4.8h-5.4zM1032.1 104.7l2.7 4.8h-5.4zM1041.4 105.7l2.7 4.8h-5.4zM1037.1 118.7l2.7 4.8h-5.4zM1046.1 115.7l2.7 4.8h-5.4zM1082.1 89l2.7 4.8h-5.4zM1044.1 143.7l2.7 4.8h-5.4zM1058.1 143l2.7 4.8h-5.4zM1022.1 152l2.7 4.8h-5.4zM1041.1 166.7l2.7 4.8h-5.4zM1020.1 182.7l2.7 4.8h-5.4zM998.9 188.7l2.7 4.8h-5.4zM960.2 153.2l2.7 4.8h-5.4zM960.2 157.7l2.7 4.8h-5.4zM960.2 162.2l2.7 4.8h-5.4zM960.2 167.7l2.7 4.8h-5.4zM960.2 175.7l2.7 4.8h-5.4zM955.2 182.4l2.7 4.8h-5.4zM937.2 186.2l2.7 4.8h-5.4zM937.2 190.7l2.7 4.8h-5.4zM937.2 195.2l2.7 4.8h-5.4zM937.2 198.2l2.7 4.8h-5.4zM938.2 208.2l2.7 4.8h-5.4zM1138.1 137.7l2.7 4.8h-5.4zM1138.1 192.7l2.7 4.8h-5.4zM1133.1 203.7l2.7 4.8h-5.4zM1114.8 209.7l2.7 4.8h-5.4zM1178.2 135l2.7 4.8h-5.4zM1269.2 160l2.7 4.8h-5.4zM1257.2 166l2.7 4.8h-5.4zM1213.2 175l2.7 4.8h-5.4zM1222.2 181.9l2.7 4.8h-5.4zM1247.2 204.9l2.7 4.8h-5.4zM1250.2 213.7l2.7 4.8h-5.4zM1178.2 213.7l2.7 4.8h-5.4zM1296.2 212.9l2.7 4.8h-5.4zM550.2 219.3l2.7 4.8h-5.4zM548.2 233.3l2.7 4.8h-5.4zM663.4 218.3l2.7 4.8h-5.4zM725.1 229.8l2.7 4.8h-5.4zM565.2 262l2.7 4.8h-5.4zM531.2 269.8l2.7 4.8h-5.4zM545.2 269.8l2.7 4.8h-5.4zM561.2 277.8l2.7 4.8h-5.4zM564.2 288.8l2.7 4.8h-5.4zM559.2 299.7l2.7 4.8h-5.4zM590.2 264.8l2.7 4.8h-5.4zM594.2 274.3l2.7 4.8h-5.4zM596.2 288.3l2.7 4.8h-5.4zM596.2 300.7l2.7 4.8h-5.4zM637.1 282l2.7 4.8h-5.4zM672.1 274l2.7 4.8h-5.4zM680.1 280l2.7 4.8h-5.4zM694.1 287l2.7 4.8h-5.4zM718.1 299.7l2.7 4.8h-5.4zM655.1 293l2.7 4.8h-5.4zM663.1 295l2.7 4.8h-5.4zM671.1 297.7l2.7 4.8h-5.4zM679.1 303l2.7 4.8h-5.4zM694.1 310l2.7 4.8h-5.4zM713.1 317l2.7 4.8h-5.4zM718.1 325l2.7 4.8h-5.4zM714.1 331l2.7 4.8h-5.4zM620.1 366l2.7 4.8h-5.4zM632.1 372.7l2.7 4.8h-5.4zM644.1 379.7l2.7 4.8h-5.4zM655.1 386.7l2.7 4.8h-5.4zM666.1 393.7l2.7 4.8h-5.4zM677.1 399.9l2.7 4.8h-5.4zM696.1 396.4l2.7 4.8h-5.4zM701.1 392.9l2.7 4.8h-5.4zM567.2 386.9l2.7 4.8h-5.4zM580.2 394.7l2.7 4.8h-5.4zM593.2 401.7l2.7 4.8h-5.4zM605.2 408.7l2.7 4.8h-5.4zM776.3 377.7l2.7 4.8h-5.4zM779.3 383.7l2.7 4.8h-5.4zM785.3 381.7l2.7 4.8h-5.4zM790.3 379.9l2.7 4.8h-5.4zM797.3 377.9l2.7 4.8h-5.4zM802.3 375.7l2.7 4.8h-5.4zM808.3 372l2.7 4.8h-5.4zM811.3 368.7l2.7 4.8h-5.4zM814.3 365l2.7 4.8h-5.4zM785.3 404.9l2.7 4.8h-5.4zM798.3 401.7l2.7 4.8h-5.4zM803.3 407.9l2.7 4.8h-5.4zM806.3 413.7l2.7 4.8h-5.4zM854.3 409.7l2.7 4.8h-5.4zM911.2 224.8l2.7 4.8h-5.4zM920.2 224.8l2.7 4.8h-5.4zM925.2 225.8l2.7 4.8h-5.4zM933.2 226.8l2.7 4.8h-5.4zM938.2 220.8l2.7 4.8h-5.4zM993.2 232.8l2.7 4.8h-5.4zM1000.2 232.8l2.7 4.8h-5.4zM1011.2 228.8l2.7 4.8h-5.4zM1015.2 232.8l2.7 4.8h-5.4zM1019.2 226.8l2.7 4.8h-5.4zM1038.1 220.8l2.7 4.8h-5.4zM1047.1 229.8l2.7 4.8h-5.4zM1055.1 228.8l2.7 4.8h-5.4zM1062.1 226.8l2.7 4.8h-5.4zM1155.1 225.8l2.7 4.8h-5.4zM1143.1 235.8l2.7 4.8h-5.4zM888.2 247l2.7 4.8h-5.4zM897.2 253l2.7 4.8h-5.4zM906.2 256.5l2.7 4.8h-5.4zM912.2 261.8l2.7 4.8h-5.4zM916.2 265.8l2.7 4.8h-5.4zM1022.1 252l2.7 4.8h-5.4zM1054.1 248l2.7 4.8h-5.4zM1081.1 262l2.7 4.8h-5.4zM1023.1 276.8l2.7 4.8h-5.4zM1055.1 276.8l2.7 4.8h-5.4zM1140.1 254l2.7 4.8h-5.4zM1074.1 287l2.7 4.8h-5.4zM1092.1 285.8l2.7 4.8h-5.4zM1127.1 291.8l2.7 4.8h-5.4zM891.2 290l2.7 4.8h-5.4zM887.2 295l2.7 4.8h-5.4zM883.2 300l2.7 4.8h-5.4zM899.2 297l2.7 4.8h-5.4zM895.2 305.7l2.7 4.8h-5.4zM888.2 312.7l2.7 4.8h-5.4zM986.2 303.7l2.7 4.8h-5.4zM990.2 312.7l2.7 4.8h-5.4zM1035.1 298.7l2.7 4.8h-5.4zM1127.1 300.7l2.7 4.8h-5.4zM1127.1 310.7l2.7 4.8h-5.4zM1141.1 304.7l2.7 4.8h-5.4zM1142.1 312.7l2.7 4.8h-5.4zM1143.1 322.7l2.7 4.8h-5.4zM1143.1 330.7l2.7 4.8h-5.4zM1088.1 309.7l2.7 4.8h-5.4zM1106.1 316.7l2.7 4.8h-5.4zM1080.1 323.7l2.7 4.8h-5.4zM1088.1 321.7l2.7 4.8h-5.4zM1125.1 326.7l2.7 4.8h-5.4zM1007.2 327.7l2.7 4.8h-5.4zM1022.1 335.7l2.7 4.8h-5.4zM993.2 344.7l2.7 4.8h-5.4zM1106.1 344.7l2.7 4.8h-5.4zM1077.1 352.7l2.7 4.8h-5.4zM1104.1 353.7l2.7 4.8h-5.4zM1148.1 379.7l2.7 4.8h-5.4zM1023.1 378.7l2.7 4.8h-5.4zM1029.1 375.7l2.7 4.8h-5.4zM1036.1 372.7l2.7 4.8h-5.4zM1138.1 383.7l2.7 4.8h-5.4zM1138.1 388.7l2.7 4.8h-5.4zM1034.1 393.7l2.7 4.8h-5.4zM1139.1 395.7l2.7 4.8h-5.4zM1108.1 398.7l2.7 4.8h-5.4zM1119.1 400.7l2.7 4.8h-5.4zM1129.1 403.7l2.7 4.8h-5.4zM1139.1 403.7l2.7 4.8h-5.4zM1151.1 403.7l2.7 4.8h-5.4zM1154.1 403.7l2.7 4.8h-5.4zM1023.1 405.7l2.7 4.8h-5.4zM1011.2 414.7l2.7 4.8h-5.4zM1128.1 414.7l2.7 4.8h-5.4zM1140.1 414.7l2.7 4.8h-5.4zM1179.2 235.8l2.7 4.8h-5.4zM1205.2 240.8l2.7 4.8h-5.4zM1229.2 244.8l2.7 4.8h-5.4zM1240.2 245.8l2.7 4.8h-5.4zM1179.2 253l2.7 4.8h-5.4zM1191.2 262.8l2.7 4.8h-5.4zM1278.2 243.8l2.7 4.8h-5.4zM1302.2 226.8l2.7 4.8h-5.4zM1262.2 260l2.7 4.8h-5.4zM1271.2 260l2.7 4.8h-5.4zM1277.2 260l2.7 4.8h-5.4zM1282.2 259l2.7 4.8h-5.4zM1292.2 257l2.7 4.8h-5.4zM1297.2 260l2.7 4.8h-5.4zM1294.2 265.8l2.7 4.8h-5.4zM1280.2 268.8l2.7 4.8h-5.4zM1270.2 271.8l2.7 4.8h-5.4zM1260.2 273.8l2.7 4.8h-5.4zM1309.2 259.3l2.7 4.8h-5.4zM1203.2 282.8l2.7 4.8h-5.4zM1187.2 285.8l2.7 4.8h-5.4zM1175.2 289.8l2.7 4.8h-5.4zM1163.2 289.8l2.7 4.8h-5.4zM1300.2 305.7l2.7 4.8h-5.4zM1259.2 348.7l2.7 4.8h-5.4zM1269.2 347.7l2.7 4.8h-5.4zM1186.2 353.7l2.7 4.8h-5.4zM1183.2 365.7l2.7 4.8h-5.4zM1172.2 365.7l2.7 4.8h-5.4zM1163.2 366.7l2.7 4.8h-5.4zM1184.2 376.7l2.7 4.8h-5.4zM1249.2 368.7l2.7 4.8h-5.4zM1286.2 369.7l2.7 4.8h-5.4zM1291.2 376.7l2.7 4.8h-5.4zM1292.2 388.7l2.7 4.8h-5.4zM1288.2 396.7l2.7 4.8h-5.4zM1237.2 398.7l2.7 4.8h-5.4zM1202.2 400.7l2.7 4.8h-5.4zM1172.2 401.7l2.7 4.8h-5.4zM1207.2 410.7l2.7 4.8h-5.4zM1292.2 410.7l2.7 4.8h-5.4zM1305.2 410.7l2.7 4.8h-5.4zM649.1 436.8l2.7 4.8h-5.4zM688.1 436.8l2.7 4.8h-5.4zM603.2 504.7l2.7 4.8h-5.4zM630.1 543.7l2.7 4.8h-5.4zM658.1 526.7l2.7 4.8h-5.4zM672.1 522.7l2.7 4.8h-5.4zM687.1 518.7l2.7 4.8h-5.4zM696.1 512.7l2.7 4.8h-5.4zM705.1 528.7l2.7 4.8h-5.4zM716.1 522.7l2.7 4.8h-5.4zM720.1 530.7l2.7 4.8h-5.4zM711.1 547.7l2.7 4.8h-5.4zM723.1 564.7l2.7 4.8h-5.4zM750.1 485.8l2.7 4.8h-5.4zM761.1 471.8l2.7 4.8h-5.4zM757.1 502.7l2.7 4.8h-5.4zM785 483.8l2.7 4.8h-5.4zM788 494.8l2.7 4.8h-5.4zM802 479.8l2.7 4.8h-5.4zM828 479.8l2.7 4.8h-5.4zM849 492.8l2.7 4.8h-5.4zM787 457.8l2.7 4.8h-5.4zM789 445.8l2.7 4.8h-5.4zM806 453.8l2.7 4.8h-5.4zM805 434.8l2.7 4.8h-5.4zM810 440.8l2.7 4.8h-5.4zM816 465.8l2.7 4.8h-5.4zM835 457.8l2.7 4.8h-5.4zM850 446.8l2.7 4.8h-5.4zM851 450.8l2.7 4.8h-5.4zM857 467.8l2.7 4.8h-5.4zM741.1 546.7l2.7 4.8h-5.4zM761.1 559.7l2.7 4.8h-5.4zM745.1 566.7l2.7 4.8h-5.4zM788 541.7l2.7 4.8h-5.4zM792 543.7l2.7 4.8h-5.4zM805 537.7l2.7 4.8h-5.4zM829 530.7l2.7 4.8h-5.4zM852 550.7l2.7 4.8h-5.4zM813 565.7l2.7 4.8h-5.4zM803 573.7l2.7 4.8h-5.4zM789 594.7l2.7 4.8h-5.4zM852 598.7l2.7 4.8h-5.4zM1011.2 415.8l2.7 4.8h-5.4zM1091.1 418.8l2.7 4.8h-5.4zM1097.1 418.8l2.7 4.8h-5.4zM1100.1 418.8l2.7 4.8h-5.4zM1106.1 418.8l2.7 4.8h-5.4zM1113.1 418.8l2.7 4.8h-5.4zM1121.1 418.8l2.7 4.8h-5.4zM1129.1 415.8l2.7 4.8h-5.4zM1134.1 415.8l2.7 4.8h-5.4zM1140.1 415.8l2.7 4.8h-5.4zM1140.1 421.8l2.7 4.8h-5.4zM1129.1 425.8l2.7 4.8h-5.4zM973.2 432.8l2.7 4.8h-5.4zM968.2 435.8l2.7 4.8h-5.4zM928.2 437.8l2.7 4.8h-5.4zM1006.2 436.8l2.7 4.8h-5.4zM1016.2 431.8l2.7 4.8h-5.4zM868.2 445.8l2.7 4.8h-5.4zM884.2 452.8l2.7 4.8h-5.4zM962.2 459.8l2.7 4.8h-5.4zM956.2 462.8l2.7 4.8h-5.4zM905.2 468.8l2.7 4.8h-5.4zM1005.2 470.8l2.7 4.8h-5.4zM1054.1 452.8l2.7 4.8h-5.4zM910.2 480.8l2.7 4.8h-5.4zM899.2 482.8l2.7 4.8h-5.4zM894.2 483.8l2.7 4.8h-5.4zM889.2 484.8l2.7 4.8h-5.4zM882.2 486.8l2.7 4.8h-5.4zM879.2 487.8l2.7 4.8h-5.4zM878.2 492.8l2.7 4.8h-5.4zM964.2 493.8l2.7 4.8h-5.4zM861.2 508.7l2.7 4.8h-5.4zM892.2 563.7l2.7 4.8h-5.4zM896.2 563.7l2.7 4.8h-5.4zM882.2 582.7l2.7 4.8h-5.4zM870.2 585.7l2.7 4.8h-5.4zM1226.2 430.8l2.7 4.8h-5.4zM1264.2 438.8l2.7 4.8h-5.4zM1285.2 424.8l2.7 4.8h-5.4zM1288.2 432.8l2.7 4.8h-5.4zM1306.2 429.8l2.7 4.8h-5.4zM1280.2 449.8l2.7 4.8h-5.4zM1285.2 450.8l2.7 4.8h-5.4zM1291.2 450.8l2.7 4.8h-5.4zM1300.2 452.8l2.7 4.8h-5.4zM1226.2 459.8l2.7 4.8h-5.4zM1246.2 456.8l2.7 4.8h-5.4zM1254.2 463.8l2.7 4.8h-5.4zM1274.2 468.8l2.7 4.8h-5.4zM1298.2 467.8l2.7 4.8h-5.4zM1304.2 467.8l2.7 4.8h-5.4zM789 594.8l2.7 4.8h-5.4zM852 598.8l2.7 4.8h-5.4zM842 632.8l2.7 4.8h-5.4zM819 662.8l2.7 4.8h-5.4zM870.2 585.8l2.7 4.8h-5.4zM882.2 583.3l2.7 4.8h-5.4zM892.2 618.8l2.7 4.8h-5.4zM1012.2 618.8l2.7 4.8h-5.4zM877.2 654.8l2.7 4.8h-5.4zM1077.1 634.8l2.7 4.8h-5.4zM1083.1 639.8l2.7 4.8h-5.4zM1073.1 659.8l2.7 4.8h-5.4zM1089.1 677.7l2.7 4.8h-5.4zM992.2 685.7l2.7 4.8h-5.4zM913.2 695.7l2.7 4.8h-5.4zM1136.1 703.7l2.7 4.8h-5.4zM1170.1 747.2l2.7 4.8h-5.4z"/>
</g>
<!--/MAP-->
</svg>
<div class="search"><span class="txt">Nottingham, City of Nottingham</span>
<svg style="left:331.6px;top:16.1px" width="18" height="18" viewBox="0 0 18 18"><path d="M3 3 L15 15 M15 3 L3 15" stroke="#333" stroke-width="1.3" fill="none"/></svg>
<div class="go"><svg style="left:9.5px;top:11.5px" width="24" height="24" viewBox="0 0 24 24"><circle cx="9.5" cy="9.5" r="7" stroke="#fff" stroke-width="1.3" fill="none"/><path d="M14.5 14.5 L21.5 21.5" stroke="#fff" stroke-width="1.3"/></svg></div>
</div>
<div class="btn" style="left:420px;top:10px;width:220px;height:50px;line-height:50.5px;">
<svg style="left:20px;top:14px" width="22" height="22" viewBox="0 0 22 22"><circle cx="11" cy="11" r="6.6" stroke="#fff" stroke-width="2" fill="none"/><circle cx="11" cy="11" r="3.2" fill="#fff"/><path d="M11 1v4M11 17v4M1 11h4M17 11h4" stroke="#fff" stroke-width="2"/></svg>
<b style="position:absolute;left:47px;top:0;white-space:nowrap;transform-origin:0 50%;transform:scaleX(.915)">Use current location</b></div>
<div class="btn" style="left:795px;top:10px;width:50px;height:50px;">
<svg style="left:14px;top:14.5px" width="22" height="21" viewBox="0 0 22 21"><g stroke="#fff" stroke-width="1.3" fill="#fff" stroke-linejoin="round"><path d="M1.5 1.5L7.6 7.4" fill="none"/><path d="M0.8 0.8H5.8L0.8 5.8Z" stroke-width=".6"/><path d="M20.2 1.5L14.1 7.4" fill="none"/><path d="M20.9 0.8H15.9L20.9 5.8Z" stroke-width=".6"/><path d="M1.5 19.3L7.6 13.4" fill="none"/><path d="M0.8 20H5.8L0.8 15Z" stroke-width=".6"/><path d="M20.2 19.3L14.1 13.4" fill="none"/><path d="M20.9 20H15.9L20.9 15Z" stroke-width=".6"/></g></svg></div>
<div class="btn" style="left:10px;top:688px;width:60px;height:50px;line-height:51px;"><b style="transform:scaleX(0.925)">Draw</b></div>
<div class="btn" style="left:585px;top:688px;width:60px;height:50px;line-height:51px;"><b style="transform:scaleX(0.88)">Key</b></div>
<div class="btn" style="left:655px;top:688px;width:60px;height:50px;line-height:51px;"><b style="transform:scaleX(0.92)">Filter</b></div>
<div class="btn" style="left:725px;top:688px;width:60px;height:50px;line-height:51px;"><b style="transform:scaleX(0.925)">View</b></div>
<div class="btn" style="left:795px;top:688px;width:50px;height:23px;line-height:27px;font-size:20px;">+</div>
<div class="btn" style="left:795px;top:714px;width:50px;height:24px;line-height:28px;font-size:20px;">&#8722;</div>
<div class="attr"><span style="display:inline-block;position:relative;left:-1px;transform:scaleX(.94)">Esri, HERE | &#169; Historic England.</span></div>
</div>
</body></html>
